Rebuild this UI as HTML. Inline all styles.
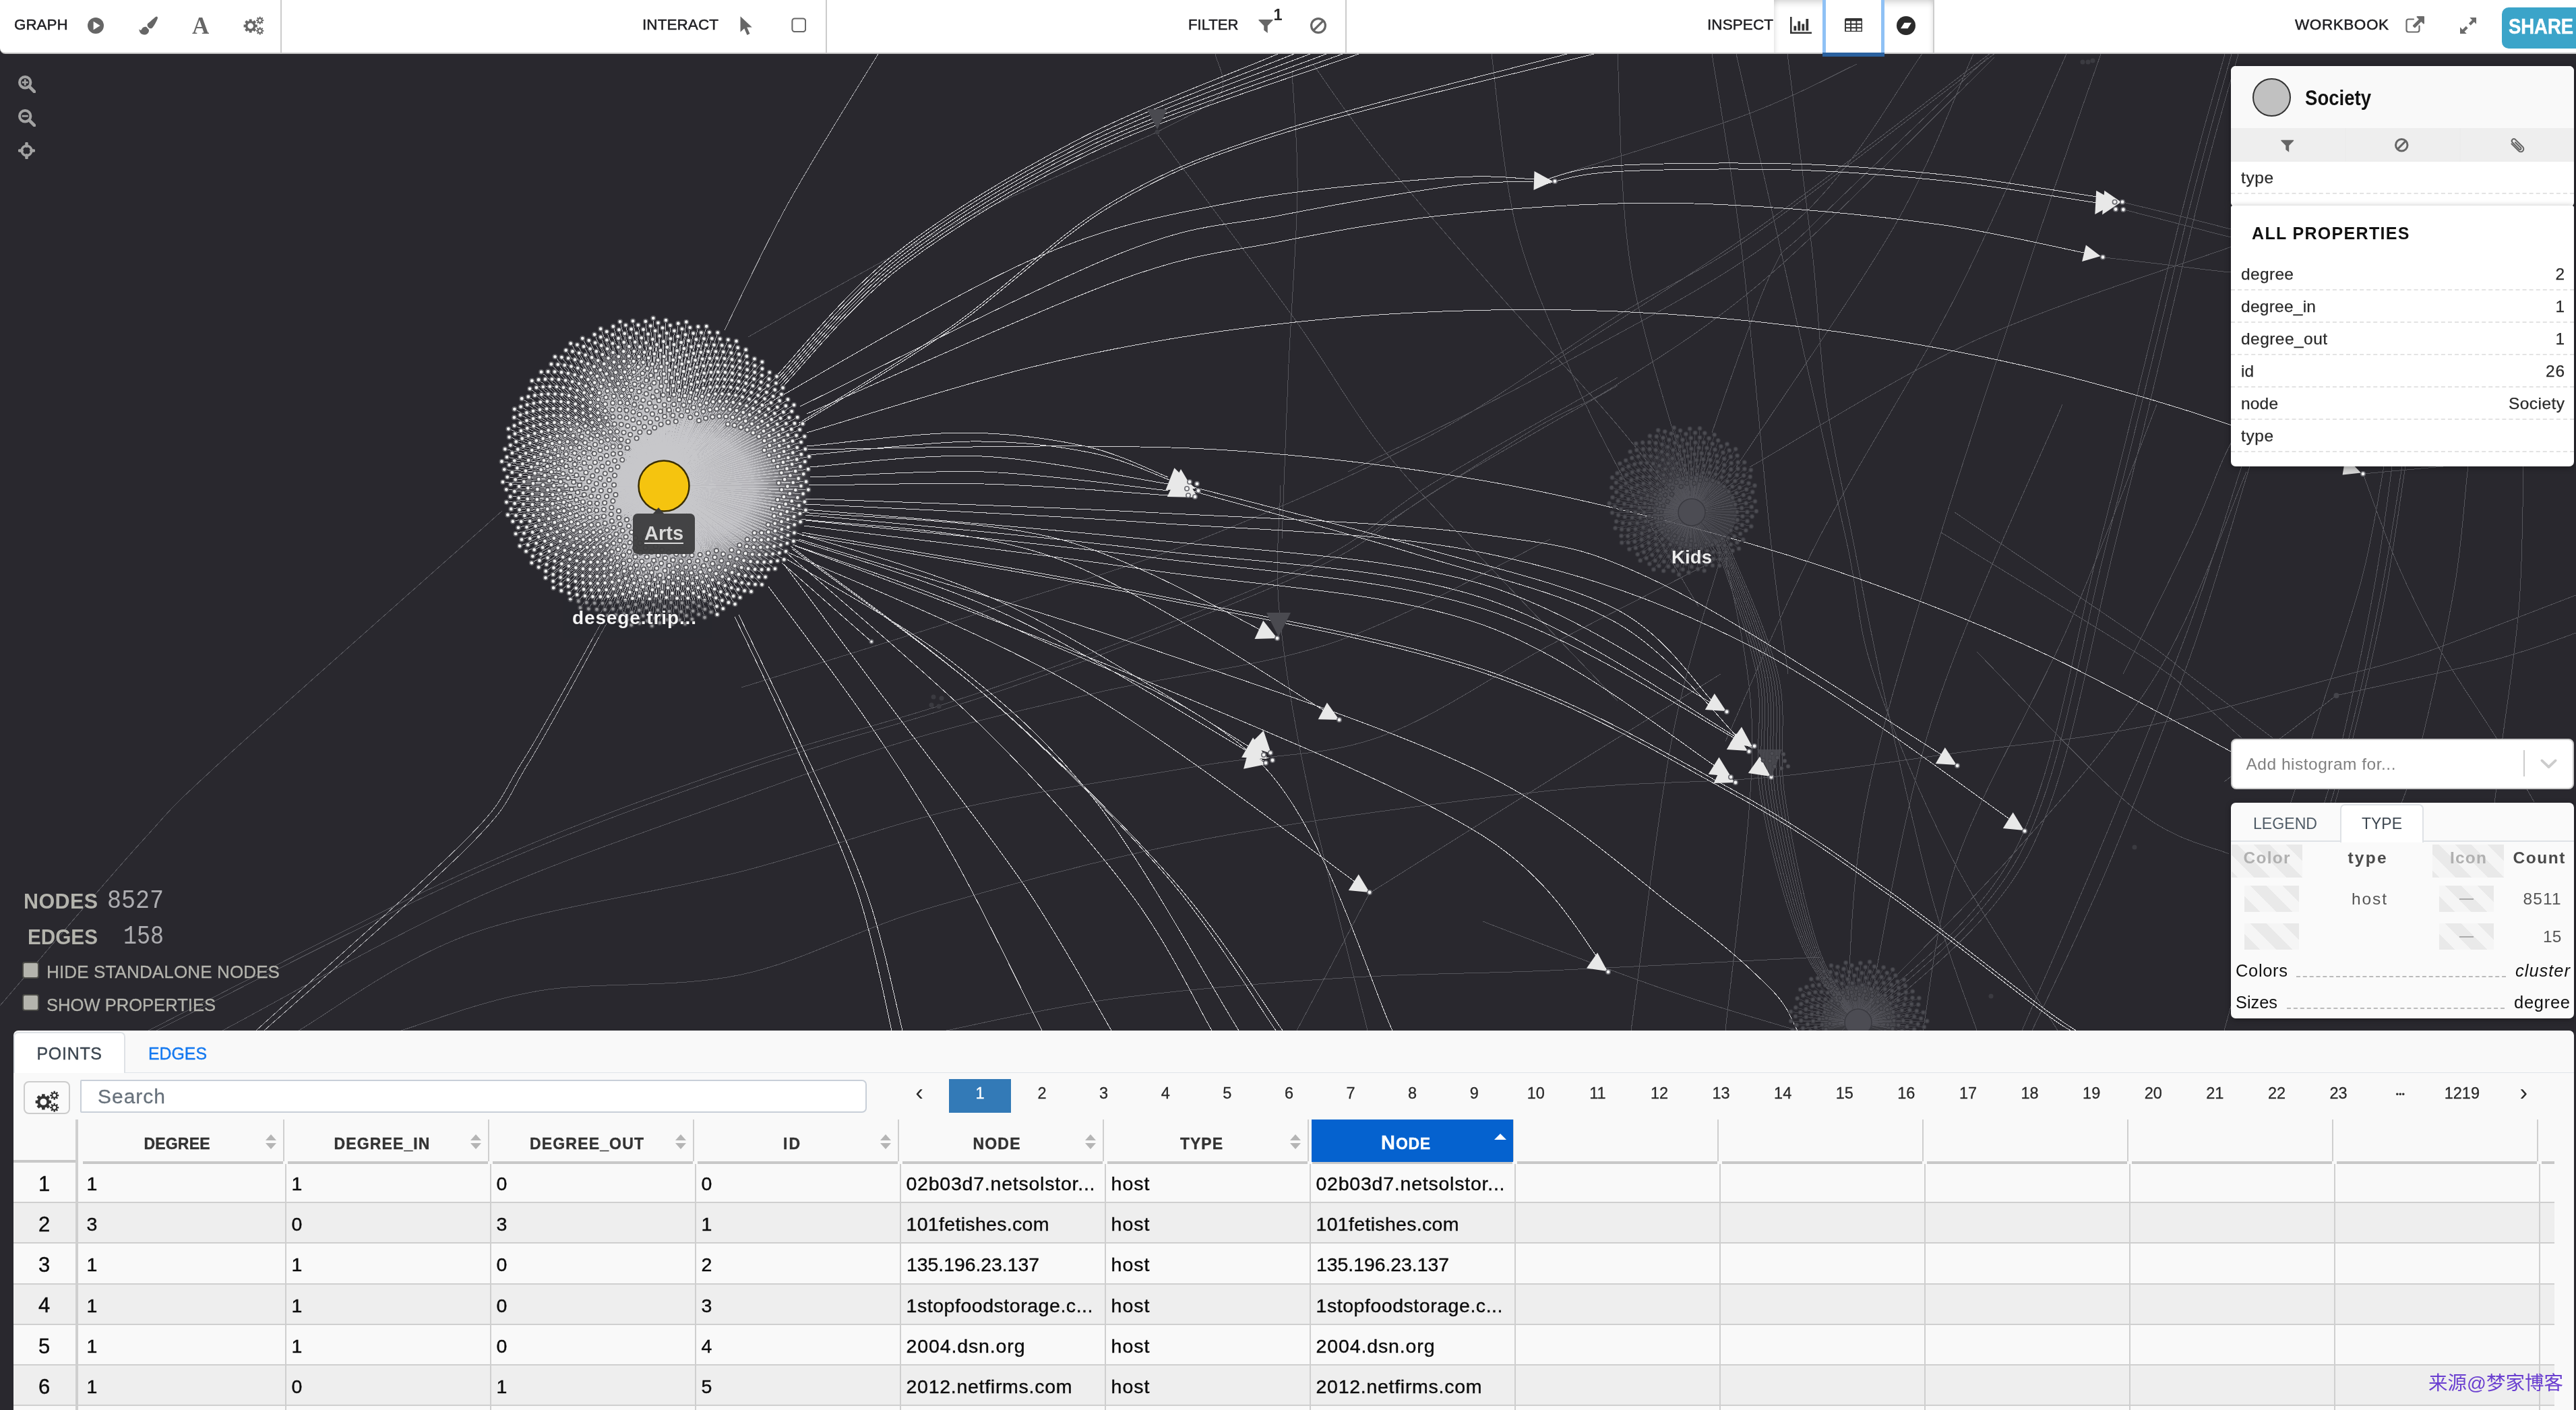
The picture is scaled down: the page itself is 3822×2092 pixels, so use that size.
<!DOCTYPE html><html lang="en"><head><meta charset="utf-8"><title>Graph</title><style>
html,body{margin:0;padding:0}
#w{position:absolute;left:0;top:0;width:3822px;height:2092px;overflow:hidden;will-change:transform}
body{width:3822px;height:2092px;overflow:hidden;background:#29282e;position:relative;font-family:"Liberation Sans",sans-serif}
.b{position:absolute;box-sizing:border-box;display:block}
.t{position:absolute;white-space:nowrap;line-height:1}
.d{fill:none;stroke:#55555b;stroke-width:1;shape-rendering:crispEdges}
.e{fill:none;stroke:#d8d8da;stroke-width:1;shape-rendering:crispEdges}
.m{fill:none;stroke:#a8a8ac;stroke-width:1;shape-rendering:crispEdges}
.dash{position:absolute;height:0;border-top:2px dashed #e3e3e3}
</style></head><body><div id="w">
<svg class="b" style="left:0;top:0" width="3822" height="1540" viewBox="0 0 3822 1540">
<path d="M0 1492C35 1452 154 1310 209 1250C264 1190 239 1212 328 1130C417 1048 676 820 745 758" class="d"/>
<path d="M220 1529C300 1489 553 1356 700 1290C847 1224 984 1176 1100 1136C1216 1096 1298 1078 1394 1047C1490 1016 1582 984 1677 947C1772 910 1892 864 1966 826C2040 788 2049 764 2121 720C2193 676 2354 587 2400 560" class="d"/>
<path d="M232 1529C311 1490 560 1360 705 1296C850 1232 985 1184 1100 1144C1215 1104 1298 1086 1394 1055C1490 1024 1581 992 1677 955C1773 918 1894 872 1970 834C2046 796 2058 772 2130 728C2202 684 2355 598 2400 572" class="d"/>
<path d="M330 1529C392 1497 572 1393 700 1335C828 1277 990 1223 1100 1183C1210 1143 1273 1120 1362 1094C1451 1068 1532 1050 1635 1026C1738 1002 1871 990 1982 952C2093 914 2247 825 2300 800" class="d"/>
<path d="M443 1529C486 1505 590 1424 700 1385C810 1346 979 1324 1100 1293C1221 1262 1311 1225 1425 1199C1539 1173 1679 1154 1782 1136C1885 1118 1959 1124 2045 1094C2131 1064 2215 1002 2300 957C2385 912 2511 849 2553 827" class="d"/>
<path d="M595 1529C629 1519 716 1484 800 1470C884 1456 1003 1467 1100 1446C1197 1425 1269 1379 1383 1346C1497 1313 1629 1275 1782 1246C1935 1217 2159 1188 2300 1173C2441 1158 2522 1163 2627 1153C2732 1143 2854 1123 2933 1113C3012 1103 3047 1100 3100 1092C3153 1084 3189 1077 3250 1063C3311 1048 3405 1022 3463 1006C3522 990 3541 987 3601 967C3660 946 3785 897 3822 883" class="d"/>
<path d="M1404 1529C1445 1521 1553 1495 1651 1482C1749 1469 1884 1458 1992 1451C2100 1444 2182 1445 2300 1440C2418 1435 2633 1423 2700 1420" class="d"/>
<path d="M1100 1020C1161 1001 1353 942 1467 905C1581 868 1673 843 1782 800C1891 757 2018 702 2121 647C2224 592 2319 518 2400 468C2481 418 2513 411 2606 346C2699 281 2900 124 2959 80" class="d"/>
<path d="M1900 720C1900 751 1891 830 1898 905C1905 980 1918 1063 1940 1167C1962 1271 2014 1469 2029 1529" class="d"/>
<path d="M2032 1325L1924 1529" class="d"/>
<path d="M2032 1325C2077 1297 2213 1211 2300 1157C2387 1103 2511 1026 2553 1000" class="d"/>
<path d="M1803 80C1804 90 1824 121 1810 140C1796 159 1732 187 1717 196" class="d"/>
<path d="M1917 105C1918 135 1926 212 1925 284C1924 356 1916 454 1912 540C1908 626 1904 757 1902 800" class="d"/>
<path d="M1718 200C1751 245 1862 392 1917 468C1972 544 2002 602 2045 657C2088 712 2113 736 2172 800C2231 864 2362 1000 2400 1040" class="d"/>
<path d="M1717 196C1664 220 1501 289 1400 340C1299 391 1158 473 1110 500" class="d"/>
<path d="M1948 95C1964 117 1999 171 2045 228C2091 285 2165 370 2224 437C2283 504 2345 566 2400 631C2455 696 2528 794 2553 827" class="d"/>
<path d="M2213 80C2219 122 2230 258 2249 335C2268 412 2301 480 2326 540C2351 600 2368 633 2400 693C2432 753 2500 866 2520 900" class="d"/>
<path d="M2019 800C2062 773 2212 675 2275 637C2338 599 2341 608 2400 570C2459 532 2534 488 2627 407C2720 326 2904 139 2959 85" class="d"/>
<path d="M2300 540C2351 507 2497 417 2606 340C2715 263 2894 123 2952 80" class="d"/>
<path d="M2540 642C2554 603 2602 458 2627 407C2652 356 2634 389 2688 335C2742 281 2906 127 2949 85" class="d"/>
<path d="M2540 80C2548 131 2572 266 2586 386C2600 506 2616 698 2627 800C2638 902 2649 967 2653 1000" class="d"/>
<path d="M2576 80C2590 140 2630 317 2657 437C2684 557 2718 706 2739 800C2760 894 2754 922 2780 1000C2806 1078 2848 1179 2893 1267C2938 1355 3026 1485 3053 1529" class="d"/>
<path d="M2652 80C2658 128 2678 281 2688 366C2698 451 2699 519 2709 591C2719 663 2734 724 2749 800C2764 876 2780 961 2800 1050C2820 1139 2845 1253 2867 1333C2889 1413 2922 1496 2933 1529" class="d"/>
<path d="M2300 264C2348 249 2510 200 2586 172C2662 144 2727 108 2755 95" class="d"/>
<path d="M2852 80C2820 122 2749 257 2657 335C2565 413 2410 489 2300 550C2190 611 2050 675 2000 700" class="d"/>
<path d="M2928 80C2908 122 2870 233 2811 335C2752 437 2615 633 2576 693" class="d"/>
<path d="M3066 80C3039 140 2964 317 2903 437C2842 557 2755 690 2698 800C2641 910 2583 1050 2560 1100" class="d"/>
<path d="M3117 80C3098 134 3045 287 3005 407C2965 527 2917 668 2877 800C2837 932 2790 1078 2767 1200C2744 1322 2744 1474 2740 1529" class="d"/>
<path d="M3301 80C3292 114 3276 164 3245 284C3214 404 3160 636 3117 800C3074 964 3051 1146 2987 1267C2923 1388 2775 1485 2733 1529" class="d"/>
<path d="M3311 80C3302 114 3286 164 3255 284C3224 404 3170 636 3127 800C3084 964 3061 1146 2997 1267C2933 1388 2787 1485 2745 1529" class="d"/>
<path d="M3321 80C3312 114 3295 164 3265 284C3235 404 3182 636 3140 800C3098 964 3073 1146 3010 1267C2947 1388 2802 1485 2760 1529" class="d"/>
<path d="M3311 366C3248 389 3052 450 2933 504C2814 558 2652 662 2596 693" class="d"/>
<path d="M3333 700C3311 750 3258 906 3200 1000C3142 1094 3065 1179 2987 1267C2909 1355 2775 1485 2733 1529" class="d"/>
<path d="M3060 600C3028 678 2916 912 2867 1067C2818 1222 2784 1452 2767 1529" class="d"/>
<path d="M3200 600C3178 656 3116 822 3067 933C3018 1044 2943 1168 2907 1267C2871 1366 2862 1485 2853 1529" class="d"/>
<path d="M2200 1367C2244 1384 2389 1440 2467 1467C2545 1494 2634 1519 2667 1529" class="d"/>
<path d="M2933 967C2972 1006 3105 1150 3167 1200C3229 1250 3284 1256 3307 1267" class="d"/>
<path d="M3320 640C3316 647 3311 654 3299 680C3287 706 3275 743 3250 796C3225 849 3167 966 3150 1000" class="d"/>
<path d="M3345 640C3342 649 3342 645 3326 692C3310 739 3284 831 3250 924C3216 1017 3162 1149 3120 1250C3078 1351 3020 1482 3000 1529" class="d"/>
<path d="M3357 640C3354 649 3356 636 3338 692C3320 748 3285 875 3250 973C3215 1071 3169 1187 3130 1280C3091 1373 3034 1488 3015 1529" class="d"/>
<path d="M3545 640C3544 649 3544 655 3537 692C3530 729 3521 796 3503 863C3485 930 3450 1030 3430 1095C3410 1160 3402 1178 3380 1250C3358 1322 3313 1482 3300 1529" class="d"/>
<path d="M3556 640C3555 649 3554 655 3549 692C3544 729 3536 796 3524 863C3512 930 3491 1030 3476 1095C3460 1160 3438 1224 3430 1250" class="d"/>
<path d="M3572 640C3571 649 3571 650 3564 692C3557 734 3544 826 3530 893C3517 960 3500 1036 3485 1095C3470 1154 3448 1224 3440 1250" class="d"/>
<path d="M3577 640C3576 649 3575 650 3569 692C3562 734 3550 826 3537 893C3524 960 3506 1036 3491 1095C3476 1154 3455 1224 3448 1250" class="d"/>
<path d="M3668 640C3667 649 3666 655 3662 692C3657 729 3654 796 3643 863C3632 930 3608 1039 3594 1095C3581 1151 3566 1182 3560 1200" class="d"/>
<path d="M3746 640C3746 649 3745 650 3744 692C3743 734 3743 826 3738 893C3733 960 3720 1044 3713 1095C3707 1146 3702 1182 3700 1200" class="d"/>
<path d="M3506 703C3514 724 3536 788 3555 832C3574 876 3597 923 3622 967C3647 1010 3681 1058 3704 1095C3727 1132 3751 1174 3760 1190" class="d"/>
<path d="M3466 1032C3506 1023 3642 994 3701 979C3760 963 3802 946 3822 939" class="d"/>
<path d="M3466 1032C3453 1042 3412 1074 3384 1095C3356 1116 3314 1149 3300 1160" class="d"/>
<path d="M2900 760C2947 792 3122 910 3180 950C3238 990 3218 979 3250 1003C3282 1027 3352 1080 3372 1095" class="d"/>
<path d="M2880 790C2930 821 3118 935 3180 975C3242 1015 3226 1008 3250 1028C3274 1048 3313 1084 3326 1095" class="d"/>
<path d="M3506 703L3625 692" class="d"/>
<path d="M3150 300C3165 304 3213 315 3240 322C3267 329 3298 337 3310 340" class="d"/>
<path d="M3151 311C3166 315 3214 327 3240 334C3266 341 3298 349 3310 352" class="d"/>
<path d="M3122 382C3142 384 3209 392 3240 396C3271 400 3298 403 3310 404" class="d"/>
<path d="M2400 80C2403 133 2403 297 2420 400C2437 503 2487 650 2500 700" class="d"/>
<path d="M2553 827C2541 872 2502 983 2480 1100C2458 1217 2430 1458 2420 1529" class="d"/>
<path d="M2560 827C2567 872 2600 983 2600 1100C2600 1217 2567 1458 2560 1529" class="d"/>
<path d="M2543 800C2554 833 2594 937 2606 1000C2618 1063 2601 1113 2612 1180C2623 1247 2649 1344 2672 1400C2695 1456 2735 1494 2748 1513" class="d"/>
<path d="M2545 800C2556 833 2598 937 2610 1000C2622 1063 2606 1113 2616 1180C2627 1247 2653 1344 2675 1400C2697 1456 2737 1494 2749 1513" class="d"/>
<path d="M2547 800C2558 833 2602 937 2614 1000C2626 1063 2610 1113 2621 1180C2632 1247 2656 1344 2678 1400C2700 1456 2738 1494 2750 1513" class="d"/>
<path d="M2550 800C2561 833 2605 937 2618 1000C2631 1063 2615 1113 2626 1180C2636 1247 2660 1344 2681 1400C2702 1456 2739 1494 2751 1513" class="d"/>
<path d="M2552 800C2564 833 2609 937 2622 1000C2635 1063 2620 1113 2630 1180C2640 1247 2664 1344 2684 1400C2704 1456 2741 1494 2752 1513" class="d"/>
<path d="M2554 800C2566 833 2613 937 2626 1000C2639 1063 2624 1113 2634 1180C2645 1247 2667 1344 2687 1400C2707 1456 2742 1494 2753 1513" class="d"/>
<path d="M2556 800C2568 833 2616 937 2630 1000C2644 1063 2629 1113 2639 1180C2649 1247 2671 1344 2690 1400C2709 1456 2743 1494 2754 1513" class="d"/>
<path d="M2558 800C2571 833 2620 937 2634 1000C2648 1063 2634 1113 2644 1180C2653 1247 2674 1344 2693 1400C2712 1456 2745 1494 2755 1513" class="d"/>
<path d="M2561 800C2574 833 2623 937 2638 1000C2653 1063 2638 1113 2648 1180C2658 1247 2678 1344 2696 1400C2714 1456 2746 1494 2756 1513" class="d"/>
<path d="M1075 490C1091 458 1134 365 1172 297C1210 229 1281 116 1303 80" class="m"/>
<path d="M894 921C874 956 810 1075 775 1130C740 1185 753 1184 687 1250C621 1316 431 1482 380 1529" class="m"/>
<path d="M900 925C880 960 817 1079 783 1134C749 1189 762 1188 697 1254C632 1320 443 1483 392 1529" class="m"/>
<path d="M1150 560C1179 530 1252 436 1326 378C1400 320 1499 260 1594 210C1689 160 1846 102 1896 80" class="e"/>
<path d="M1152 563C1182 533 1254 440 1329 381C1404 322 1504 262 1602 212C1700 162 1867 102 1920 80" class="e"/>
<path d="M1154 566C1184 536 1256 443 1332 384C1408 325 1508 265 1610 214C1712 163 1888 102 1944 80" class="e"/>
<path d="M1156 569C1186 539 1258 446 1335 387C1412 328 1512 267 1618 216C1724 165 1910 103 1968 80" class="e"/>
<path d="M1158 572C1188 542 1260 449 1338 390C1416 331 1517 270 1626 218C1735 166 1931 103 1992 80" class="e"/>
<path d="M1160 575C1190 545 1262 452 1341 393C1420 334 1522 272 1634 220C1746 168 1952 103 2016 80" class="e"/>
<path d="M1185 628C1223 604 1337 537 1415 482C1493 427 1571 346 1653 298C1735 250 1794 228 1906 192C2018 156 2255 99 2325 80" class="e"/>
<path d="M1185 631C1223 607 1337 541 1415 486C1493 431 1571 351 1653 303C1735 255 1787 234 1906 197C2025 160 2288 100 2365 80" class="e"/>
<path d="M1100 621C1172 582 1407 440 1529 386C1651 332 1728 320 1830 300C1932 280 2067 270 2142 264C2217 258 2257 266 2280 266" class="e"/>
<path d="M1187 603C1266 565 1544 423 1662 376C1780 329 1816 336 1897 320C1978 304 2084 286 2147 277C2210 268 2254 270 2275 269" class="e"/>
<path d="M1197 614C1274 581 1540 460 1657 417C1774 374 1822 374 1902 358C1982 342 2054 329 2137 320C2220 311 2320 304 2400 302C2480 300 2538 302 2617 307C2696 312 2797 322 2877 333C2957 344 3060 369 3097 376" class="e"/>
<path d="M2289 268C2306 264 2331 250 2392 246C2453 242 2574 241 2657 243C2740 245 2816 252 2892 260C2968 268 3075 287 3112 292" class="e"/>
<path d="M2289 274C2306 271 2331 259 2392 255C2453 251 2574 250 2657 252C2740 254 2816 261 2892 269C2968 277 3075 296 3112 301" class="e"/>
<path d="M1197 642C1252 626 1426 570 1529 545C1632 520 1720 504 1815 491C1910 478 1998 469 2096 464C2194 459 2304 458 2400 462C2496 466 2579 473 2673 485C2767 497 2870 514 2964 534C3058 554 3148 579 3235 606C3322 633 3445 679 3487 694" class="e"/>
<path d="M1197 662C1235 659 1358 642 1427 642C1496 642 1559 651 1610 662C1661 673 1712 700 1733 708" class="e"/>
<path d="M1200 675C1240 672 1370 656 1440 655C1510 654 1571 662 1620 672C1669 682 1716 705 1735 712" class="e"/>
<path d="M1202 693C1244 690 1368 673 1457 677C1546 681 1687 711 1733 718" class="e"/>
<path d="M1202 708C1245 707 1372 697 1460 700C1548 703 1688 723 1733 728" class="e"/>
<path d="M1200 720C1243 720 1371 716 1460 718C1549 720 1688 732 1733 735" class="e"/>
<path d="M1197 667C1266 666 1497 661 1610 662C1723 663 1778 664 1876 672C1974 680 2096 695 2200 713C2304 731 2408 756 2500 780C2592 804 2665 826 2753 857C2841 888 2934 924 3027 967C3120 1010 3263 1090 3310 1115" class="e"/>
<path d="M1195 740C1279 743 1532 751 1700 760C1868 769 2072 775 2200 793C2328 811 2351 811 2467 867C2583 923 2825 1086 2897 1130" class="e"/>
<path d="M1195 748C1279 752 1532 763 1700 775C1868 787 2050 789 2200 820C2350 851 2467 892 2600 960C2733 1028 2933 1183 3000 1228" class="e"/>
<path d="M1195 756C1279 763 1532 782 1700 800C1868 818 2058 825 2200 867C2342 909 2496 1021 2555 1052" class="e"/>
<path d="M1195 764C1279 772 1532 794 1700 815C1868 836 2051 839 2200 887C2349 935 2529 1069 2595 1105" class="e"/>
<path d="M1195 772C1279 781 1532 804 1700 826C1868 848 2050 856 2200 903C2350 950 2533 1076 2600 1110" class="e"/>
<path d="M1193 780C1278 791 1532 820 1700 845C1868 870 2056 876 2200 927C2344 978 2504 1113 2565 1150" class="e"/>
<path d="M1190 790C1275 805 1532 846 1700 880C1868 914 2054 944 2200 993C2346 1042 2473 1118 2573 1173C2673 1228 2726 1268 2800 1320C2874 1372 2973 1452 3020 1487C3067 1522 3070 1522 3080 1529" class="e"/>
<path d="M1190 794C1275 809 1532 850 1700 884C1868 918 2054 949 2200 998C2346 1047 2473 1124 2573 1179C2673 1234 2726 1274 2800 1326C2874 1378 2975 1459 3020 1493C3065 1527 3063 1523 3072 1529" class="e"/>
<path d="M1185 800C1271 827 1531 902 1700 960C1869 1018 2068 1082 2200 1147C2332 1212 2422 1300 2493 1353C2564 1406 2598 1438 2627 1467C2656 1496 2660 1519 2667 1529" class="e"/>
<path d="M1180 810C1267 843 1530 938 1700 1010C1870 1082 2086 1168 2200 1240C2314 1312 2354 1407 2385 1440" class="e"/>
<path d="M1190 760C1254 767 1454 769 1572 800C1690 831 1841 922 1895 947" class="e"/>
<path d="M1188 770C1252 780 1439 780 1572 830C1705 880 1918 1028 1987 1068" class="e"/>
<path d="M1180 790C1233 808 1383 844 1500 900C1617 956 1818 1088 1882 1125" class="e"/>
<path d="M1178 800C1232 819 1383 860 1500 915C1617 970 1817 1096 1880 1132" class="e"/>
<path d="M1176 808C1230 828 1383 875 1500 930C1617 985 1782 1038 1876 1138C1970 1238 2034 1464 2066 1529" class="e"/>
<path d="M1170 820C1242 853 1456 936 1600 1020C1744 1104 1960 1273 2032 1324" class="e"/>
<path d="M1160 835L1293 952" class="e"/>
<path d="M1173 810C1222 848 1374 954 1467 1036C1560 1118 1659 1217 1730 1299C1801 1381 1866 1491 1893 1529" class="e"/>
<path d="M1175 814C1224 852 1378 958 1472 1040C1566 1122 1666 1222 1738 1303C1810 1384 1876 1491 1903 1529" class="e"/>
<path d="M1168 821C1217 865 1377 999 1462 1083C1547 1167 1621 1251 1677 1325C1733 1399 1778 1495 1798 1529" class="e"/>
<path d="M1168 830C1209 856 1339 924 1415 984C1491 1044 1554 1097 1625 1188C1696 1279 1802 1472 1838 1529" class="e"/>
<path d="M1163 837C1194 879 1292 1010 1352 1089C1412 1168 1470 1241 1520 1314C1570 1387 1628 1493 1649 1529" class="e"/>
<path d="M1140 870C1165 904 1243 1006 1289 1073C1335 1140 1372 1196 1415 1272C1458 1348 1524 1486 1546 1529" class="e"/>
<path d="M1090 915C1106 948 1154 1047 1184 1115C1214 1183 1250 1256 1273 1325C1296 1394 1315 1495 1323 1529" class="e"/>
<path d="M1096 912C1112 945 1160 1044 1192 1112C1224 1180 1260 1252 1285 1322C1310 1392 1330 1494 1339 1529" class="e"/>
<path d="M1760 720C1817 735 1993 779 2100 810C2207 841 2326 866 2400 905C2474 944 2520 1021 2544 1044" class="e"/>
<path d="M1760 726C1817 742 1993 789 2100 822C2207 855 2320 879 2400 925C2480 971 2552 1069 2582 1098" class="e"/>
<ellipse cx="2515" cy="760" rx="62" ry="55" fill="#48484e" fill-opacity=".6"/>
<path d="M2510 760L2480.5 733.4M2510 760L2494.3 721.8M2510 760L2474.3 743.9M2510 760L2481.2 724.1M2510 760L2502.8 717.2M2510 760L2470.7 734.6M2510 760L2487.1 715.6M2510 760L2467.8 750.7M2510 760L2513.6 717.2M2510 760L2472.0 723.6M2510 760L2497.2 709.9M2510 760L2463.2 739.9M2510 760L2478.2 713.1M2510 760L2464.8 759.5M2510 760L2509.7 708.7M2510 760L2463.2 727.0M2510 760L2488.9 705.3M2510 760L2457.9 747.9M2510 760L2522.8 712.7M2510 760L2468.6 714.2M2510 760L2465.2 769.3M2510 760L2502.8 701.8M2510 760L2455.7 733.5M2510 760L2479.0 703.5M2510 760L2455.4 757.7M2510 760L2517.9 703.8M2510 760L2459.2 718.4M2510 760L2468.8 779.1M2510 760L2493.4 697.0M2510 760L2450.2 742.5M2510 760L2532.0 711.5M2510 760L2468.3 704.8M2510 760L2455.9 768.6M2510 760L2510.1 696.1M2510 760L2450.9 725.6M2510 760L2475.4 788.0M2510 760L2482.4 694.9M2510 760L2447.3 753.4M2510 760L2526.8 701.5M2510 760L2457.8 709.3M2510 760L2459.6 779.5M2510 760L2499.9 690.5M2510 760L2444.4 735.4M2510 760L2541.2 712.9M2510 760L2484.7 795.3M2510 760L2470.6 695.9M2510 760L2447.2 765.4M2510 760L2518.7 692.6M2510 760L2448.2 716.8M2510 760L2466.3 789.8M2510 760L2488.0 687.5M2510 760L2440.4 747.1M2510 760L2536.1 701.5M2510 760L2496.2 800.3M2510 760L2458.8 700.0M2510 760L2450.4 777.7M2510 760L2508.0 685.7M2510 760L2440.4 726.9M2510 760L2549.8 716.5M2510 760L2475.8 798.5M2510 760L2475.1 687.6M2510 760L2439.4 760.2M2510 760L2528.0 691.2M2510 760L2509.2 802.4M2510 760L2447.7 707.3M2510 760L2456.8 789.3M2510 760L2495.4 681.4M2510 760L2435.0 739.2M2510 760L2545.5 703.8M2510 760L2487.7 804.9M2510 760L2461.9 690.9M2510 760L2441.6 773.7M2510 760L2517.2 682.7M2510 760L2438.3 717.4M2510 760L2557.8 722.1M2510 760L2466.2 799.7M2510 760L2481.4 680.2M2510 760L2432.6 753.1M2510 760L2537.8 691.8M2510 760L2501.5 808.5M2510 760L2449.3 697.5M2510 760L2447.2 786.9M2510 760L2504.1 676.8M2510 760L2431.2 730.0M2510 760L2554.5 708.0M2510 760L2478.2 807.8M2510 760L2467.0 682.3M2510 760L2433.5 767.8M2510 760L2527.2 681.6M2510 760L2516.3 808.9M2510 760L2438.1 707.3M2510 760L2564.7 729.5M2510 760L2456.1 798.9M2510 760L2489.4 673.9M2510 760L2427.1 744.5M2510 760L2547.7 694.5M2510 760L2492.4 813.2M2510 760L2452.8 687.9M2510 760L2437.9 782.4M2510 760L2514.0 673.8M2510 760L2531.3 805.7M2510 760L2429.2 719.9M2510 760L2562.8 714.1M2510 760L2467.9 808.9M2510 760L2473.9 674.5M2510 760L2426.3 760.2M2510 760L2537.6 682.5M2510 760L2508.0 815.3M2510 760L2439.9 697.0M2510 760L2570.4 738.4M2510 760L2445.9 796.1M2510 760L2498.8 669.1M2510 760L2423.1 734.7M2510 760L2557.3 699.1M2510 760L2482.2 816.3M2510 760L2458.3 678.8M2510 760L2429.3 776.1M2510 760L2524.6 672.7M2510 760L2524.2 813.7M2510 760L2429.0 709.1M2510 760L2570.2 722.0M2510 760L2457.1 808.1M2510 760L2482.4 667.8M2510 760L2420.5 751.0M2510 760L2548.2 685.2M2510 760L2498.3 820.4M2510 760L2443.6 686.7M2510 760L2574.6 748.5M2510 760L2436.0 791.5M2510 760L2509.3 665.8M2510 760L2540.2 808.4M2510 760L2420.8 723.9M2510 760L2566.2 705.5M2510 760L2471.2 817.6M2510 760L2465.6 670.4M2510 760L2421.6 768.1M2510 760L2535.8 673.4M2510 760L2515.5 820.7M2510 760L2430.7 698.1M2510 760L2576.4 731.3M2510 760L2446.2 805.4M2510 760L2492.3 662.5M2510 760L2555.0 799.3M2510 760L2416.0 740.6M2510 760L2558.4 689.9M2510 760L2487.5 823.8M2510 760L2449.3 676.8M2510 760L2577.1 759.6M2510 760L2426.6 784.9M2510 760L2520.6 664.3M2510 760L2532.8 817.1M2510 760L2420.4 712.4M2510 760L2574.3 713.7M2510 760L2459.7 817.0M2510 760L2474.5 663.1M2510 760L2567.8 786.8M2510 760L2415.0 758.5M2510 760L2547.1 676.1M2510 760L2505.3 826.4M2510 760L2434.4 687.0M2510 760L2581.1 742.0M2510 760L2435.5 800.7M2510 760L2503.4 658.7M2510 760L2549.3 809.6M2510 760L2413.3 729.2M2510 760L2568.2 696.5M2510 760L2475.9 825.5M2510 760L2456.7 667.7M2510 760L2577.7 771.4M2510 760L2418.1 776.7M2510 760L2532.5 664.7M2510 760L2523.8 824.8M2510 760L2421.8 700.6M2510 760L2581.2 723.4M2510 760L2448.0 814.5M2510 760L2484.8 657.1M2510 760L2564.2 798.2M2510 760L2410.0 747.7M2510 760L2558.2 680.7M2510 760L2494.0 830.4M2510 760L2440.0 676.4M2510 760L2584.2 753.7M2510 760L2425.4 794.1M2510 760L2515.3 656.7M2510 760L2541.9 819.1M2510 760L2412.3 717.1M2510 760L2577.1 704.8M2510 760L2463.7 825.4M2510 760L2465.9 659.6M2510 760L2576.5 783.6M2510 760L2410.8 766.8M2510 760L2544.5 667.1M2510 760L2513.3 831.2M2510 760L2425.3 688.8M2510 760L2586.7 734.5M2510 760L2436.5 810.0M2510 760L2496.4 652.6M2510 760L2558.7 809.3M2510 760L2406.6 735.7M2510 760L2568.7 687.2M2510 760L2481.8 832.8M2510 760L2447.5 666.4M2510 760L2585.4 766.1M2510 760L2416.0 785.8M2510 760L2527.8 656.6M2510 760L2532.7 827.7M2510 760L2413.3 704.6M2510 760L2584.8 714.8M2510 760L2451.2 823.3M2510 760L2476.5 652.7M2510 760L2573.2 795.8M2510 760L2405.0 755.6M2510 760L2556.5 671.4M2510 760L2501.5 836.1M2510 760L2430.7 677.3M2510 760L2590.5 746.6M2510 760L2425.5 803.6M2510 760L2508.8 649.9M2510 760L2551.3 819.8M2510 760L2405.0 723.0M2510 760L2578.5 695.5M2510 760L2468.9 833.2M2510 760L2456.7 657.3M2510 760L2584.7 779.0M2510 760L2407.9 775.8M2510 760L2540.7 658.5M2510 760L2522.0 835.0M2510 760L2416.3 691.9M2510 760L2591.1 726.1M2510 760L2438.9 819.1M2510 760L2488.4 647.4M2510 760L2568.0 807.8M2510 760L2400.7 743.2M2510 760L2567.9 677.7M2510 760L2488.8 839.2M2510 760L2438.0 666.4M2510 760L2592.4 759.7M2510 760L2415.2 795.3M2510 760L2522.0 649.1M2510 760L2542.1 829.3M2510 760L2405.3 709.8M2510 760L2587.2 705.5M2510 760L2455.7 831.7M2510 760L2467.5 649.6M2510 760L2582.0 792.0M2510 760L2401.1 764.3M2510 760L2553.4 662.3M2510 760L2509.9 840.8M2510 760L2421.3 679.5M2510 760L2595.8 738.7M2510 760L2426.9 813.0M2510 760L2501.4 643.9M2510 760L2560.8 819.1M2510 760L2398.3 730.0M2510 760L2578.7 685.9M2510 760L2475.3 840.4M2510 760L2447.1 656.4M2510 760L2592.5 773.2M2510 760L2406.1 785.3M2510 760L2535.6 650.3M2510 760L2531.3 837.6M2510 760L2407.7 696.3M2510 760L2594.5 717.1M2510 760L2442.6 828.1M2510 760L2479.6 643.3M2510 760L2577.3 804.9M2510 760L2395.9 751.6M2510 760L2565.8 668.2M2510 760L2496.7 844.8M2510 760L2428.3 667.7M2510 760L2598.7 752.2M2510 760L2415.7 805.0M2510 760L2515.1 642.2M2510 760L2551.8 829.6M2510 760L2397.9 716.1M2510 760L2588.4 695.8M2510 760L2461.4 839.6M2510 760L2457.9 647.6M2510 760L2590.4 787.0M2510 760L2398.2 773.7M2510 760L2549.2 653.5M2510 760L2519.0 844.3M2510 760L2412.2 683.1M2510 760L2600.2 729.9M2510 760L2429.7 822.5M2510 760L2493.0 638.8M2510 760L2570.5 817.2M2510 760L2392.5 737.9M2510 760L2577.6 676.1M2510 760L2482.7 846.9M2510 760L2437.2 656.6M2510 760L2599.5 766.3M2510 760L2405.5 795.1M2510 760L2529.3 642.6M2510 760L2541.0 839.0M2510 760L2399.6 701.9M2510 760L2596.7 707.4M2510 760L2447.4 836.7M2510 760L2470.2 640.3M2510 760L2586.3 800.7M2510 760L2392.0 760.8M2510 760L2562.5 658.9M2510 760L2505.5 849.4M2510 760L2418.7 670.2M2510 760L2604.0 743.8M2510 760L2417.4 814.8M2510 760L2507.2 636.2M2510 760L2561.7 828.8M2510 760L2391.2 723.5M2510 760L2588.3 685.9M2510 760L2468.2 847.0M2510 760L2447.9 646.8M2510 760L2598.3 780.9M2510 760L2396.6 783.6M2510 760L2543.7 645.1M2510 760L2528.7 846.8M2510 760L2403.4 687.8M2510 760L2603.5 720.4M2510 760L2433.7 831.7M2510 760L2483.8 634.7M2510 760L2580.0 814.0M2510 760L2387.7 746.7M2510 760L2575.2 666.3M2510 760L2491.1 852.5M2510 760L2427.3 658.2M2510 760L2605.9 758.5M2510 760L2406.2 805.2M2510 760L2522.0 635.6M2510 760L2551.2 839.2M2510 760L2392.0 708.6M2510 760L2597.8 697.3M2510 760L2453.5 844.9M2510 760L2460.2 638.3" stroke="#56565c" stroke-opacity="0.8" stroke-width="0.7" fill="none" shape-rendering="crispEdges"/>
<path d="M2477.5 733.4a3.0 3.0 0 1 0 6.0 0a3.0 3.0 0 1 0 -6.0 0M2491.3 721.8a3.0 3.0 0 1 0 6.0 0a3.0 3.0 0 1 0 -6.0 0M2471.3 743.9a3.0 3.0 0 1 0 6.0 0a3.0 3.0 0 1 0 -6.0 0M2478.2 724.1a3.0 3.0 0 1 0 6.0 0a3.0 3.0 0 1 0 -6.0 0M2499.8 717.2a3.0 3.0 0 1 0 6.0 0a3.0 3.0 0 1 0 -6.0 0M2467.7 734.6a3.0 3.0 0 1 0 6.0 0a3.0 3.0 0 1 0 -6.0 0M2484.1 715.6a3.0 3.0 0 1 0 6.0 0a3.0 3.0 0 1 0 -6.0 0M2464.8 750.7a3.0 3.0 0 1 0 6.0 0a3.0 3.0 0 1 0 -6.0 0M2510.6 717.2a3.0 3.0 0 1 0 6.0 0a3.0 3.0 0 1 0 -6.0 0M2469.0 723.6a3.0 3.0 0 1 0 6.0 0a3.0 3.0 0 1 0 -6.0 0M2494.2 709.9a3.0 3.0 0 1 0 6.0 0a3.0 3.0 0 1 0 -6.0 0M2460.2 739.9a3.0 3.0 0 1 0 6.0 0a3.0 3.0 0 1 0 -6.0 0M2475.2 713.1a3.0 3.0 0 1 0 6.0 0a3.0 3.0 0 1 0 -6.0 0M2461.8 759.5a3.0 3.0 0 1 0 6.0 0a3.0 3.0 0 1 0 -6.0 0M2506.7 708.7a3.0 3.0 0 1 0 6.0 0a3.0 3.0 0 1 0 -6.0 0M2460.2 727.0a3.0 3.0 0 1 0 6.0 0a3.0 3.0 0 1 0 -6.0 0M2485.9 705.3a3.0 3.0 0 1 0 6.0 0a3.0 3.0 0 1 0 -6.0 0M2454.9 747.9a3.0 3.0 0 1 0 6.0 0a3.0 3.0 0 1 0 -6.0 0M2519.8 712.7a3.0 3.0 0 1 0 6.0 0a3.0 3.0 0 1 0 -6.0 0M2465.6 714.2a3.0 3.0 0 1 0 6.0 0a3.0 3.0 0 1 0 -6.0 0M2462.2 769.3a3.0 3.0 0 1 0 6.0 0a3.0 3.0 0 1 0 -6.0 0M2499.8 701.8a3.0 3.0 0 1 0 6.0 0a3.0 3.0 0 1 0 -6.0 0M2452.7 733.5a3.0 3.0 0 1 0 6.0 0a3.0 3.0 0 1 0 -6.0 0M2476.0 703.5a3.0 3.0 0 1 0 6.0 0a3.0 3.0 0 1 0 -6.0 0M2452.4 757.7a3.0 3.0 0 1 0 6.0 0a3.0 3.0 0 1 0 -6.0 0M2514.9 703.8a3.0 3.0 0 1 0 6.0 0a3.0 3.0 0 1 0 -6.0 0M2456.2 718.4a3.0 3.0 0 1 0 6.0 0a3.0 3.0 0 1 0 -6.0 0M2465.8 779.1a3.0 3.0 0 1 0 6.0 0a3.0 3.0 0 1 0 -6.0 0M2490.4 697.0a3.0 3.0 0 1 0 6.0 0a3.0 3.0 0 1 0 -6.0 0M2447.2 742.5a3.0 3.0 0 1 0 6.0 0a3.0 3.0 0 1 0 -6.0 0M2529.0 711.5a3.0 3.0 0 1 0 6.0 0a3.0 3.0 0 1 0 -6.0 0M2465.3 704.8a3.0 3.0 0 1 0 6.0 0a3.0 3.0 0 1 0 -6.0 0M2452.9 768.6a3.0 3.0 0 1 0 6.0 0a3.0 3.0 0 1 0 -6.0 0M2507.1 696.1a3.0 3.0 0 1 0 6.0 0a3.0 3.0 0 1 0 -6.0 0M2447.9 725.6a3.0 3.0 0 1 0 6.0 0a3.0 3.0 0 1 0 -6.0 0M2472.4 788.0a3.0 3.0 0 1 0 6.0 0a3.0 3.0 0 1 0 -6.0 0M2479.4 694.9a3.0 3.0 0 1 0 6.0 0a3.0 3.0 0 1 0 -6.0 0M2444.3 753.4a3.0 3.0 0 1 0 6.0 0a3.0 3.0 0 1 0 -6.0 0M2523.8 701.5a3.0 3.0 0 1 0 6.0 0a3.0 3.0 0 1 0 -6.0 0M2454.8 709.3a3.0 3.0 0 1 0 6.0 0a3.0 3.0 0 1 0 -6.0 0M2456.6 779.5a3.0 3.0 0 1 0 6.0 0a3.0 3.0 0 1 0 -6.0 0M2496.9 690.5a3.0 3.0 0 1 0 6.0 0a3.0 3.0 0 1 0 -6.0 0M2441.4 735.4a3.0 3.0 0 1 0 6.0 0a3.0 3.0 0 1 0 -6.0 0M2538.2 712.9a3.0 3.0 0 1 0 6.0 0a3.0 3.0 0 1 0 -6.0 0M2481.7 795.3a3.0 3.0 0 1 0 6.0 0a3.0 3.0 0 1 0 -6.0 0M2467.6 695.9a3.0 3.0 0 1 0 6.0 0a3.0 3.0 0 1 0 -6.0 0M2444.2 765.4a3.0 3.0 0 1 0 6.0 0a3.0 3.0 0 1 0 -6.0 0M2515.7 692.6a3.0 3.0 0 1 0 6.0 0a3.0 3.0 0 1 0 -6.0 0M2445.2 716.8a3.0 3.0 0 1 0 6.0 0a3.0 3.0 0 1 0 -6.0 0M2463.3 789.8a3.0 3.0 0 1 0 6.0 0a3.0 3.0 0 1 0 -6.0 0M2485.0 687.5a3.0 3.0 0 1 0 6.0 0a3.0 3.0 0 1 0 -6.0 0M2437.4 747.1a3.0 3.0 0 1 0 6.0 0a3.0 3.0 0 1 0 -6.0 0M2533.1 701.5a3.0 3.0 0 1 0 6.0 0a3.0 3.0 0 1 0 -6.0 0M2493.2 800.3a3.0 3.0 0 1 0 6.0 0a3.0 3.0 0 1 0 -6.0 0M2455.8 700.0a3.0 3.0 0 1 0 6.0 0a3.0 3.0 0 1 0 -6.0 0M2447.4 777.7a3.0 3.0 0 1 0 6.0 0a3.0 3.0 0 1 0 -6.0 0M2505.0 685.7a3.0 3.0 0 1 0 6.0 0a3.0 3.0 0 1 0 -6.0 0M2437.4 726.9a3.0 3.0 0 1 0 6.0 0a3.0 3.0 0 1 0 -6.0 0M2546.8 716.5a3.0 3.0 0 1 0 6.0 0a3.0 3.0 0 1 0 -6.0 0M2472.8 798.5a3.0 3.0 0 1 0 6.0 0a3.0 3.0 0 1 0 -6.0 0M2472.1 687.6a3.0 3.0 0 1 0 6.0 0a3.0 3.0 0 1 0 -6.0 0M2436.4 760.2a3.0 3.0 0 1 0 6.0 0a3.0 3.0 0 1 0 -6.0 0M2525.0 691.2a3.0 3.0 0 1 0 6.0 0a3.0 3.0 0 1 0 -6.0 0M2506.2 802.4a3.0 3.0 0 1 0 6.0 0a3.0 3.0 0 1 0 -6.0 0M2444.7 707.3a3.0 3.0 0 1 0 6.0 0a3.0 3.0 0 1 0 -6.0 0M2453.8 789.3a3.0 3.0 0 1 0 6.0 0a3.0 3.0 0 1 0 -6.0 0M2492.4 681.4a3.0 3.0 0 1 0 6.0 0a3.0 3.0 0 1 0 -6.0 0M2432.0 739.2a3.0 3.0 0 1 0 6.0 0a3.0 3.0 0 1 0 -6.0 0M2542.5 703.8a3.0 3.0 0 1 0 6.0 0a3.0 3.0 0 1 0 -6.0 0M2484.7 804.9a3.0 3.0 0 1 0 6.0 0a3.0 3.0 0 1 0 -6.0 0M2458.9 690.9a3.0 3.0 0 1 0 6.0 0a3.0 3.0 0 1 0 -6.0 0M2438.6 773.7a3.0 3.0 0 1 0 6.0 0a3.0 3.0 0 1 0 -6.0 0M2514.2 682.7a3.0 3.0 0 1 0 6.0 0a3.0 3.0 0 1 0 -6.0 0M2435.3 717.4a3.0 3.0 0 1 0 6.0 0a3.0 3.0 0 1 0 -6.0 0M2554.8 722.1a3.0 3.0 0 1 0 6.0 0a3.0 3.0 0 1 0 -6.0 0M2463.2 799.7a3.0 3.0 0 1 0 6.0 0a3.0 3.0 0 1 0 -6.0 0M2478.4 680.2a3.0 3.0 0 1 0 6.0 0a3.0 3.0 0 1 0 -6.0 0M2429.6 753.1a3.0 3.0 0 1 0 6.0 0a3.0 3.0 0 1 0 -6.0 0M2534.8 691.8a3.0 3.0 0 1 0 6.0 0a3.0 3.0 0 1 0 -6.0 0M2498.5 808.5a3.0 3.0 0 1 0 6.0 0a3.0 3.0 0 1 0 -6.0 0M2446.3 697.5a3.0 3.0 0 1 0 6.0 0a3.0 3.0 0 1 0 -6.0 0M2444.2 786.9a3.0 3.0 0 1 0 6.0 0a3.0 3.0 0 1 0 -6.0 0M2501.1 676.8a3.0 3.0 0 1 0 6.0 0a3.0 3.0 0 1 0 -6.0 0M2428.2 730.0a3.0 3.0 0 1 0 6.0 0a3.0 3.0 0 1 0 -6.0 0M2551.5 708.0a3.0 3.0 0 1 0 6.0 0a3.0 3.0 0 1 0 -6.0 0M2475.2 807.8a3.0 3.0 0 1 0 6.0 0a3.0 3.0 0 1 0 -6.0 0M2464.0 682.3a3.0 3.0 0 1 0 6.0 0a3.0 3.0 0 1 0 -6.0 0M2430.5 767.8a3.0 3.0 0 1 0 6.0 0a3.0 3.0 0 1 0 -6.0 0M2524.2 681.6a3.0 3.0 0 1 0 6.0 0a3.0 3.0 0 1 0 -6.0 0M2513.3 808.9a3.0 3.0 0 1 0 6.0 0a3.0 3.0 0 1 0 -6.0 0M2435.1 707.3a3.0 3.0 0 1 0 6.0 0a3.0 3.0 0 1 0 -6.0 0M2561.7 729.5a3.0 3.0 0 1 0 6.0 0a3.0 3.0 0 1 0 -6.0 0M2453.1 798.9a3.0 3.0 0 1 0 6.0 0a3.0 3.0 0 1 0 -6.0 0M2486.4 673.9a3.0 3.0 0 1 0 6.0 0a3.0 3.0 0 1 0 -6.0 0M2424.1 744.5a3.0 3.0 0 1 0 6.0 0a3.0 3.0 0 1 0 -6.0 0M2544.7 694.5a3.0 3.0 0 1 0 6.0 0a3.0 3.0 0 1 0 -6.0 0M2489.4 813.2a3.0 3.0 0 1 0 6.0 0a3.0 3.0 0 1 0 -6.0 0M2449.8 687.9a3.0 3.0 0 1 0 6.0 0a3.0 3.0 0 1 0 -6.0 0M2434.9 782.4a3.0 3.0 0 1 0 6.0 0a3.0 3.0 0 1 0 -6.0 0M2511.0 673.8a3.0 3.0 0 1 0 6.0 0a3.0 3.0 0 1 0 -6.0 0M2528.3 805.7a3.0 3.0 0 1 0 6.0 0a3.0 3.0 0 1 0 -6.0 0M2426.2 719.9a3.0 3.0 0 1 0 6.0 0a3.0 3.0 0 1 0 -6.0 0M2559.8 714.1a3.0 3.0 0 1 0 6.0 0a3.0 3.0 0 1 0 -6.0 0M2464.9 808.9a3.0 3.0 0 1 0 6.0 0a3.0 3.0 0 1 0 -6.0 0M2470.9 674.5a3.0 3.0 0 1 0 6.0 0a3.0 3.0 0 1 0 -6.0 0M2423.3 760.2a3.0 3.0 0 1 0 6.0 0a3.0 3.0 0 1 0 -6.0 0M2534.6 682.5a3.0 3.0 0 1 0 6.0 0a3.0 3.0 0 1 0 -6.0 0M2505.0 815.3a3.0 3.0 0 1 0 6.0 0a3.0 3.0 0 1 0 -6.0 0M2436.9 697.0a3.0 3.0 0 1 0 6.0 0a3.0 3.0 0 1 0 -6.0 0M2567.4 738.4a3.0 3.0 0 1 0 6.0 0a3.0 3.0 0 1 0 -6.0 0M2442.9 796.1a3.0 3.0 0 1 0 6.0 0a3.0 3.0 0 1 0 -6.0 0M2495.8 669.1a3.0 3.0 0 1 0 6.0 0a3.0 3.0 0 1 0 -6.0 0M2420.1 734.7a3.0 3.0 0 1 0 6.0 0a3.0 3.0 0 1 0 -6.0 0M2554.3 699.1a3.0 3.0 0 1 0 6.0 0a3.0 3.0 0 1 0 -6.0 0M2479.2 816.3a3.0 3.0 0 1 0 6.0 0a3.0 3.0 0 1 0 -6.0 0M2455.3 678.8a3.0 3.0 0 1 0 6.0 0a3.0 3.0 0 1 0 -6.0 0M2426.3 776.1a3.0 3.0 0 1 0 6.0 0a3.0 3.0 0 1 0 -6.0 0M2521.6 672.7a3.0 3.0 0 1 0 6.0 0a3.0 3.0 0 1 0 -6.0 0M2521.2 813.7a3.0 3.0 0 1 0 6.0 0a3.0 3.0 0 1 0 -6.0 0M2426.0 709.1a3.0 3.0 0 1 0 6.0 0a3.0 3.0 0 1 0 -6.0 0M2567.2 722.0a3.0 3.0 0 1 0 6.0 0a3.0 3.0 0 1 0 -6.0 0M2454.1 808.1a3.0 3.0 0 1 0 6.0 0a3.0 3.0 0 1 0 -6.0 0M2479.4 667.8a3.0 3.0 0 1 0 6.0 0a3.0 3.0 0 1 0 -6.0 0M2417.5 751.0a3.0 3.0 0 1 0 6.0 0a3.0 3.0 0 1 0 -6.0 0M2545.2 685.2a3.0 3.0 0 1 0 6.0 0a3.0 3.0 0 1 0 -6.0 0M2495.3 820.4a3.0 3.0 0 1 0 6.0 0a3.0 3.0 0 1 0 -6.0 0M2440.6 686.7a3.0 3.0 0 1 0 6.0 0a3.0 3.0 0 1 0 -6.0 0M2571.6 748.5a3.0 3.0 0 1 0 6.0 0a3.0 3.0 0 1 0 -6.0 0M2433.0 791.5a3.0 3.0 0 1 0 6.0 0a3.0 3.0 0 1 0 -6.0 0M2506.3 665.8a3.0 3.0 0 1 0 6.0 0a3.0 3.0 0 1 0 -6.0 0M2537.2 808.4a3.0 3.0 0 1 0 6.0 0a3.0 3.0 0 1 0 -6.0 0M2417.8 723.9a3.0 3.0 0 1 0 6.0 0a3.0 3.0 0 1 0 -6.0 0M2563.2 705.5a3.0 3.0 0 1 0 6.0 0a3.0 3.0 0 1 0 -6.0 0M2468.2 817.6a3.0 3.0 0 1 0 6.0 0a3.0 3.0 0 1 0 -6.0 0M2462.6 670.4a3.0 3.0 0 1 0 6.0 0a3.0 3.0 0 1 0 -6.0 0M2418.6 768.1a3.0 3.0 0 1 0 6.0 0a3.0 3.0 0 1 0 -6.0 0M2532.8 673.4a3.0 3.0 0 1 0 6.0 0a3.0 3.0 0 1 0 -6.0 0M2512.5 820.7a3.0 3.0 0 1 0 6.0 0a3.0 3.0 0 1 0 -6.0 0M2427.7 698.1a3.0 3.0 0 1 0 6.0 0a3.0 3.0 0 1 0 -6.0 0M2573.4 731.3a3.0 3.0 0 1 0 6.0 0a3.0 3.0 0 1 0 -6.0 0M2443.2 805.4a3.0 3.0 0 1 0 6.0 0a3.0 3.0 0 1 0 -6.0 0M2489.3 662.5a3.0 3.0 0 1 0 6.0 0a3.0 3.0 0 1 0 -6.0 0M2552.0 799.3a3.0 3.0 0 1 0 6.0 0a3.0 3.0 0 1 0 -6.0 0M2413.0 740.6a3.0 3.0 0 1 0 6.0 0a3.0 3.0 0 1 0 -6.0 0M2555.4 689.9a3.0 3.0 0 1 0 6.0 0a3.0 3.0 0 1 0 -6.0 0M2484.5 823.8a3.0 3.0 0 1 0 6.0 0a3.0 3.0 0 1 0 -6.0 0M2446.3 676.8a3.0 3.0 0 1 0 6.0 0a3.0 3.0 0 1 0 -6.0 0M2574.1 759.6a3.0 3.0 0 1 0 6.0 0a3.0 3.0 0 1 0 -6.0 0M2423.6 784.9a3.0 3.0 0 1 0 6.0 0a3.0 3.0 0 1 0 -6.0 0M2517.6 664.3a3.0 3.0 0 1 0 6.0 0a3.0 3.0 0 1 0 -6.0 0M2529.8 817.1a3.0 3.0 0 1 0 6.0 0a3.0 3.0 0 1 0 -6.0 0M2417.4 712.4a3.0 3.0 0 1 0 6.0 0a3.0 3.0 0 1 0 -6.0 0M2571.3 713.7a3.0 3.0 0 1 0 6.0 0a3.0 3.0 0 1 0 -6.0 0M2456.7 817.0a3.0 3.0 0 1 0 6.0 0a3.0 3.0 0 1 0 -6.0 0M2471.5 663.1a3.0 3.0 0 1 0 6.0 0a3.0 3.0 0 1 0 -6.0 0M2564.8 786.8a3.0 3.0 0 1 0 6.0 0a3.0 3.0 0 1 0 -6.0 0M2412.0 758.5a3.0 3.0 0 1 0 6.0 0a3.0 3.0 0 1 0 -6.0 0M2544.1 676.1a3.0 3.0 0 1 0 6.0 0a3.0 3.0 0 1 0 -6.0 0M2502.3 826.4a3.0 3.0 0 1 0 6.0 0a3.0 3.0 0 1 0 -6.0 0M2431.4 687.0a3.0 3.0 0 1 0 6.0 0a3.0 3.0 0 1 0 -6.0 0M2578.1 742.0a3.0 3.0 0 1 0 6.0 0a3.0 3.0 0 1 0 -6.0 0M2432.5 800.7a3.0 3.0 0 1 0 6.0 0a3.0 3.0 0 1 0 -6.0 0M2500.4 658.7a3.0 3.0 0 1 0 6.0 0a3.0 3.0 0 1 0 -6.0 0M2546.3 809.6a3.0 3.0 0 1 0 6.0 0a3.0 3.0 0 1 0 -6.0 0M2410.3 729.2a3.0 3.0 0 1 0 6.0 0a3.0 3.0 0 1 0 -6.0 0M2565.2 696.5a3.0 3.0 0 1 0 6.0 0a3.0 3.0 0 1 0 -6.0 0M2472.9 825.5a3.0 3.0 0 1 0 6.0 0a3.0 3.0 0 1 0 -6.0 0M2453.7 667.7a3.0 3.0 0 1 0 6.0 0a3.0 3.0 0 1 0 -6.0 0M2574.7 771.4a3.0 3.0 0 1 0 6.0 0a3.0 3.0 0 1 0 -6.0 0M2415.1 776.7a3.0 3.0 0 1 0 6.0 0a3.0 3.0 0 1 0 -6.0 0M2529.5 664.7a3.0 3.0 0 1 0 6.0 0a3.0 3.0 0 1 0 -6.0 0M2520.8 824.8a3.0 3.0 0 1 0 6.0 0a3.0 3.0 0 1 0 -6.0 0M2418.8 700.6a3.0 3.0 0 1 0 6.0 0a3.0 3.0 0 1 0 -6.0 0M2578.2 723.4a3.0 3.0 0 1 0 6.0 0a3.0 3.0 0 1 0 -6.0 0M2445.0 814.5a3.0 3.0 0 1 0 6.0 0a3.0 3.0 0 1 0 -6.0 0M2481.8 657.1a3.0 3.0 0 1 0 6.0 0a3.0 3.0 0 1 0 -6.0 0M2561.2 798.2a3.0 3.0 0 1 0 6.0 0a3.0 3.0 0 1 0 -6.0 0M2407.0 747.7a3.0 3.0 0 1 0 6.0 0a3.0 3.0 0 1 0 -6.0 0M2555.2 680.7a3.0 3.0 0 1 0 6.0 0a3.0 3.0 0 1 0 -6.0 0M2491.0 830.4a3.0 3.0 0 1 0 6.0 0a3.0 3.0 0 1 0 -6.0 0M2437.0 676.4a3.0 3.0 0 1 0 6.0 0a3.0 3.0 0 1 0 -6.0 0M2581.2 753.7a3.0 3.0 0 1 0 6.0 0a3.0 3.0 0 1 0 -6.0 0M2422.4 794.1a3.0 3.0 0 1 0 6.0 0a3.0 3.0 0 1 0 -6.0 0M2512.3 656.7a3.0 3.0 0 1 0 6.0 0a3.0 3.0 0 1 0 -6.0 0M2538.9 819.1a3.0 3.0 0 1 0 6.0 0a3.0 3.0 0 1 0 -6.0 0M2409.3 717.1a3.0 3.0 0 1 0 6.0 0a3.0 3.0 0 1 0 -6.0 0M2574.1 704.8a3.0 3.0 0 1 0 6.0 0a3.0 3.0 0 1 0 -6.0 0M2460.7 825.4a3.0 3.0 0 1 0 6.0 0a3.0 3.0 0 1 0 -6.0 0M2462.9 659.6a3.0 3.0 0 1 0 6.0 0a3.0 3.0 0 1 0 -6.0 0M2573.5 783.6a3.0 3.0 0 1 0 6.0 0a3.0 3.0 0 1 0 -6.0 0M2407.8 766.8a3.0 3.0 0 1 0 6.0 0a3.0 3.0 0 1 0 -6.0 0M2541.5 667.1a3.0 3.0 0 1 0 6.0 0a3.0 3.0 0 1 0 -6.0 0M2510.3 831.2a3.0 3.0 0 1 0 6.0 0a3.0 3.0 0 1 0 -6.0 0M2422.3 688.8a3.0 3.0 0 1 0 6.0 0a3.0 3.0 0 1 0 -6.0 0M2583.7 734.5a3.0 3.0 0 1 0 6.0 0a3.0 3.0 0 1 0 -6.0 0M2433.5 810.0a3.0 3.0 0 1 0 6.0 0a3.0 3.0 0 1 0 -6.0 0M2493.4 652.6a3.0 3.0 0 1 0 6.0 0a3.0 3.0 0 1 0 -6.0 0M2555.7 809.3a3.0 3.0 0 1 0 6.0 0a3.0 3.0 0 1 0 -6.0 0M2403.6 735.7a3.0 3.0 0 1 0 6.0 0a3.0 3.0 0 1 0 -6.0 0M2565.7 687.2a3.0 3.0 0 1 0 6.0 0a3.0 3.0 0 1 0 -6.0 0M2478.8 832.8a3.0 3.0 0 1 0 6.0 0a3.0 3.0 0 1 0 -6.0 0M2444.5 666.4a3.0 3.0 0 1 0 6.0 0a3.0 3.0 0 1 0 -6.0 0M2582.4 766.1a3.0 3.0 0 1 0 6.0 0a3.0 3.0 0 1 0 -6.0 0M2413.0 785.8a3.0 3.0 0 1 0 6.0 0a3.0 3.0 0 1 0 -6.0 0M2524.8 656.6a3.0 3.0 0 1 0 6.0 0a3.0 3.0 0 1 0 -6.0 0M2529.7 827.7a3.0 3.0 0 1 0 6.0 0a3.0 3.0 0 1 0 -6.0 0M2410.3 704.6a3.0 3.0 0 1 0 6.0 0a3.0 3.0 0 1 0 -6.0 0M2581.8 714.8a3.0 3.0 0 1 0 6.0 0a3.0 3.0 0 1 0 -6.0 0M2448.2 823.3a3.0 3.0 0 1 0 6.0 0a3.0 3.0 0 1 0 -6.0 0M2473.5 652.7a3.0 3.0 0 1 0 6.0 0a3.0 3.0 0 1 0 -6.0 0M2570.2 795.8a3.0 3.0 0 1 0 6.0 0a3.0 3.0 0 1 0 -6.0 0M2402.0 755.6a3.0 3.0 0 1 0 6.0 0a3.0 3.0 0 1 0 -6.0 0M2553.5 671.4a3.0 3.0 0 1 0 6.0 0a3.0 3.0 0 1 0 -6.0 0M2498.5 836.1a3.0 3.0 0 1 0 6.0 0a3.0 3.0 0 1 0 -6.0 0M2427.7 677.3a3.0 3.0 0 1 0 6.0 0a3.0 3.0 0 1 0 -6.0 0M2587.5 746.6a3.0 3.0 0 1 0 6.0 0a3.0 3.0 0 1 0 -6.0 0M2422.5 803.6a3.0 3.0 0 1 0 6.0 0a3.0 3.0 0 1 0 -6.0 0M2505.8 649.9a3.0 3.0 0 1 0 6.0 0a3.0 3.0 0 1 0 -6.0 0M2548.3 819.8a3.0 3.0 0 1 0 6.0 0a3.0 3.0 0 1 0 -6.0 0M2402.0 723.0a3.0 3.0 0 1 0 6.0 0a3.0 3.0 0 1 0 -6.0 0M2575.5 695.5a3.0 3.0 0 1 0 6.0 0a3.0 3.0 0 1 0 -6.0 0M2465.9 833.2a3.0 3.0 0 1 0 6.0 0a3.0 3.0 0 1 0 -6.0 0M2453.7 657.3a3.0 3.0 0 1 0 6.0 0a3.0 3.0 0 1 0 -6.0 0M2581.7 779.0a3.0 3.0 0 1 0 6.0 0a3.0 3.0 0 1 0 -6.0 0M2404.9 775.8a3.0 3.0 0 1 0 6.0 0a3.0 3.0 0 1 0 -6.0 0M2537.7 658.5a3.0 3.0 0 1 0 6.0 0a3.0 3.0 0 1 0 -6.0 0M2519.0 835.0a3.0 3.0 0 1 0 6.0 0a3.0 3.0 0 1 0 -6.0 0M2413.3 691.9a3.0 3.0 0 1 0 6.0 0a3.0 3.0 0 1 0 -6.0 0M2588.1 726.1a3.0 3.0 0 1 0 6.0 0a3.0 3.0 0 1 0 -6.0 0M2435.9 819.1a3.0 3.0 0 1 0 6.0 0a3.0 3.0 0 1 0 -6.0 0M2485.4 647.4a3.0 3.0 0 1 0 6.0 0a3.0 3.0 0 1 0 -6.0 0M2565.0 807.8a3.0 3.0 0 1 0 6.0 0a3.0 3.0 0 1 0 -6.0 0M2397.7 743.2a3.0 3.0 0 1 0 6.0 0a3.0 3.0 0 1 0 -6.0 0M2564.9 677.7a3.0 3.0 0 1 0 6.0 0a3.0 3.0 0 1 0 -6.0 0M2485.8 839.2a3.0 3.0 0 1 0 6.0 0a3.0 3.0 0 1 0 -6.0 0M2435.0 666.4a3.0 3.0 0 1 0 6.0 0a3.0 3.0 0 1 0 -6.0 0M2589.4 759.7a3.0 3.0 0 1 0 6.0 0a3.0 3.0 0 1 0 -6.0 0M2412.2 795.3a3.0 3.0 0 1 0 6.0 0a3.0 3.0 0 1 0 -6.0 0M2519.0 649.1a3.0 3.0 0 1 0 6.0 0a3.0 3.0 0 1 0 -6.0 0M2539.1 829.3a3.0 3.0 0 1 0 6.0 0a3.0 3.0 0 1 0 -6.0 0M2402.3 709.8a3.0 3.0 0 1 0 6.0 0a3.0 3.0 0 1 0 -6.0 0M2584.2 705.5a3.0 3.0 0 1 0 6.0 0a3.0 3.0 0 1 0 -6.0 0M2452.7 831.7a3.0 3.0 0 1 0 6.0 0a3.0 3.0 0 1 0 -6.0 0M2464.5 649.6a3.0 3.0 0 1 0 6.0 0a3.0 3.0 0 1 0 -6.0 0M2579.0 792.0a3.0 3.0 0 1 0 6.0 0a3.0 3.0 0 1 0 -6.0 0M2398.1 764.3a3.0 3.0 0 1 0 6.0 0a3.0 3.0 0 1 0 -6.0 0M2550.4 662.3a3.0 3.0 0 1 0 6.0 0a3.0 3.0 0 1 0 -6.0 0M2506.9 840.8a3.0 3.0 0 1 0 6.0 0a3.0 3.0 0 1 0 -6.0 0M2418.3 679.5a3.0 3.0 0 1 0 6.0 0a3.0 3.0 0 1 0 -6.0 0M2592.8 738.7a3.0 3.0 0 1 0 6.0 0a3.0 3.0 0 1 0 -6.0 0M2423.9 813.0a3.0 3.0 0 1 0 6.0 0a3.0 3.0 0 1 0 -6.0 0M2498.4 643.9a3.0 3.0 0 1 0 6.0 0a3.0 3.0 0 1 0 -6.0 0M2557.8 819.1a3.0 3.0 0 1 0 6.0 0a3.0 3.0 0 1 0 -6.0 0M2395.3 730.0a3.0 3.0 0 1 0 6.0 0a3.0 3.0 0 1 0 -6.0 0M2575.7 685.9a3.0 3.0 0 1 0 6.0 0a3.0 3.0 0 1 0 -6.0 0M2472.3 840.4a3.0 3.0 0 1 0 6.0 0a3.0 3.0 0 1 0 -6.0 0M2444.1 656.4a3.0 3.0 0 1 0 6.0 0a3.0 3.0 0 1 0 -6.0 0M2589.5 773.2a3.0 3.0 0 1 0 6.0 0a3.0 3.0 0 1 0 -6.0 0M2403.1 785.3a3.0 3.0 0 1 0 6.0 0a3.0 3.0 0 1 0 -6.0 0M2532.6 650.3a3.0 3.0 0 1 0 6.0 0a3.0 3.0 0 1 0 -6.0 0M2528.3 837.6a3.0 3.0 0 1 0 6.0 0a3.0 3.0 0 1 0 -6.0 0M2404.7 696.3a3.0 3.0 0 1 0 6.0 0a3.0 3.0 0 1 0 -6.0 0M2591.5 717.1a3.0 3.0 0 1 0 6.0 0a3.0 3.0 0 1 0 -6.0 0M2439.6 828.1a3.0 3.0 0 1 0 6.0 0a3.0 3.0 0 1 0 -6.0 0M2476.6 643.3a3.0 3.0 0 1 0 6.0 0a3.0 3.0 0 1 0 -6.0 0M2574.3 804.9a3.0 3.0 0 1 0 6.0 0a3.0 3.0 0 1 0 -6.0 0M2392.9 751.6a3.0 3.0 0 1 0 6.0 0a3.0 3.0 0 1 0 -6.0 0M2562.8 668.2a3.0 3.0 0 1 0 6.0 0a3.0 3.0 0 1 0 -6.0 0M2493.7 844.8a3.0 3.0 0 1 0 6.0 0a3.0 3.0 0 1 0 -6.0 0M2425.3 667.7a3.0 3.0 0 1 0 6.0 0a3.0 3.0 0 1 0 -6.0 0M2595.7 752.2a3.0 3.0 0 1 0 6.0 0a3.0 3.0 0 1 0 -6.0 0M2412.7 805.0a3.0 3.0 0 1 0 6.0 0a3.0 3.0 0 1 0 -6.0 0M2512.1 642.2a3.0 3.0 0 1 0 6.0 0a3.0 3.0 0 1 0 -6.0 0M2548.8 829.6a3.0 3.0 0 1 0 6.0 0a3.0 3.0 0 1 0 -6.0 0M2394.9 716.1a3.0 3.0 0 1 0 6.0 0a3.0 3.0 0 1 0 -6.0 0M2585.4 695.8a3.0 3.0 0 1 0 6.0 0a3.0 3.0 0 1 0 -6.0 0M2458.4 839.6a3.0 3.0 0 1 0 6.0 0a3.0 3.0 0 1 0 -6.0 0M2454.9 647.6a3.0 3.0 0 1 0 6.0 0a3.0 3.0 0 1 0 -6.0 0M2587.4 787.0a3.0 3.0 0 1 0 6.0 0a3.0 3.0 0 1 0 -6.0 0M2395.2 773.7a3.0 3.0 0 1 0 6.0 0a3.0 3.0 0 1 0 -6.0 0M2546.2 653.5a3.0 3.0 0 1 0 6.0 0a3.0 3.0 0 1 0 -6.0 0M2516.0 844.3a3.0 3.0 0 1 0 6.0 0a3.0 3.0 0 1 0 -6.0 0M2409.2 683.1a3.0 3.0 0 1 0 6.0 0a3.0 3.0 0 1 0 -6.0 0M2597.2 729.9a3.0 3.0 0 1 0 6.0 0a3.0 3.0 0 1 0 -6.0 0M2426.7 822.5a3.0 3.0 0 1 0 6.0 0a3.0 3.0 0 1 0 -6.0 0M2490.0 638.8a3.0 3.0 0 1 0 6.0 0a3.0 3.0 0 1 0 -6.0 0M2567.5 817.2a3.0 3.0 0 1 0 6.0 0a3.0 3.0 0 1 0 -6.0 0M2389.5 737.9a3.0 3.0 0 1 0 6.0 0a3.0 3.0 0 1 0 -6.0 0M2574.6 676.1a3.0 3.0 0 1 0 6.0 0a3.0 3.0 0 1 0 -6.0 0M2479.7 846.9a3.0 3.0 0 1 0 6.0 0a3.0 3.0 0 1 0 -6.0 0M2434.2 656.6a3.0 3.0 0 1 0 6.0 0a3.0 3.0 0 1 0 -6.0 0M2596.5 766.3a3.0 3.0 0 1 0 6.0 0a3.0 3.0 0 1 0 -6.0 0M2402.5 795.1a3.0 3.0 0 1 0 6.0 0a3.0 3.0 0 1 0 -6.0 0M2526.3 642.6a3.0 3.0 0 1 0 6.0 0a3.0 3.0 0 1 0 -6.0 0M2538.0 839.0a3.0 3.0 0 1 0 6.0 0a3.0 3.0 0 1 0 -6.0 0M2396.6 701.9a3.0 3.0 0 1 0 6.0 0a3.0 3.0 0 1 0 -6.0 0M2593.7 707.4a3.0 3.0 0 1 0 6.0 0a3.0 3.0 0 1 0 -6.0 0M2444.4 836.7a3.0 3.0 0 1 0 6.0 0a3.0 3.0 0 1 0 -6.0 0M2467.2 640.3a3.0 3.0 0 1 0 6.0 0a3.0 3.0 0 1 0 -6.0 0M2583.3 800.7a3.0 3.0 0 1 0 6.0 0a3.0 3.0 0 1 0 -6.0 0M2389.0 760.8a3.0 3.0 0 1 0 6.0 0a3.0 3.0 0 1 0 -6.0 0M2559.5 658.9a3.0 3.0 0 1 0 6.0 0a3.0 3.0 0 1 0 -6.0 0M2502.5 849.4a3.0 3.0 0 1 0 6.0 0a3.0 3.0 0 1 0 -6.0 0M2415.7 670.2a3.0 3.0 0 1 0 6.0 0a3.0 3.0 0 1 0 -6.0 0M2601.0 743.8a3.0 3.0 0 1 0 6.0 0a3.0 3.0 0 1 0 -6.0 0M2414.4 814.8a3.0 3.0 0 1 0 6.0 0a3.0 3.0 0 1 0 -6.0 0M2504.2 636.2a3.0 3.0 0 1 0 6.0 0a3.0 3.0 0 1 0 -6.0 0M2558.7 828.8a3.0 3.0 0 1 0 6.0 0a3.0 3.0 0 1 0 -6.0 0M2388.2 723.5a3.0 3.0 0 1 0 6.0 0a3.0 3.0 0 1 0 -6.0 0M2585.3 685.9a3.0 3.0 0 1 0 6.0 0a3.0 3.0 0 1 0 -6.0 0M2465.2 847.0a3.0 3.0 0 1 0 6.0 0a3.0 3.0 0 1 0 -6.0 0M2444.9 646.8a3.0 3.0 0 1 0 6.0 0a3.0 3.0 0 1 0 -6.0 0M2595.3 780.9a3.0 3.0 0 1 0 6.0 0a3.0 3.0 0 1 0 -6.0 0M2393.6 783.6a3.0 3.0 0 1 0 6.0 0a3.0 3.0 0 1 0 -6.0 0M2540.7 645.1a3.0 3.0 0 1 0 6.0 0a3.0 3.0 0 1 0 -6.0 0M2525.7 846.8a3.0 3.0 0 1 0 6.0 0a3.0 3.0 0 1 0 -6.0 0M2400.4 687.8a3.0 3.0 0 1 0 6.0 0a3.0 3.0 0 1 0 -6.0 0M2600.5 720.4a3.0 3.0 0 1 0 6.0 0a3.0 3.0 0 1 0 -6.0 0M2430.7 831.7a3.0 3.0 0 1 0 6.0 0a3.0 3.0 0 1 0 -6.0 0M2480.8 634.7a3.0 3.0 0 1 0 6.0 0a3.0 3.0 0 1 0 -6.0 0M2577.0 814.0a3.0 3.0 0 1 0 6.0 0a3.0 3.0 0 1 0 -6.0 0M2384.7 746.7a3.0 3.0 0 1 0 6.0 0a3.0 3.0 0 1 0 -6.0 0M2572.2 666.3a3.0 3.0 0 1 0 6.0 0a3.0 3.0 0 1 0 -6.0 0M2488.1 852.5a3.0 3.0 0 1 0 6.0 0a3.0 3.0 0 1 0 -6.0 0M2424.3 658.2a3.0 3.0 0 1 0 6.0 0a3.0 3.0 0 1 0 -6.0 0M2602.9 758.5a3.0 3.0 0 1 0 6.0 0a3.0 3.0 0 1 0 -6.0 0M2403.2 805.2a3.0 3.0 0 1 0 6.0 0a3.0 3.0 0 1 0 -6.0 0M2519.0 635.6a3.0 3.0 0 1 0 6.0 0a3.0 3.0 0 1 0 -6.0 0M2548.2 839.2a3.0 3.0 0 1 0 6.0 0a3.0 3.0 0 1 0 -6.0 0M2389.0 708.6a3.0 3.0 0 1 0 6.0 0a3.0 3.0 0 1 0 -6.0 0M2594.8 697.3a3.0 3.0 0 1 0 6.0 0a3.0 3.0 0 1 0 -6.0 0M2450.5 844.9a3.0 3.0 0 1 0 6.0 0a3.0 3.0 0 1 0 -6.0 0M2457.2 638.3a3.0 3.0 0 1 0 6.0 0a3.0 3.0 0 1 0 -6.0 0" fill="#4c4c52" stroke="#3a3a40" stroke-width="1.2"/>
<circle cx="2510" cy="760" r="20" fill="#4c4c53" stroke="#3a3a40" stroke-width="1.5"/>
<circle cx="2757" cy="1517" r="55" fill="#48484e" fill-opacity=".55"/>
<path d="M2757 1517L2796.8 1530.1M2757 1517L2714.7 1518.5M2757 1517L2718.2 1503.4M2757 1517L2800.8 1520.5M2757 1517L2752.4 1482.0M2757 1517L2709.2 1527.5M2757 1517L2791.0 1496.5M2757 1517L2727.3 1489.8M2757 1517L2769.1 1481.1M2757 1517L2709.9 1510.6M2757 1517L2802.0 1509.5M2757 1517L2741.4 1479.9M2757 1517L2785.8 1486.5M2757 1517L2716.8 1494.3M2757 1517L2808.0 1526.4M2757 1517L2758.9 1475.5M2757 1517L2703.4 1520.4M2757 1517L2800.2 1497.9M2757 1517L2729.6 1480.9M2757 1517L2777.7 1477.6M2757 1517L2707.2 1501.8M2757 1517L2810.0 1514.3M2757 1517L2747.0 1472.5M2757 1517L2795.1 1486.5M2757 1517L2717.8 1485.0M2757 1517L2767.0 1470.7M2757 1517L2699.4 1511.9M2757 1517L2808.8 1501.5M2757 1517L2734.1 1472.6M2757 1517L2787.0 1476.2M2757 1517L2706.7 1492.3M2757 1517L2816.7 1521.0M2757 1517L2754.4 1466.4M2757 1517L2694.0 1524.2M2757 1517L2804.5 1488.8M2757 1517L2720.9 1475.9M2757 1517L2776.2 1467.7M2757 1517L2697.3 1502.4M2757 1517L2816.8 1507.1M2757 1517L2740.4 1465.2M2757 1517L2796.8 1476.8M2757 1517L2708.3 1482.5M2757 1517L2822.1 1529.3M2757 1517L2763.1 1461.8M2757 1517L2690.2 1515.0M2757 1517L2813.5 1493.0M2757 1517L2726.0 1467.3M2757 1517L2786.2 1466.6M2757 1517L2697.1 1492.3M2757 1517L2823.7 1514.5M2757 1517L2748.4 1458.9M2757 1517L2686.1 1529.5M2757 1517L2806.7 1479.5M2757 1517L2711.8 1472.9M2757 1517L2773.0 1458.8M2757 1517L2688.2 1504.9M2757 1517L2821.8 1499.1M2757 1517L2732.9 1459.5M2757 1517L2796.6 1467.5M2757 1517L2698.9 1482.0M2757 1517L2829.4 1523.4M2757 1517L2757.8 1454.1M2757 1517L2682.1 1519.7M2757 1517L2816.3 1484.1M2757 1517L2717.3 1463.8M2757 1517L2783.6 1457.7M2757 1517L2688.0 1494.1M2757 1517L2829.2 1507.0M2757 1517L2741.4 1452.8M2757 1517L2807.2 1470.2M2757 1517L2702.6 1471.7M2757 1517L2768.3 1450.8M2757 1517L2679.8 1508.9M2757 1517L2825.2 1490.5M2757 1517L2724.6 1455.4M2757 1517L2794.8 1458.4M2757 1517L2689.7 1483.1M2757 1517L2835.4 1516.3M2757 1517L2751.3 1447.5M2757 1517L2675.0 1525.6M2757 1517L2817.4 1474.9M2757 1517L2708.3 1461.8M2757 1517L2779.6 1449.3M2757 1517L2679.4 1497.4M2757 1517L2833.3 1498.7M2757 1517L2733.5 1448.1M2757 1517L2806.1 1461.1M2757 1517L2693.4 1472.0M2757 1517L2840.1 1527.0M2757 1517L2762.4 1443.7M2757 1517L2672.3 1514.2M2757 1517L2827.2 1481.5M2757 1517L2715.7 1452.7M2757 1517L2791.5 1449.7M2757 1517L2680.8 1485.6M2757 1517L2840.2 1508.4M2757 1517L2743.8 1442.1M2757 1517L2817.2 1465.7M2757 1517L2699.0 1461.4M2757 1517L2774.3 1441.7M2757 1517L2671.3 1502.1M2757 1517L2836.1 1489.8M2757 1517L2724.9 1444.6M2757 1517L2803.5 1452.1M2757 1517L2684.3 1473.8M2757 1517L2845.7 1519.5M2757 1517L2755.4 1437.6M2757 1517L2665.6 1520.7M2757 1517L2827.7 1472.2M2757 1517L2706.5 1451.4M2757 1517L2786.8 1441.6M2757 1517L2672.3 1489.6M2757 1517L2843.8 1499.8M2757 1517L2735.5 1437.7M2757 1517L2815.5 1456.4M2757 1517L2689.7 1462.3M2757 1517L2849.5 1531.6M2757 1517L2767.8 1434.9M2757 1517L2664.0 1508.0M2757 1517L2837.5 1480.5M2757 1517L2715.7 1442.3M2757 1517L2799.7 1443.5M2757 1517L2675.3 1476.9M2757 1517L2850.1 1511.1M2757 1517L2747.4 1432.4M2757 1517L2659.7 1528.2M2757 1517L2826.9 1462.7M2757 1517L2697.0 1451.4M2757 1517L2781.0 1434.1M2757 1517L2664.3 1494.8M2757 1517L2846.2 1490.5M2757 1517L2726.5 1434.6M2757 1517L2812.4 1447.3M2757 1517L2680.3 1464.5M2757 1517L2854.8 1523.7M2757 1517L2760.4 1428.9M2757 1517L2657.3 1515.0M2757 1517L2837.7 1470.9M2757 1517L2706.1 1441.4M2757 1517L2794.6 1435.3M2757 1517L2666.7 1481.3M2757 1517L2853.5 1502.1M2757 1517L2738.6 1428.3M2757 1517L2824.8 1453.2M2757 1517L2687.3 1452.7M2757 1517L2774.1 1427.2M2757 1517L2656.9 1501.1M2757 1517L2847.4 1480.8M2757 1517L2716.9 1432.6M2757 1517L2808.2 1438.5M2757 1517L2671.2 1468.1M2757 1517L2859.2 1514.9" stroke="#56565c" stroke-opacity="0.8" stroke-width="0.7" fill="none" shape-rendering="crispEdges"/>
<path d="M2793.8 1530.1a3.0 3.0 0 1 0 6.0 0a3.0 3.0 0 1 0 -6.0 0M2711.7 1518.5a3.0 3.0 0 1 0 6.0 0a3.0 3.0 0 1 0 -6.0 0M2715.2 1503.4a3.0 3.0 0 1 0 6.0 0a3.0 3.0 0 1 0 -6.0 0M2797.8 1520.5a3.0 3.0 0 1 0 6.0 0a3.0 3.0 0 1 0 -6.0 0M2749.4 1482.0a3.0 3.0 0 1 0 6.0 0a3.0 3.0 0 1 0 -6.0 0M2706.2 1527.5a3.0 3.0 0 1 0 6.0 0a3.0 3.0 0 1 0 -6.0 0M2788.0 1496.5a3.0 3.0 0 1 0 6.0 0a3.0 3.0 0 1 0 -6.0 0M2724.3 1489.8a3.0 3.0 0 1 0 6.0 0a3.0 3.0 0 1 0 -6.0 0M2766.1 1481.1a3.0 3.0 0 1 0 6.0 0a3.0 3.0 0 1 0 -6.0 0M2706.9 1510.6a3.0 3.0 0 1 0 6.0 0a3.0 3.0 0 1 0 -6.0 0M2799.0 1509.5a3.0 3.0 0 1 0 6.0 0a3.0 3.0 0 1 0 -6.0 0M2738.4 1479.9a3.0 3.0 0 1 0 6.0 0a3.0 3.0 0 1 0 -6.0 0M2782.8 1486.5a3.0 3.0 0 1 0 6.0 0a3.0 3.0 0 1 0 -6.0 0M2713.8 1494.3a3.0 3.0 0 1 0 6.0 0a3.0 3.0 0 1 0 -6.0 0M2805.0 1526.4a3.0 3.0 0 1 0 6.0 0a3.0 3.0 0 1 0 -6.0 0M2755.9 1475.5a3.0 3.0 0 1 0 6.0 0a3.0 3.0 0 1 0 -6.0 0M2700.4 1520.4a3.0 3.0 0 1 0 6.0 0a3.0 3.0 0 1 0 -6.0 0M2797.2 1497.9a3.0 3.0 0 1 0 6.0 0a3.0 3.0 0 1 0 -6.0 0M2726.6 1480.9a3.0 3.0 0 1 0 6.0 0a3.0 3.0 0 1 0 -6.0 0M2774.7 1477.6a3.0 3.0 0 1 0 6.0 0a3.0 3.0 0 1 0 -6.0 0M2704.2 1501.8a3.0 3.0 0 1 0 6.0 0a3.0 3.0 0 1 0 -6.0 0M2807.0 1514.3a3.0 3.0 0 1 0 6.0 0a3.0 3.0 0 1 0 -6.0 0M2744.0 1472.5a3.0 3.0 0 1 0 6.0 0a3.0 3.0 0 1 0 -6.0 0M2792.1 1486.5a3.0 3.0 0 1 0 6.0 0a3.0 3.0 0 1 0 -6.0 0M2714.8 1485.0a3.0 3.0 0 1 0 6.0 0a3.0 3.0 0 1 0 -6.0 0M2764.0 1470.7a3.0 3.0 0 1 0 6.0 0a3.0 3.0 0 1 0 -6.0 0M2696.4 1511.9a3.0 3.0 0 1 0 6.0 0a3.0 3.0 0 1 0 -6.0 0M2805.8 1501.5a3.0 3.0 0 1 0 6.0 0a3.0 3.0 0 1 0 -6.0 0M2731.1 1472.6a3.0 3.0 0 1 0 6.0 0a3.0 3.0 0 1 0 -6.0 0M2784.0 1476.2a3.0 3.0 0 1 0 6.0 0a3.0 3.0 0 1 0 -6.0 0M2703.7 1492.3a3.0 3.0 0 1 0 6.0 0a3.0 3.0 0 1 0 -6.0 0M2813.7 1521.0a3.0 3.0 0 1 0 6.0 0a3.0 3.0 0 1 0 -6.0 0M2751.4 1466.4a3.0 3.0 0 1 0 6.0 0a3.0 3.0 0 1 0 -6.0 0M2691.0 1524.2a3.0 3.0 0 1 0 6.0 0a3.0 3.0 0 1 0 -6.0 0M2801.5 1488.8a3.0 3.0 0 1 0 6.0 0a3.0 3.0 0 1 0 -6.0 0M2717.9 1475.9a3.0 3.0 0 1 0 6.0 0a3.0 3.0 0 1 0 -6.0 0M2773.2 1467.7a3.0 3.0 0 1 0 6.0 0a3.0 3.0 0 1 0 -6.0 0M2694.3 1502.4a3.0 3.0 0 1 0 6.0 0a3.0 3.0 0 1 0 -6.0 0M2813.8 1507.1a3.0 3.0 0 1 0 6.0 0a3.0 3.0 0 1 0 -6.0 0M2737.4 1465.2a3.0 3.0 0 1 0 6.0 0a3.0 3.0 0 1 0 -6.0 0M2793.8 1476.8a3.0 3.0 0 1 0 6.0 0a3.0 3.0 0 1 0 -6.0 0M2705.3 1482.5a3.0 3.0 0 1 0 6.0 0a3.0 3.0 0 1 0 -6.0 0M2819.1 1529.3a3.0 3.0 0 1 0 6.0 0a3.0 3.0 0 1 0 -6.0 0M2760.1 1461.8a3.0 3.0 0 1 0 6.0 0a3.0 3.0 0 1 0 -6.0 0M2687.2 1515.0a3.0 3.0 0 1 0 6.0 0a3.0 3.0 0 1 0 -6.0 0M2810.5 1493.0a3.0 3.0 0 1 0 6.0 0a3.0 3.0 0 1 0 -6.0 0M2723.0 1467.3a3.0 3.0 0 1 0 6.0 0a3.0 3.0 0 1 0 -6.0 0M2783.2 1466.6a3.0 3.0 0 1 0 6.0 0a3.0 3.0 0 1 0 -6.0 0M2694.1 1492.3a3.0 3.0 0 1 0 6.0 0a3.0 3.0 0 1 0 -6.0 0M2820.7 1514.5a3.0 3.0 0 1 0 6.0 0a3.0 3.0 0 1 0 -6.0 0M2745.4 1458.9a3.0 3.0 0 1 0 6.0 0a3.0 3.0 0 1 0 -6.0 0M2683.1 1529.5a3.0 3.0 0 1 0 6.0 0a3.0 3.0 0 1 0 -6.0 0M2803.7 1479.5a3.0 3.0 0 1 0 6.0 0a3.0 3.0 0 1 0 -6.0 0M2708.8 1472.9a3.0 3.0 0 1 0 6.0 0a3.0 3.0 0 1 0 -6.0 0M2770.0 1458.8a3.0 3.0 0 1 0 6.0 0a3.0 3.0 0 1 0 -6.0 0M2685.2 1504.9a3.0 3.0 0 1 0 6.0 0a3.0 3.0 0 1 0 -6.0 0M2818.8 1499.1a3.0 3.0 0 1 0 6.0 0a3.0 3.0 0 1 0 -6.0 0M2729.9 1459.5a3.0 3.0 0 1 0 6.0 0a3.0 3.0 0 1 0 -6.0 0M2793.6 1467.5a3.0 3.0 0 1 0 6.0 0a3.0 3.0 0 1 0 -6.0 0M2695.9 1482.0a3.0 3.0 0 1 0 6.0 0a3.0 3.0 0 1 0 -6.0 0M2826.4 1523.4a3.0 3.0 0 1 0 6.0 0a3.0 3.0 0 1 0 -6.0 0M2754.8 1454.1a3.0 3.0 0 1 0 6.0 0a3.0 3.0 0 1 0 -6.0 0M2679.1 1519.7a3.0 3.0 0 1 0 6.0 0a3.0 3.0 0 1 0 -6.0 0M2813.3 1484.1a3.0 3.0 0 1 0 6.0 0a3.0 3.0 0 1 0 -6.0 0M2714.3 1463.8a3.0 3.0 0 1 0 6.0 0a3.0 3.0 0 1 0 -6.0 0M2780.6 1457.7a3.0 3.0 0 1 0 6.0 0a3.0 3.0 0 1 0 -6.0 0M2685.0 1494.1a3.0 3.0 0 1 0 6.0 0a3.0 3.0 0 1 0 -6.0 0M2826.2 1507.0a3.0 3.0 0 1 0 6.0 0a3.0 3.0 0 1 0 -6.0 0M2738.4 1452.8a3.0 3.0 0 1 0 6.0 0a3.0 3.0 0 1 0 -6.0 0M2804.2 1470.2a3.0 3.0 0 1 0 6.0 0a3.0 3.0 0 1 0 -6.0 0M2699.6 1471.7a3.0 3.0 0 1 0 6.0 0a3.0 3.0 0 1 0 -6.0 0M2765.3 1450.8a3.0 3.0 0 1 0 6.0 0a3.0 3.0 0 1 0 -6.0 0M2676.8 1508.9a3.0 3.0 0 1 0 6.0 0a3.0 3.0 0 1 0 -6.0 0M2822.2 1490.5a3.0 3.0 0 1 0 6.0 0a3.0 3.0 0 1 0 -6.0 0M2721.6 1455.4a3.0 3.0 0 1 0 6.0 0a3.0 3.0 0 1 0 -6.0 0M2791.8 1458.4a3.0 3.0 0 1 0 6.0 0a3.0 3.0 0 1 0 -6.0 0M2686.7 1483.1a3.0 3.0 0 1 0 6.0 0a3.0 3.0 0 1 0 -6.0 0M2832.4 1516.3a3.0 3.0 0 1 0 6.0 0a3.0 3.0 0 1 0 -6.0 0M2748.3 1447.5a3.0 3.0 0 1 0 6.0 0a3.0 3.0 0 1 0 -6.0 0M2672.0 1525.6a3.0 3.0 0 1 0 6.0 0a3.0 3.0 0 1 0 -6.0 0M2814.4 1474.9a3.0 3.0 0 1 0 6.0 0a3.0 3.0 0 1 0 -6.0 0M2705.3 1461.8a3.0 3.0 0 1 0 6.0 0a3.0 3.0 0 1 0 -6.0 0M2776.6 1449.3a3.0 3.0 0 1 0 6.0 0a3.0 3.0 0 1 0 -6.0 0M2676.4 1497.4a3.0 3.0 0 1 0 6.0 0a3.0 3.0 0 1 0 -6.0 0M2830.3 1498.7a3.0 3.0 0 1 0 6.0 0a3.0 3.0 0 1 0 -6.0 0M2730.5 1448.1a3.0 3.0 0 1 0 6.0 0a3.0 3.0 0 1 0 -6.0 0M2803.1 1461.1a3.0 3.0 0 1 0 6.0 0a3.0 3.0 0 1 0 -6.0 0M2690.4 1472.0a3.0 3.0 0 1 0 6.0 0a3.0 3.0 0 1 0 -6.0 0M2837.1 1527.0a3.0 3.0 0 1 0 6.0 0a3.0 3.0 0 1 0 -6.0 0M2759.4 1443.7a3.0 3.0 0 1 0 6.0 0a3.0 3.0 0 1 0 -6.0 0M2669.3 1514.2a3.0 3.0 0 1 0 6.0 0a3.0 3.0 0 1 0 -6.0 0M2824.2 1481.5a3.0 3.0 0 1 0 6.0 0a3.0 3.0 0 1 0 -6.0 0M2712.7 1452.7a3.0 3.0 0 1 0 6.0 0a3.0 3.0 0 1 0 -6.0 0M2788.5 1449.7a3.0 3.0 0 1 0 6.0 0a3.0 3.0 0 1 0 -6.0 0M2677.8 1485.6a3.0 3.0 0 1 0 6.0 0a3.0 3.0 0 1 0 -6.0 0M2837.2 1508.4a3.0 3.0 0 1 0 6.0 0a3.0 3.0 0 1 0 -6.0 0M2740.8 1442.1a3.0 3.0 0 1 0 6.0 0a3.0 3.0 0 1 0 -6.0 0M2814.2 1465.7a3.0 3.0 0 1 0 6.0 0a3.0 3.0 0 1 0 -6.0 0M2696.0 1461.4a3.0 3.0 0 1 0 6.0 0a3.0 3.0 0 1 0 -6.0 0M2771.3 1441.7a3.0 3.0 0 1 0 6.0 0a3.0 3.0 0 1 0 -6.0 0M2668.3 1502.1a3.0 3.0 0 1 0 6.0 0a3.0 3.0 0 1 0 -6.0 0M2833.1 1489.8a3.0 3.0 0 1 0 6.0 0a3.0 3.0 0 1 0 -6.0 0M2721.9 1444.6a3.0 3.0 0 1 0 6.0 0a3.0 3.0 0 1 0 -6.0 0M2800.5 1452.1a3.0 3.0 0 1 0 6.0 0a3.0 3.0 0 1 0 -6.0 0M2681.3 1473.8a3.0 3.0 0 1 0 6.0 0a3.0 3.0 0 1 0 -6.0 0M2842.7 1519.5a3.0 3.0 0 1 0 6.0 0a3.0 3.0 0 1 0 -6.0 0M2752.4 1437.6a3.0 3.0 0 1 0 6.0 0a3.0 3.0 0 1 0 -6.0 0M2662.6 1520.7a3.0 3.0 0 1 0 6.0 0a3.0 3.0 0 1 0 -6.0 0M2824.7 1472.2a3.0 3.0 0 1 0 6.0 0a3.0 3.0 0 1 0 -6.0 0M2703.5 1451.4a3.0 3.0 0 1 0 6.0 0a3.0 3.0 0 1 0 -6.0 0M2783.8 1441.6a3.0 3.0 0 1 0 6.0 0a3.0 3.0 0 1 0 -6.0 0M2669.3 1489.6a3.0 3.0 0 1 0 6.0 0a3.0 3.0 0 1 0 -6.0 0M2840.8 1499.8a3.0 3.0 0 1 0 6.0 0a3.0 3.0 0 1 0 -6.0 0M2732.5 1437.7a3.0 3.0 0 1 0 6.0 0a3.0 3.0 0 1 0 -6.0 0M2812.5 1456.4a3.0 3.0 0 1 0 6.0 0a3.0 3.0 0 1 0 -6.0 0M2686.7 1462.3a3.0 3.0 0 1 0 6.0 0a3.0 3.0 0 1 0 -6.0 0M2846.5 1531.6a3.0 3.0 0 1 0 6.0 0a3.0 3.0 0 1 0 -6.0 0M2764.8 1434.9a3.0 3.0 0 1 0 6.0 0a3.0 3.0 0 1 0 -6.0 0M2661.0 1508.0a3.0 3.0 0 1 0 6.0 0a3.0 3.0 0 1 0 -6.0 0M2834.5 1480.5a3.0 3.0 0 1 0 6.0 0a3.0 3.0 0 1 0 -6.0 0M2712.7 1442.3a3.0 3.0 0 1 0 6.0 0a3.0 3.0 0 1 0 -6.0 0M2796.7 1443.5a3.0 3.0 0 1 0 6.0 0a3.0 3.0 0 1 0 -6.0 0M2672.3 1476.9a3.0 3.0 0 1 0 6.0 0a3.0 3.0 0 1 0 -6.0 0M2847.1 1511.1a3.0 3.0 0 1 0 6.0 0a3.0 3.0 0 1 0 -6.0 0M2744.4 1432.4a3.0 3.0 0 1 0 6.0 0a3.0 3.0 0 1 0 -6.0 0M2656.7 1528.2a3.0 3.0 0 1 0 6.0 0a3.0 3.0 0 1 0 -6.0 0M2823.9 1462.7a3.0 3.0 0 1 0 6.0 0a3.0 3.0 0 1 0 -6.0 0M2694.0 1451.4a3.0 3.0 0 1 0 6.0 0a3.0 3.0 0 1 0 -6.0 0M2778.0 1434.1a3.0 3.0 0 1 0 6.0 0a3.0 3.0 0 1 0 -6.0 0M2661.3 1494.8a3.0 3.0 0 1 0 6.0 0a3.0 3.0 0 1 0 -6.0 0M2843.2 1490.5a3.0 3.0 0 1 0 6.0 0a3.0 3.0 0 1 0 -6.0 0M2723.5 1434.6a3.0 3.0 0 1 0 6.0 0a3.0 3.0 0 1 0 -6.0 0M2809.4 1447.3a3.0 3.0 0 1 0 6.0 0a3.0 3.0 0 1 0 -6.0 0M2677.3 1464.5a3.0 3.0 0 1 0 6.0 0a3.0 3.0 0 1 0 -6.0 0M2851.8 1523.7a3.0 3.0 0 1 0 6.0 0a3.0 3.0 0 1 0 -6.0 0M2757.4 1428.9a3.0 3.0 0 1 0 6.0 0a3.0 3.0 0 1 0 -6.0 0M2654.3 1515.0a3.0 3.0 0 1 0 6.0 0a3.0 3.0 0 1 0 -6.0 0M2834.7 1470.9a3.0 3.0 0 1 0 6.0 0a3.0 3.0 0 1 0 -6.0 0M2703.1 1441.4a3.0 3.0 0 1 0 6.0 0a3.0 3.0 0 1 0 -6.0 0M2791.6 1435.3a3.0 3.0 0 1 0 6.0 0a3.0 3.0 0 1 0 -6.0 0M2663.7 1481.3a3.0 3.0 0 1 0 6.0 0a3.0 3.0 0 1 0 -6.0 0M2850.5 1502.1a3.0 3.0 0 1 0 6.0 0a3.0 3.0 0 1 0 -6.0 0M2735.6 1428.3a3.0 3.0 0 1 0 6.0 0a3.0 3.0 0 1 0 -6.0 0M2821.8 1453.2a3.0 3.0 0 1 0 6.0 0a3.0 3.0 0 1 0 -6.0 0M2684.3 1452.7a3.0 3.0 0 1 0 6.0 0a3.0 3.0 0 1 0 -6.0 0M2771.1 1427.2a3.0 3.0 0 1 0 6.0 0a3.0 3.0 0 1 0 -6.0 0M2653.9 1501.1a3.0 3.0 0 1 0 6.0 0a3.0 3.0 0 1 0 -6.0 0M2844.4 1480.8a3.0 3.0 0 1 0 6.0 0a3.0 3.0 0 1 0 -6.0 0M2713.9 1432.6a3.0 3.0 0 1 0 6.0 0a3.0 3.0 0 1 0 -6.0 0M2805.2 1438.5a3.0 3.0 0 1 0 6.0 0a3.0 3.0 0 1 0 -6.0 0M2668.2 1468.1a3.0 3.0 0 1 0 6.0 0a3.0 3.0 0 1 0 -6.0 0M2856.2 1514.9a3.0 3.0 0 1 0 6.0 0a3.0 3.0 0 1 0 -6.0 0" fill="#4c4c52" stroke="#3a3a40" stroke-width="1.2"/>
<circle cx="2757" cy="1517" r="20" fill="#4c4c53" stroke="#3a3a40" stroke-width="1.5"/>
<defs><radialGradient id="rg" cx="50%" cy="50%" r="50%"><stop offset="0" stop-color="#c4c4c8" stop-opacity=".95"/><stop offset="0.5" stop-color="#c4c4c8" stop-opacity=".9"/><stop offset="0.75" stop-color="#c0c0c4" stop-opacity=".5"/><stop offset="1" stop-color="#b8b8bc" stop-opacity="0"/></radialGradient></defs>
<ellipse cx="1030" cy="722" rx="175" ry="150" fill="url(#rg)"/>
<path d="M985 721L923.3 682.3M985 721L930.8 664.7M985 721L916.4 692.8M985 721L944.6 650.3M985 721L920.5 672.8M985 721L963.3 641.3M985 721L912.1 705.4M985 721L931.8 654.7M985 721L912.1 683.7M985 721L949.4 641.3M985 721L911.0 719.5M985 721L920.0 662.5M985 721L971.2 634.7M985 721L906.3 696.9M985 721L935.2 644.9M985 721L913.4 734.0M985 721L909.8 673.5M985 721L956.2 633.4M985 721L903.7 711.9M985 721L921.6 652.1M985 721L980.7 629.7M985 721L902.2 687.0M985 721L940.7 635.7M985 721L904.6 727.7M985 721L909.6 662.6M985 721L964.8 626.7M985 721L897.8 702.6M985 721L925.5 641.7M985 721L909.4 743.4M985 721L991.3 626.6M985 721L900.0 676.1M985 721L948.1 627.3M985 721L897.0 719.5M985 721L911.6 651.5M985 721L918.0 758.2M985 721L974.9 621.4M985 721L893.5 692.1M985 721L931.4 631.9M985 721L900.1 736.6M985 721L1002.8 625.3M985 721L899.8 664.5M985 721L930.1 771.1M985 721L957.3 620.1M985 721L890.6 709.6M985 721L915.6 640.4M985 721L907.3 753.2M985 721L986.2 618.0M985 721L891.0 680.4M985 721L939.2 622.9M985 721L891.8 728.0M985 721L901.7 652.6M985 721L918.3 768.1M985 721L967.9 614.4M985 721L885.9 698.4M985 721L921.7 629.8M985 721L897.2 746.1M985 721L998.4 616.4M985 721L890.5 668.1M985 721L932.9 780.6M985 721L948.8 615.0M985 721L884.8 717.7M985 721L905.6 640.8M985 721L906.8 763.1M985 721L979.9 610.3M985 721L882.9 686.2M985 721L929.7 620.0M985 721L888.1 737.2M985 721L1011.2 616.8M985 721L892.1 655.4M985 721L920.3 777.9M985 721L959.9 608.5M985 721L879.3 706.0M985 721L911.7 629.3M985 721L895.9 756.0M985 721L992.7 608.2M985 721L881.9 673.1M985 721L937.1 789.7M985 721L939.5 611.2M985 721L880.3 726.6M985 721L1024.1 619.3M985 721L895.8 642.7M985 721L907.9 773.1M985 721L972.3 603.7M985 721L875.7 693.2M985 721L956.6 797.6M985 721L919.7 618.5M985 721L885.9 747.0M985 721L1006.2 608.0M985 721L883.0 659.7M985 721L923.8 787.4M985 721L950.9 603.9M985 721L874.0 714.6M985 721L1037.0 624.0M985 721L901.6 630.3M985 721L896.0 766.2M985 721L985.8 600.8M985 721L874.0 679.5M985 721L942.8 798.1M985 721L929.6 608.8M985 721L877.1 736.3M985 721L1020.0 610.0M985 721L886.2 646.1M985 721L910.5 783.0M985 721L963.7 598.2M985 721L869.4 701.2M985 721L964.2 804.6M985 721L909.5 618.5M985 721L885.0 757.3M985 721L999.9 599.9M985 721L874.3 665.2M985 721L928.6 796.5M985 721L941.2 600.5M985 721L869.7 724.0M985 721L1033.7 614.2M985 721L891.6 632.7M985 721L897.6 776.4M985 721L977.7 594.3M985 721L866.8 687.0M985 721L949.7 805.9M985 721L919.3 607.8M985 721L875.1 746.5M985 721L1014.5 601.2M985 721L876.9 650.8M985 721L914.4 792.6M985 721L954.3 593.7M985 721L864.2 710.3M985 721L1047.1 620.5M985 721L972.7 810.5M985 721L899.1 619.9M985 721L885.5 767.7M985 721L992.5 592.6M985 721L866.4 672.0M985 721L934.7 805.0M985 721L930.9 598.3M985 721L866.7 734.0M985 721L1029.1 604.7M985 721L881.7 636.5M985 721L900.6 786.5M985 721L968.7 588.9M985 721L860.6 695.5M985 721L957.7 812.8M985 721L908.7 608.1M985 721L874.5 757.1M985 721L1007.8 593.0M985 721L868.1 656.8M985 721L919.7 801.9M985 721L944.2 590.4M985 721L860.0 720.1M985 721L1043.5 610.5M985 721L982.2 815.5M985 721L888.8 622.7M985 721L887.4 778.3M985 721L984.0 586.0M985 721L859.1 680.0M985 721L942.0 812.9M985 721L920.2 597.4M985 721L864.9 744.7M985 721L1023.2 595.7M985 721L872.2 641.6M985 721L904.8 796.4M985 721L958.8 584.4M985 721L855.3 705.0M985 721L1057.2 618.5M985 721L966.7 818.9M985 721L898.0 609.7M985 721L875.2 767.9M985 721L999.9 585.5M985 721L860.0 664.0M985 721L926.2 810.6M985 721L933.4 588.4M985 721L857.1 730.6M985 721L1038.6 600.7M985 721L992.4 819.4M985 721L878.6 626.8M985 721L890.6 788.8M985 721L974.5 580.5M985 721L852.8 689.0M985 721L950.4 820.0M985 721L909.2 597.9M985 721L864.4 755.7M985 721L1016.2 587.2M985 721L863.1 647.9M985 721L910.4 806.0M985 721L948.2 581.1M985 721L851.1 715.3M985 721L1053.3 608.0M985 721L976.6 824.0M985 721L887.2 612.6M985 721L877.3 778.9M985 721L991.0 578.7M985 721L852.5 672.3M985 721L933.8 818.8M985 721L922.3 587.5M985 721L855.3 741.7M985 721L1032.4 591.3M985 721L1003.3 822.1M985 721L868.7 632.1M985 721L895.1 799.1M985 721L964.2 575.9M985 721L847.3 698.8M985 721L1067.2 617.6M985 721L959.8 826.3M985 721L898.0 599.6M985 721L865.2 767.0M985 721L1007.9 579.4M985 721L854.7 655.5M985 721L917.2 815.2M985 721L937.0 579.0M985 721L848.0 726.2M985 721L1048.2 597.9M985 721L987.2 828.0M985 721L876.6 616.9M985 721L880.6 789.8M985 721L981.1 572.9M985 721L845.9 681.7M985 721L1079.9 629.3M985 721L942.6 826.2M985 721L910.8 588.0M985 721L854.7 753.2M985 721L1025.0 582.5M985 721L1014.7 823.6M985 721L859.3 638.7M985 721L900.8 809.1M985 721L953.2 572.4M985 721L842.9 709.5M985 721L1063.3 606.7M985 721L970.1 831.6M985 721L886.8 602.6M985 721L867.3 778.4M985 721L998.7 572.4M985 721L846.9 664.1M985 721L925.1 823.7M985 721L925.4 578.1M985 721L846.1 737.7M985 721L1041.8 588.1M985 721L998.6 830.9M985 721L866.3 622.4M985 721L885.2 800.6M985 721L970.4 568.1M985 721L840.1 691.9M985 721L1077.2 617.9M985 721L952.3 832.8M985 721L899.2 589.7M985 721L855.4 765.0M985 721L1016.5 574.3M985 721L1026.5 823.9M985 721L850.4 646.5M985 721L907.8 818.6M985 721L941.6 570.1M985 721L839.6 720.9M985 721L1058.0 596.1M985 721L981.2 835.9M985 721L875.8 607.0M985 721L870.6 789.8M985 721L988.5 566.2M985 721L839.9 673.7M985 721L1089.7 631.1M985 721L934.1 831.5M985 721L913.5 578.4M985 721L845.4 749.7M985 721L1034.3 578.8M985 721L1010.4 832.6M985 721L856.4 629.2M985 721L891.1 811.1M985 721L959.0 564.4M985 721L835.4 703.0M985 721L1073.2 606.5M985 721L962.9 838.5M985 721L887.5 592.7M985 721L857.5 776.9M985 721L1007.0 566.9M985 721L1038.6 823.0M985 721L842.1 655.3M985 721L916.0 827.6M985 721L929.5 569.0M985 721L837.5 732.8M985 721L1051.5 585.9M985 721L992.9 839.1M985 721L865.0 612.6M985 721L875.3 801.1M985 721L977.5 561.1M985 721L833.8 684.3M985 721L1087.1 619.2M985 721L944.1 838.5M985 721L901.3 580.0M985 721L846.0 761.9M985 721L1025.6 570.2M985 721L1022.7 833.1M985 721L847.0 637.1M985 721L898.2 821.1M985 721L947.0 561.8M985 721L831.8 714.7M985 721L1067.9 595.4M985 721L974.3 843.1M985 721L875.9 597.0M985 721L860.8 788.8M985 721L996.5 560.3M985 721L1050.7 820.7M985 721L834.7 665.2M985 721L1099.3 633.9M985 721L925.2 835.9M985 721L917.1 569.1M985 721L836.5 745.2M985 721L1043.8 576.1M985 721L1005.2 841.1M985 721L854.6 619.4M985 721L881.2 812.0M985 721L965.7 557.0M985 721L828.6 695.7M985 721L1083.1 607.3M985 721L955.1 844.6M985 721L889.2 582.9M985 721L847.8 774.3M985 721L1015.8 562.3M985 721L1035.2 832.3M985 721L838.3 646.1M985 721L906.5 830.6M985 721L934.5 560.4M985 721L829.3 727.1M985 721L1061.4 584.6M985 721L986.5 846.6M985 721L864.6 602.6M985 721L865.3 800.5M985 721L985.2 554.8M985 721L1062.9 817.1M985 721L828.1 676.1M985 721L1096.8 621.5M985 721L935.4 843.3M985 721L904.5 570.6M985 721L836.8 757.9M985 721L1035.0 566.9M985 721L1017.9 841.8M985 721L844.7 627.4M985 721L888.3 822.6M985 721L953.3 554.0M985 721L824.6 707.8M985 721L1077.9 595.7M985 721L966.8 849.6M985 721L877.1 587.1M985 721L851.0 786.7M985 721L1005.1 555.2M985 721L1047.9 830.2M985 721L830.4 656.2M985 721L1108.5 637.6M985 721L915.8 839.4M985 721L921.6 560.2M985 721L828.1 739.9M985 721L1053.6 574.3M985 721L999.1 849.0M985 721L853.7 609.4M985 721L871.2 812.1M985 721L973.0 550.2M985 721L822.6 687.8M985 721L1092.9 609.1M985 721L946.6 849.9M985 721L891.8 573.3M985 721L838.5 770.8M985 721L1025.1 558.5M985 721L1030.9 841.3M985 721L835.4 636.6M985 721L896.7 832.6M985 721L940.3 552.3M985 721L821.8 720.6M985 721L1071.4 584.3M985 721L979.3 853.6M985 721L865.2 592.6M985 721L855.4 799.0M985 721L993.5 549.2M985 721L1060.5 826.9M985 721L823.3 667.3M985 721L1106.2 624.7M985 721L926.3 847.4M985 721L908.5 561.4M985 721L828.1 753.1M985 721L1044.7 564.6M985 721L1012.3 850.1M985 721L843.2 617.5M985 721L878.3 823.2M985 721L960.3 546.8M985 721L818.1 700.2M985 721L1087.8 596.9M985 721L958.6 855.5M985 721L879.2 577.3M985 721L841.4 783.8M985 721L1014.2 551.0M985 721L1044.1 839.5M985 721L826.9 646.8M985 721L1117.4 642.2M985 721L906.1 842.0M985 721L927.0 551.8M985 721L820.1 733.8M985 721L1063.7 573.4M985 721L992.3 856.4M985 721L853.7 599.4M985 721L861.2 811.1M985 721L981.1 544.2M985 721L1073.1 822.2M985 721L817.2 679.2M985 721L1102.7 611.8M985 721L937.6 854.5M985 721L895.3 563.8M985 721L829.4 766.5M985 721L1034.7 555.6M985 721L1025.7 850.0M985 721L833.4 626.7M985 721L886.7 833.8M985 721L947.0 544.7M985 721L814.8 713.3M985 721L1081.5 585.0M985 721L971.4 859.9M985 721L866.7 582.6M985 721L845.6 796.6M985 721L1002.3 544.3M985 721L1057.3 836.4M985 721L819.3 658.0M985 721L1115.5 628.8M985 721L916.7 850.6M985 721L913.5 552.6M985 721L819.7 747.4M985 721L1054.7 563.1M985 721L1005.9 858.0M985 721L842.6 607.4M985 721L868.2 822.8M985 721L968.0 540.3M985 721L1085.4 816.2M985 721L812.2 691.9M985 721L1097.8 599.0M985 721L949.9 860.6M985 721L882.2 567.6M985 721L832.0 779.9M985 721L1023.7 547.5M985 721L1039.4 848.6M985 721L824.3 637.0M985 721L1126.0 647.7M985 721L896.1 843.7M985 721L933.2 543.7M985 721L812.6 726.9M985 721L1073.8 573.5M985 721L984.8 863.2M985 721L854.6 589.3M985 721L851.2 809.3M985 721L989.7 538.8M985 721L1070.4 832.0M985 721L812.6 670.2M985 721L1112.2 615.4M985 721L928.2 858.3M985 721L899.8 554.7M985 721L820.6 761.3M985 721L1044.7 553.6M985 721L1019.8 858.3M985 721L832.2 616.6M985 721L1134.0 668.1M985 721L876.5 834.1M985 721L954.3 537.6M985 721L1097.3 808.9M985 721L808.4 705.4M985 721L1091.5 586.5M985 721L962.9 865.6M985 721L869.2 572.7M985 721L836.0 793.3M985 721L1011.7 540.2M985 721L1053.1 845.8M985 721L816.0 648.3M985 721L1124.4 633.8M985 721L906.7 852.9M985 721L919.2 544.1M985 721L811.8 740.9M985 721L1065.0 562.6M985 721L998.7 865.3M985 721L843.0 597.2M985 721L858.0 821.6M985 721L976.3 534.3M985 721L1083.2 826.2M985 721L807.0 683.1M985 721L1107.5 602.0M985 721L940.6 865.0M985 721L886.0 558.1M985 721L822.9 775.2M985 721L1033.6 544.8M985 721L1033.9 857.2M985 721L822.5 626.9M985 721L1134.1 653.9M985 721L885.9 844.6M985 721L940.2 536.1M985 721L1108.7 800.4M985 721L805.7 719.3M985 721L1084.1 574.4M985 721L976.6 869.5M985 721L856.5 579.2M985 721L841.3 806.6M985 721L998.8 534.1M985 721L1066.8 841.6M985 721L808.8 660.6M985 721L1121.5 619.8M985 721L918.3 861.3M985 721L905.0 545.8M985 721L812.3 755.2M985 721L1054.9 552.3M985 721L1013.0 866.1M985 721L831.9 606.3M985 721L1141.1 675.5M985 721L866.2 833.5M985 721L962.3 531.1M985 721L1095.8 819.2M985 721L802.6 696.8M985 721L1101.6 588.9M985 721L953.9 870.6M985 721L872.5 562.9M985 721L826.5 789.2M985 721L1021.5 536.9M985 721L1048.1 854.8M985 721L813.6 638.3M985 721L1133.0 639.5M985 721L896.5 854.5M985 721L925.7 536.0M985 721L1119.4 790.7M985 721L804.3 733.7M985 721L1075.3 562.8M985 721L990.9 872.1M985 721L844.2 586.9M985 721L847.9 819.5M985 721L985.2 529.0M985 721L1080.2 836.2M985 721L802.5 673.8M985 721L1117.2 605.9M985 721L930.9 868.6M985 721L890.7 548.9M985 721L814.1 769.7M985 721L1043.8 542.9M985 721L1027.6 865.5M985 721L821.5 616.5M985 721L1141.9 660.9M985 721L875.5 844.7M985 721L947.8 529.1M985 721L1107.8 810.8M985 721L799.3 711.1M985 721L1094.3 576.2M985 721L967.9 875.1M985 721L859.1 569.1M985 721L831.5 803.0M985 721L1008.5 530.1M985 721L1062.4 851.1M985 721L805.6 650.7M985 721L1130.5 625.0M985 721L908.2 863.5M985 721L911.0 537.3M985 721L804.3 748.5M985 721L1065.4 551.9M985 721L1005.6 873.4M985 721L832.4 595.8M985 721L1147.8 683.6M985 721L855.8 832.0M985 721L970.9 525.1M985 721L1093.4 829.3M985 721L797.4 687.7M985 721L1111.5 592.2M985 721L944.3 874.9M985 721L876.6 553.3M985 721L817.3 784.2M985 721L1031.6 534.4M985 721L1042.4 863.6M985 721L811.9 627.9M985 721L1141.2 646.1M985 721L886.0 855.2M985 721L932.9 528.4M985 721L1119.2 801.2M985 721L797.4 725.9M985 721L1085.8 564.0M985 721L982.4 878.3M985 721L846.2 576.6M985 721L837.8 816.6M985 721L994.6 524.4M985 721L1076.4 845.9M985 721L798.7 664.0M985 721L1126.6 610.6M985 721L920.8 871.5M985 721L896.3 539.9M985 721L805.6 763.4M985 721L1054.3 541.8M985 721L1020.6 873.4M985 721L821.4 606.0M985 721L1149.1 668.6M985 721L865.0 843.9M985 721L956.1 522.6M985 721L1106.1 821.2M985 721L793.6 702.2M985 721L1104.5 578.8M985 721L958.5 880.0M985 721L862.7 559.1M985 721L821.9 798.6M985 721L1018.5 526.8M985 721L1057.1 860.3M985 721L803.3 640.4M985 721L1139.2 631.1M985 721L897.7 864.9M985 721L917.8 529.1M985 721L1129.9 790.5M985 721L796.8 741.0M985 721L1076.0 552.4M985 721L997.5 880.2M985 721L833.8 585.3M985 721L1153.9 692.3M985 721L845.5 829.7M985 721L980.1 519.9M985 721L1090.2 839.5M985 721L793.0 678.0M985 721L1121.3 596.3M985 721L934.4 878.5M985 721L881.5 543.9M985 721L1146.6 755.1M985 721L808.3 778.5M985 721L1042.1 532.6M985 721L1035.8 872.0M985 721L811.1 617.3M985 721L1149.0 653.3M985 721L875.4 855.1M985 721L940.8 521.3M985 721L1118.2 811.8M985 721L791.0 717.3M985 721L1096.2 565.9M985 721L973.4 883.9M985 721L849.1 566.3M985 721L1155.4 716.6M985 721L827.8 812.8M985 721L1004.6 520.4M985 721L1071.8 855.5M985 721L795.7 653.7M985 721L1135.8 616.0M985 721L910.3 873.7M985 721L902.5 531.3M985 721L1139.7 778.6M985 721L797.6 756.4M985 721L1065.0 541.5M985 721L1012.9 880.8M985 721L822.0 595.3M985 721L1155.8 676.9M985 721L854.4 842.3M985 721L965.0 516.6M985 721L1103.5 831.6M985 721L788.4 692.8M985 721L1114.7 582.3M985 721L948.7 884.3M985 721L867.0 549.3M985 721L1153.7 741.3M985 721L812.5 793.4M985 721L1029.0 524.3M985 721L1051.1 869.2M985 721L801.7 629.7M985 721L1147.5 637.8M985 721L886.9 865.5M985 721L925.3 521.4M985 721L1129.6 801.2M985 721L789.8 732.9M985 721L1086.6 553.7M985 721L988.7 886.5M985 721L836.0 574.8M985 721L1159.4 701.5M985 721L835.2 826.6M985 721L989.8 515.2M985 721L1086.1 849.4M985 721L789.2 668.0M985 721L1130.9 601.2M985 721L924.0 881.4M985 721L887.3 534.8M985 721L1148.6 765.7M985 721L799.8 771.9M985 721L1052.9 531.6M985 721L1028.6 880.0M985 721L811.1 606.5M985 721L1156.3 661.2M985 721L864.6 854.2M985 721L949.4 514.7M985 721L1116.3 822.5M985 721L785.2 708.2M985 721L1106.7 568.7M985 721L963.8 888.9M985 721L852.8 556.1M985 721L1159.6 726.6M985 721L818.0 808.2M985 721L1014.9 517.2M985 721L1066.3 864.9M985 721L793.4 643.1M985 721L1144.6 622.3M985 721L899.6 875.0M985 721L909.5 523.0M985 721L1140.1 789.4M985 721L789.9 748.7M985 721L1075.8 542.1M985 721L1004.5 887.7M985 721L823.6 584.6M985 721L1161.9 685.9M985 721L843.8 839.8M985 721L974.5 511.3M985 721L1100.1 842.0M985 721L784.0 682.9M985 721L1124.7 586.6M985 721L938.4 887.9M985 721L872.2 539.7M985 721L1156.4 751.8M985 721L803.4 787.4M985 721L1039.7 522.6M985 721L1044.3 877.7M985 721L801.0 618.9M985 721L1155.4 645.3M985 721L876.0 865.4M985 721L933.4 514.2M985 721L1128.4 812.1M985 721L783.3 724.1M985 721L1097.3 555.8M985 721L979.4 892.2M985 721L839.1 564.3M985 721L1164.2 711.3M985 721L825.0 822.6M985 721L1000.0 511.3M985 721L1081.3 859.2M985 721L786.2 657.4M985 721L1140.3 606.9M985 721L913.2 883.5M985 721L893.8 526.0M985 721L1149.7 776.6M985 721L791.5 764.7M985 721L1063.8 531.4M985 721L1020.6 887.5M985 721L811.8 595.6M985 721L1163.1 669.8M985 721L853.8 852.5M985 721L958.6 508.7M985 721L1113.6 833.1M985 721L780.0 698.6M985 721L1117.0 572.4M985 721L953.7 893.2M985 721L857.3 546.1M985 721L1163.0 737.1M985 721L808.4 802.8M985 721L1025.6 514.7M985 721L1060.1 874.0M985 721L791.8 632.2M985 721L1153.1 629.3M985 721L888.6 875.6M985 721L917.3 515.1M985 721L1139.7 800.4M985 721L782.8 740.3M985 721L1086.7 543.5M985 721L995.6 894.1M985 721L825.9 573.8M985 721L1167.5 695.4M985 721L833.3 836.6M985 721L984.4 506.6M985 721L1095.9 852.2M985 721L780.1 672.6M985 721L1134.5 591.6M985 721L927.8 890.8M985 721L878.1 530.4M985 721L1158.3 762.7M985 721L794.6 780.7M985 721L1050.7 521.6M985 721L1036.9 885.8M985 721L801.0 607.8M985 721L1162.9 653.5M985 721L865.0 864.4M985 721L942.3 507.5M985 721L1126.5 823.0M985 721L777.4 714.7M985 721L1108.0 558.7M985 721L969.6 897.3M985 721L842.9 553.9M985 721L1168.4 721.6M985 721L814.9 817.8M985 721L1010.6 508.0M985 721L1075.7 868.8M985 721L783.8 646.6M985 721L1149.3 613.3M985 721L902.2 884.8M985 721L901.0 517.5M985 721L1150.1 787.7M985 721L783.8 756.7M985 721L1074.9 532.0M985 721L1012.0 894.6M985 721L813.4 584.6M985 721L1169.4 679.0M985 721L843.0 849.9M985 721L968.3 503.3M985 721L1110.1 843.7M985 721L775.4 688.4M985 721L1127.3 576.8M985 721L943.1 896.9M985 721L862.6 536.3M985 721L1165.7 747.9M985 721L799.1 796.6M985 721L1036.6 513.0M985 721L1053.1 882.7M985 721L791.1 621.1M985 721L1161.2 637.0M985 721L877.4 875.4M985 721L925.7 507.8M985 721L1138.5 811.6M985 721L776.2 731.3M985 721L1097.7 545.6M985 721L986.0 899.9M985 721L829.0 563.1M985 721L1172.4 705.5M985 721L822.9 832.5M985 721L994.9 502.5M985 721L1091.0 862.2M985 721L777.0 661.8M985 721L1144.0 597.5M985 721L916.8 892.9M985 721L884.8 521.4M985 721L1159.5 773.9M985 721L786.2 773.3M985 721L1062.0 521.5M985 721L1028.7 893.6M985 721L801.8 596.6M985 721L1169.9 662.3M985 721L853.9 862.6M985 721L951.7 501.3M985 721L1123.7 833.9M985 721L772.1 704.8M985 721L1118.7 562.4M985 721L959.2 901.7M985 721L847.5 543.6M985 721L1171.9 732.3M985 721L805.1 812.3M985 721L1021.6 505.4M985 721L1069.3 878.1M985 721L782.3 635.4M985 721L1158.0 620.5M985 721L890.9 885.4M985 721L908.9 509.5M985 721L1149.7 799.0M985 721L776.5 748.1M985 721L1086.1 533.4M985 721L1002.8 901.1M985 721L815.8 573.5M985 721L1175.1 688.8M985 721L832.2 846.6M985 721L978.5 498.4M985 721L1105.8 854.2M985 721L771.5 677.8M985 721L1137.3 582.0M985 721L932.2 899.8M985 721L868.7 526.8M985 721L1167.7 759.1M985 721L790.1 789.7M985 721L1047.9 512.0M985 721L1045.5 891.1M985 721L791.1 609.8M985 721L1168.8 645.4M985 721L866.1 874.4M985 721L934.7 500.9M985 721L1136.5 822.7M985 721L770.1 721.7M985 721L1108.7 548.6M985 721L975.9 905.1M985 721L833.0 552.4M985 721L1176.7 716.0M985 721L812.6 827.6M985 721L1005.8 499.2M985 721L1085.2 872.0M985 721L774.7 650.7M985 721L1153.3 604.1M985 721L905.5 894.3M985 721L892.2 512.7M985 721L1159.9 785.3M985 721L778.2 765.1M985 721L1073.3 522.1M985 721L1019.9 900.8M985 721L803.4 585.3M985 721L1176.3 671.7M985 721L842.8 860.0M985 721L961.6 495.7M985 721L1120.1 844.7M985 721L767.4 694.4M985 721L1129.2 566.9M985 721L948.4 905.4M985 721L853.0 533.6M985 721L1174.7 743.4M985 721L795.6 806.0M985 721L1032.9 503.6M985 721L1062.2 887.1M985 721L781.5 624.0M985 721L1166.3 628.4M985 721L879.5 885.2M985 721L917.5 501.9M985 721L1148.5 810.4M985 721L769.7 738.9M985 721L1097.4 535.6M985 721L993.0 907.0M985 721L819.0 562.5M985 721L1180.2 699.1M985 721L821.5 842.4M985 721L989.2 494.3M985 721L1100.7 864.5M985 721L768.3 666.7M985 721L1147.1 588.0M985 721L920.9 902.1M985 721L875.5 517.5M985 721L1168.9 770.5M985 721L781.5 782.1M985 721L1059.4 511.8M985 721L1037.1 899.0M985 721L791.9 598.3M985 721L1176.0 654.4M985 721L854.7 872.6M985 721L944.3 494.5M985 721L1133.7 833.9M985 721L764.6 711.5M985 721L1119.6 552.4M985 721L965.3 909.7M985 721L837.7 541.9M985 721L1180.3 727.0M985 721L802.5 822.0M985 721L1017.0 496.6M985 721L1078.7 881.6M985 721L773.0 639.2M985 721L1162.3 611.4M985 721L893.9 895.0M985 721L900.3 504.5M985 721L1159.5 796.8M985 721L770.7 756.3M985 721L1084.8 523.5M985 721L1010.5 907.5M985 721L805.8 574.0M985 721L1182.2 681.7M985 721L831.7 856.6M985 721L972.1 490.8M985 721L1115.7 855.5M985 721L763.3 683.5M985 721L1139.5 572.2M985 721L937.2 908.5M985 721L859.2 523.8M985 721L1176.7 754.8M985 721L786.3 799.0M985 721L1044.5 502.6M985 721L1054.3 895.7M985 721L781.5 612.4M985 721L1174.2 636.9M985 721L867.9 884.2M985 721L926.7 494.8M985 721L1146.5 821.8M985 721L763.4 729.1M985 721L1108.6 538.6M985 721L982.7 912.4M985 721L823.0 551.6M985 721L1184.6 709.9M985 721L810.9 837.5M985 721L1000.4 490.8M985 721L1094.9 874.5M985 721L765.8 655.3M985 721L1156.7 594.7M985 721L909.4 903.5M985 721L883.1 508.6M985 721L1169.4 782.2M985 721L773.3 773.8M985 721L1071.1 512.4M985 721L1028.1 906.5M985 721L793.5 586.7M985 721L1182.6 664.0M985 721L843.3 869.9M985 721L954.5 488.8M985 721L1130.1 845.1M985 721L759.8 700.9M985 721L1130.4 557.0M985 721L954.2 913.6M985 721L843.2 531.5M985 721L1183.3 738.3M985 721L792.7 815.6M985 721L1028.6 494.6M985 721L1071.4 890.8M985 721L772.1 627.5M985 721L1170.8 619.5M985 721L882.2 894.8M985 721L909.0 496.7M985 721L1158.3 808.5M985 721L763.7 746.9M985 721L1096.4 525.7M985 721L1000.4 913.7M985 721L809.0 562.7M985 721L1187.4 692.2M985 721L820.7 852.4M985 721L983.0 486.5M985 721L1110.6 866.0M985 721L760.0 672.2M985 721L1149.6 578.3M985 721L925.7 910.8M985 721L866.1 514.2M985 721L1178.0 766.5M985 721L777.5 791.2M985 721L1056.3 502.3M985 721L1045.8 903.8M985 721L782.2 600.6M985 721L1181.6 646.1M985 721L856.2 882.4M985 721L936.6 488.3M985 721L1143.6 833.3M985 721L757.7 718.7M985 721L1119.8 542.5M985 721L971.8 917.2M985 721L827.8 540.8M985 721L1188.4 721.1M985 721L800.5 831.7M985 721L1011.9 488.0M985 721L1088.2 884.4M985 721L764.1 643.6M985 721L1165.9 602.2M985 721L897.5 904.3M985 721L891.3 500.1M985 721L1169.0 794.0M985 721L765.5 764.8M985 721L1082.9 513.7M985 721L1018.5 913.4M985 721L795.9 575.1M985 721L1188.7 674.2M985 721L832.0 866.5M985 721L965.2 483.6M985 721L1125.7 856.1M985 721L755.6 689.8M985 721L1141.0 562.4M985 721L942.8 916.8M985 721L849.5 521.4M985 721L1185.4 750.0M985 721L783.2 808.4M985 721L1040.4 493.5M985 721L1063.5 899.6M985 721L772.0 615.6M985 721L1178.9 628.2M985 721L870.3 893.9M985 721L918.4 489.3M985 721L1156.3 820.3M985 721L757.2 736.9M985 721L1107.9 528.7M985 721L989.9 919.3M985 721L813.1 551.4M985 721L1192.1 703.3M985 721L809.9 847.4M985 721L994.4 482.8M985 721L1104.6 876.4M985 721L757.4 660.6M985 721L1159.4 585.1M985 721L913.8 912.4M985 721L873.8 505.1M985 721L1178.6 778.5M985 721L769.0 782.8M985 721L1068.2 502.8M985 721L1036.7 911.5M985 721L783.8 588.7M985 721L1188.5 656.0M985 721L844.5 879.8M985 721L946.9 482.3M985 721L1140.0 844.7M985 721L752.7 707.8M985 721L1130.9 547.1M985 721L960.5 921.2M985 721L833.4 530.1M985 721L1191.5 732.7M985 721L790.4 825.3M985 721L1023.7 486.0M985 721L1080.9 893.9M985 721L763.1 631.6M985 721L1174.7 610.3M985 721L885.5 904.2M985 721L900.2 492.0M985 721L1167.9 806.0M985 721L758.3 755.2M985 721L1094.7 515.9M985 721L1008.3 919.8M985 721L799.1 563.4M985 721L1194.2 685.0M985 721L820.7 862.3M985 721L976.4 479.1M985 721L1120.5 867.0M985 721L752.1 678.2M985 721L1151.4 568.5M985 721L931.0 919.3M985 721L856.5 511.6M985 721L1186.9 762.0M985 721L774.0 800.5M985 721L1052.5 493.1M985 721L1054.8 908.1M985 721L772.7 603.5M985 721L1186.6 637.5M985 721L858.3 892.1M985 721L928.4 482.5M985 721L1153.5 832.0M985 721L751.3 726.3M985 721L1119.4 532.5M985 721L978.8 924.2M985 721L817.9 540.3M985 721L1196.0 714.7M985 721L799.2 841.6M985 721L1006.2 479.9M985 721L1098.0 886.5M985 721L755.5 648.6M985 721L1168.9 592.7M985 721L901.7 913.3M985 721L882.1 496.3M985 721L1178.4 790.6M985 721L760.9 773.7M985 721L1080.3 504.1M985 721L1026.9 918.7M985 721L786.1 576.8M985 721L1194.8 666.3M985 721L832.8 876.4M985 721L957.9 476.9M985 721L1135.6 856.1M985 721L748.3 696.5M985 721L1141.8 552.5M985 721L948.8 924.6M985 721L839.7 519.7M985 721L1193.8 744.6M985 721L780.6 818.0M985 721L1035.8 484.7M985 721L1072.8 903.0M985 721L762.9 619.4M985 721L1183.1 619.2M985 721L873.3 903.3M985 721L909.8 484.4M985 721L1166.0 818.1M985 721L751.5 745.1M985 721L1106.6 518.9M985 721L997.5 925.6M985 721L803.1 551.9M985 721L1199.1 696.2M985 721L809.5 857.3M985 721L988.0 475.2M985 721L1114.5 877.7M985 721L749.3 666.3M985 721L1161.5 575.4M985 721L918.8 921.0M985 721L864.3 502.1M985 721L1187.6 774.2M985 721L765.2 792.0M985 721L1064.8 493.5M985 721L1045.5 916.1M985 721L774.2 591.4M985 721L1193.7 647.5M985 721L846.3 889.6M985 721L939.0 476.3M985 721L1149.9 843.8M985 721L746.0 715.2M985 721L1130.8 537.1M985 721L967.3 928.5M985 721L823.5 529.3M985 721L1199.3 726.6M985 721L788.8 835.1M985 721L1018.3 477.7M985 721L1090.5 896.3M985 721L754.3 636.3M985 721L1178.0 600.9M985 721L889.4 913.3M985 721L891.2 487.9M985 721L1177.4 802.9M985 721L753.4 763.9M985 721L1092.5 506.2M985 721L1016.5 925.4M985 721L789.3 564.9M985 721L1200.5 677.3M985 721L821.2 872.2M985 721L969.2 472.1M985 721L1130.4 867.3M985 721L744.5 684.7M985 721L1152.5 558.6M985 721L936.8 927.3M985 721L846.8 509.6M985 721L1195.4 756.9M985 721L771.2 810.1M985 721L1048.2 484.2M985 721L1064.1 911.7M985 721L763.4 607.1M985 721L1191.0 628.7M985 721L861.0 901.7M985 721L920.0 477.3M985 721L1163.3 830.2" stroke="#c6c6ca" stroke-opacity="1" stroke-width="0.9" fill="none" shape-rendering="crispEdges"/>
<path d="M920.1 682.3a3.2 3.2 0 1 0 6.4 0a3.2 3.2 0 1 0 -6.4 0M927.6 664.7a3.2 3.2 0 1 0 6.4 0a3.2 3.2 0 1 0 -6.4 0M913.2 692.8a3.2 3.2 0 1 0 6.4 0a3.2 3.2 0 1 0 -6.4 0M941.4 650.3a3.2 3.2 0 1 0 6.4 0a3.2 3.2 0 1 0 -6.4 0M917.3 672.8a3.2 3.2 0 1 0 6.4 0a3.2 3.2 0 1 0 -6.4 0M960.1 641.3a3.2 3.2 0 1 0 6.4 0a3.2 3.2 0 1 0 -6.4 0M908.9 705.4a3.2 3.2 0 1 0 6.4 0a3.2 3.2 0 1 0 -6.4 0M928.6 654.7a3.2 3.2 0 1 0 6.4 0a3.2 3.2 0 1 0 -6.4 0M908.9 683.7a3.2 3.2 0 1 0 6.4 0a3.2 3.2 0 1 0 -6.4 0M946.2 641.3a3.2 3.2 0 1 0 6.4 0a3.2 3.2 0 1 0 -6.4 0M907.8 719.5a3.2 3.2 0 1 0 6.4 0a3.2 3.2 0 1 0 -6.4 0M916.8 662.5a3.2 3.2 0 1 0 6.4 0a3.2 3.2 0 1 0 -6.4 0M968.0 634.7a3.2 3.2 0 1 0 6.4 0a3.2 3.2 0 1 0 -6.4 0M903.1 696.9a3.2 3.2 0 1 0 6.4 0a3.2 3.2 0 1 0 -6.4 0M932.0 644.9a3.2 3.2 0 1 0 6.4 0a3.2 3.2 0 1 0 -6.4 0M910.2 734.0a3.2 3.2 0 1 0 6.4 0a3.2 3.2 0 1 0 -6.4 0M906.6 673.5a3.2 3.2 0 1 0 6.4 0a3.2 3.2 0 1 0 -6.4 0M953.0 633.4a3.2 3.2 0 1 0 6.4 0a3.2 3.2 0 1 0 -6.4 0M900.5 711.9a3.2 3.2 0 1 0 6.4 0a3.2 3.2 0 1 0 -6.4 0M918.4 652.1a3.2 3.2 0 1 0 6.4 0a3.2 3.2 0 1 0 -6.4 0M977.5 629.7a3.2 3.2 0 1 0 6.4 0a3.2 3.2 0 1 0 -6.4 0M899.0 687.0a3.2 3.2 0 1 0 6.4 0a3.2 3.2 0 1 0 -6.4 0M937.5 635.7a3.2 3.2 0 1 0 6.4 0a3.2 3.2 0 1 0 -6.4 0M901.4 727.7a3.2 3.2 0 1 0 6.4 0a3.2 3.2 0 1 0 -6.4 0M906.4 662.6a3.2 3.2 0 1 0 6.4 0a3.2 3.2 0 1 0 -6.4 0M961.6 626.7a3.2 3.2 0 1 0 6.4 0a3.2 3.2 0 1 0 -6.4 0M894.6 702.6a3.2 3.2 0 1 0 6.4 0a3.2 3.2 0 1 0 -6.4 0M922.3 641.7a3.2 3.2 0 1 0 6.4 0a3.2 3.2 0 1 0 -6.4 0M906.2 743.4a3.2 3.2 0 1 0 6.4 0a3.2 3.2 0 1 0 -6.4 0M988.1 626.6a3.2 3.2 0 1 0 6.4 0a3.2 3.2 0 1 0 -6.4 0M896.8 676.1a3.2 3.2 0 1 0 6.4 0a3.2 3.2 0 1 0 -6.4 0M944.9 627.3a3.2 3.2 0 1 0 6.4 0a3.2 3.2 0 1 0 -6.4 0M893.8 719.5a3.2 3.2 0 1 0 6.4 0a3.2 3.2 0 1 0 -6.4 0M908.4 651.5a3.2 3.2 0 1 0 6.4 0a3.2 3.2 0 1 0 -6.4 0M914.8 758.2a3.2 3.2 0 1 0 6.4 0a3.2 3.2 0 1 0 -6.4 0M971.7 621.4a3.2 3.2 0 1 0 6.4 0a3.2 3.2 0 1 0 -6.4 0M890.3 692.1a3.2 3.2 0 1 0 6.4 0a3.2 3.2 0 1 0 -6.4 0M928.2 631.9a3.2 3.2 0 1 0 6.4 0a3.2 3.2 0 1 0 -6.4 0M896.9 736.6a3.2 3.2 0 1 0 6.4 0a3.2 3.2 0 1 0 -6.4 0M999.6 625.3a3.2 3.2 0 1 0 6.4 0a3.2 3.2 0 1 0 -6.4 0M896.6 664.5a3.2 3.2 0 1 0 6.4 0a3.2 3.2 0 1 0 -6.4 0M926.9 771.1a3.2 3.2 0 1 0 6.4 0a3.2 3.2 0 1 0 -6.4 0M954.1 620.1a3.2 3.2 0 1 0 6.4 0a3.2 3.2 0 1 0 -6.4 0M887.4 709.6a3.2 3.2 0 1 0 6.4 0a3.2 3.2 0 1 0 -6.4 0M912.4 640.4a3.2 3.2 0 1 0 6.4 0a3.2 3.2 0 1 0 -6.4 0M904.1 753.2a3.2 3.2 0 1 0 6.4 0a3.2 3.2 0 1 0 -6.4 0M983.0 618.0a3.2 3.2 0 1 0 6.4 0a3.2 3.2 0 1 0 -6.4 0M887.8 680.4a3.2 3.2 0 1 0 6.4 0a3.2 3.2 0 1 0 -6.4 0M936.0 622.9a3.2 3.2 0 1 0 6.4 0a3.2 3.2 0 1 0 -6.4 0M888.6 728.0a3.2 3.2 0 1 0 6.4 0a3.2 3.2 0 1 0 -6.4 0M898.5 652.6a3.2 3.2 0 1 0 6.4 0a3.2 3.2 0 1 0 -6.4 0M915.1 768.1a3.2 3.2 0 1 0 6.4 0a3.2 3.2 0 1 0 -6.4 0M964.7 614.4a3.2 3.2 0 1 0 6.4 0a3.2 3.2 0 1 0 -6.4 0M882.7 698.4a3.2 3.2 0 1 0 6.4 0a3.2 3.2 0 1 0 -6.4 0M918.5 629.8a3.2 3.2 0 1 0 6.4 0a3.2 3.2 0 1 0 -6.4 0M894.0 746.1a3.2 3.2 0 1 0 6.4 0a3.2 3.2 0 1 0 -6.4 0M995.2 616.4a3.2 3.2 0 1 0 6.4 0a3.2 3.2 0 1 0 -6.4 0M887.3 668.1a3.2 3.2 0 1 0 6.4 0a3.2 3.2 0 1 0 -6.4 0M929.7 780.6a3.2 3.2 0 1 0 6.4 0a3.2 3.2 0 1 0 -6.4 0M945.6 615.0a3.2 3.2 0 1 0 6.4 0a3.2 3.2 0 1 0 -6.4 0M881.6 717.7a3.2 3.2 0 1 0 6.4 0a3.2 3.2 0 1 0 -6.4 0M902.4 640.8a3.2 3.2 0 1 0 6.4 0a3.2 3.2 0 1 0 -6.4 0M903.6 763.1a3.2 3.2 0 1 0 6.4 0a3.2 3.2 0 1 0 -6.4 0M976.7 610.3a3.2 3.2 0 1 0 6.4 0a3.2 3.2 0 1 0 -6.4 0M879.7 686.2a3.2 3.2 0 1 0 6.4 0a3.2 3.2 0 1 0 -6.4 0M926.5 620.0a3.2 3.2 0 1 0 6.4 0a3.2 3.2 0 1 0 -6.4 0M884.9 737.2a3.2 3.2 0 1 0 6.4 0a3.2 3.2 0 1 0 -6.4 0M1008.0 616.8a3.2 3.2 0 1 0 6.4 0a3.2 3.2 0 1 0 -6.4 0M888.9 655.4a3.2 3.2 0 1 0 6.4 0a3.2 3.2 0 1 0 -6.4 0M917.1 777.9a3.2 3.2 0 1 0 6.4 0a3.2 3.2 0 1 0 -6.4 0M956.7 608.5a3.2 3.2 0 1 0 6.4 0a3.2 3.2 0 1 0 -6.4 0M876.1 706.0a3.2 3.2 0 1 0 6.4 0a3.2 3.2 0 1 0 -6.4 0M908.5 629.3a3.2 3.2 0 1 0 6.4 0a3.2 3.2 0 1 0 -6.4 0M892.7 756.0a3.2 3.2 0 1 0 6.4 0a3.2 3.2 0 1 0 -6.4 0M989.5 608.2a3.2 3.2 0 1 0 6.4 0a3.2 3.2 0 1 0 -6.4 0M878.7 673.1a3.2 3.2 0 1 0 6.4 0a3.2 3.2 0 1 0 -6.4 0M933.9 789.7a3.2 3.2 0 1 0 6.4 0a3.2 3.2 0 1 0 -6.4 0M936.3 611.2a3.2 3.2 0 1 0 6.4 0a3.2 3.2 0 1 0 -6.4 0M877.1 726.6a3.2 3.2 0 1 0 6.4 0a3.2 3.2 0 1 0 -6.4 0M1020.9 619.3a3.2 3.2 0 1 0 6.4 0a3.2 3.2 0 1 0 -6.4 0M892.6 642.7a3.2 3.2 0 1 0 6.4 0a3.2 3.2 0 1 0 -6.4 0M904.7 773.1a3.2 3.2 0 1 0 6.4 0a3.2 3.2 0 1 0 -6.4 0M969.1 603.7a3.2 3.2 0 1 0 6.4 0a3.2 3.2 0 1 0 -6.4 0M872.5 693.2a3.2 3.2 0 1 0 6.4 0a3.2 3.2 0 1 0 -6.4 0M953.4 797.6a3.2 3.2 0 1 0 6.4 0a3.2 3.2 0 1 0 -6.4 0M916.5 618.5a3.2 3.2 0 1 0 6.4 0a3.2 3.2 0 1 0 -6.4 0M882.7 747.0a3.2 3.2 0 1 0 6.4 0a3.2 3.2 0 1 0 -6.4 0M1003.0 608.0a3.2 3.2 0 1 0 6.4 0a3.2 3.2 0 1 0 -6.4 0M879.8 659.7a3.2 3.2 0 1 0 6.4 0a3.2 3.2 0 1 0 -6.4 0M920.6 787.4a3.2 3.2 0 1 0 6.4 0a3.2 3.2 0 1 0 -6.4 0M947.7 603.9a3.2 3.2 0 1 0 6.4 0a3.2 3.2 0 1 0 -6.4 0M870.8 714.6a3.2 3.2 0 1 0 6.4 0a3.2 3.2 0 1 0 -6.4 0M1033.8 624.0a3.2 3.2 0 1 0 6.4 0a3.2 3.2 0 1 0 -6.4 0M898.4 630.3a3.2 3.2 0 1 0 6.4 0a3.2 3.2 0 1 0 -6.4 0M892.8 766.2a3.2 3.2 0 1 0 6.4 0a3.2 3.2 0 1 0 -6.4 0M982.6 600.8a3.2 3.2 0 1 0 6.4 0a3.2 3.2 0 1 0 -6.4 0M870.8 679.5a3.2 3.2 0 1 0 6.4 0a3.2 3.2 0 1 0 -6.4 0M939.6 798.1a3.2 3.2 0 1 0 6.4 0a3.2 3.2 0 1 0 -6.4 0M926.4 608.8a3.2 3.2 0 1 0 6.4 0a3.2 3.2 0 1 0 -6.4 0M873.9 736.3a3.2 3.2 0 1 0 6.4 0a3.2 3.2 0 1 0 -6.4 0M1016.8 610.0a3.2 3.2 0 1 0 6.4 0a3.2 3.2 0 1 0 -6.4 0M883.0 646.1a3.2 3.2 0 1 0 6.4 0a3.2 3.2 0 1 0 -6.4 0M907.3 783.0a3.2 3.2 0 1 0 6.4 0a3.2 3.2 0 1 0 -6.4 0M960.5 598.2a3.2 3.2 0 1 0 6.4 0a3.2 3.2 0 1 0 -6.4 0M866.2 701.2a3.2 3.2 0 1 0 6.4 0a3.2 3.2 0 1 0 -6.4 0M961.0 804.6a3.2 3.2 0 1 0 6.4 0a3.2 3.2 0 1 0 -6.4 0M906.3 618.5a3.2 3.2 0 1 0 6.4 0a3.2 3.2 0 1 0 -6.4 0M881.8 757.3a3.2 3.2 0 1 0 6.4 0a3.2 3.2 0 1 0 -6.4 0M996.7 599.9a3.2 3.2 0 1 0 6.4 0a3.2 3.2 0 1 0 -6.4 0M871.1 665.2a3.2 3.2 0 1 0 6.4 0a3.2 3.2 0 1 0 -6.4 0M925.4 796.5a3.2 3.2 0 1 0 6.4 0a3.2 3.2 0 1 0 -6.4 0M938.0 600.5a3.2 3.2 0 1 0 6.4 0a3.2 3.2 0 1 0 -6.4 0M866.5 724.0a3.2 3.2 0 1 0 6.4 0a3.2 3.2 0 1 0 -6.4 0M1030.5 614.2a3.2 3.2 0 1 0 6.4 0a3.2 3.2 0 1 0 -6.4 0M888.4 632.7a3.2 3.2 0 1 0 6.4 0a3.2 3.2 0 1 0 -6.4 0M894.4 776.4a3.2 3.2 0 1 0 6.4 0a3.2 3.2 0 1 0 -6.4 0M974.5 594.3a3.2 3.2 0 1 0 6.4 0a3.2 3.2 0 1 0 -6.4 0M863.6 687.0a3.2 3.2 0 1 0 6.4 0a3.2 3.2 0 1 0 -6.4 0M946.5 805.9a3.2 3.2 0 1 0 6.4 0a3.2 3.2 0 1 0 -6.4 0M916.1 607.8a3.2 3.2 0 1 0 6.4 0a3.2 3.2 0 1 0 -6.4 0M871.9 746.5a3.2 3.2 0 1 0 6.4 0a3.2 3.2 0 1 0 -6.4 0M1011.3 601.2a3.2 3.2 0 1 0 6.4 0a3.2 3.2 0 1 0 -6.4 0M873.7 650.8a3.2 3.2 0 1 0 6.4 0a3.2 3.2 0 1 0 -6.4 0M911.2 792.6a3.2 3.2 0 1 0 6.4 0a3.2 3.2 0 1 0 -6.4 0M951.1 593.7a3.2 3.2 0 1 0 6.4 0a3.2 3.2 0 1 0 -6.4 0M861.0 710.3a3.2 3.2 0 1 0 6.4 0a3.2 3.2 0 1 0 -6.4 0M1043.9 620.5a3.2 3.2 0 1 0 6.4 0a3.2 3.2 0 1 0 -6.4 0M969.5 810.5a3.2 3.2 0 1 0 6.4 0a3.2 3.2 0 1 0 -6.4 0M895.9 619.9a3.2 3.2 0 1 0 6.4 0a3.2 3.2 0 1 0 -6.4 0M882.3 767.7a3.2 3.2 0 1 0 6.4 0a3.2 3.2 0 1 0 -6.4 0M989.3 592.6a3.2 3.2 0 1 0 6.4 0a3.2 3.2 0 1 0 -6.4 0M863.2 672.0a3.2 3.2 0 1 0 6.4 0a3.2 3.2 0 1 0 -6.4 0M931.5 805.0a3.2 3.2 0 1 0 6.4 0a3.2 3.2 0 1 0 -6.4 0M927.7 598.3a3.2 3.2 0 1 0 6.4 0a3.2 3.2 0 1 0 -6.4 0M863.5 734.0a3.2 3.2 0 1 0 6.4 0a3.2 3.2 0 1 0 -6.4 0M1025.9 604.7a3.2 3.2 0 1 0 6.4 0a3.2 3.2 0 1 0 -6.4 0M878.5 636.5a3.2 3.2 0 1 0 6.4 0a3.2 3.2 0 1 0 -6.4 0M897.4 786.5a3.2 3.2 0 1 0 6.4 0a3.2 3.2 0 1 0 -6.4 0M965.5 588.9a3.2 3.2 0 1 0 6.4 0a3.2 3.2 0 1 0 -6.4 0M857.4 695.5a3.2 3.2 0 1 0 6.4 0a3.2 3.2 0 1 0 -6.4 0M954.5 812.8a3.2 3.2 0 1 0 6.4 0a3.2 3.2 0 1 0 -6.4 0M905.5 608.1a3.2 3.2 0 1 0 6.4 0a3.2 3.2 0 1 0 -6.4 0M871.3 757.1a3.2 3.2 0 1 0 6.4 0a3.2 3.2 0 1 0 -6.4 0M1004.6 593.0a3.2 3.2 0 1 0 6.4 0a3.2 3.2 0 1 0 -6.4 0M864.9 656.8a3.2 3.2 0 1 0 6.4 0a3.2 3.2 0 1 0 -6.4 0M916.5 801.9a3.2 3.2 0 1 0 6.4 0a3.2 3.2 0 1 0 -6.4 0M941.0 590.4a3.2 3.2 0 1 0 6.4 0a3.2 3.2 0 1 0 -6.4 0M856.8 720.1a3.2 3.2 0 1 0 6.4 0a3.2 3.2 0 1 0 -6.4 0M1040.3 610.5a3.2 3.2 0 1 0 6.4 0a3.2 3.2 0 1 0 -6.4 0M979.0 815.5a3.2 3.2 0 1 0 6.4 0a3.2 3.2 0 1 0 -6.4 0M885.6 622.7a3.2 3.2 0 1 0 6.4 0a3.2 3.2 0 1 0 -6.4 0M884.2 778.3a3.2 3.2 0 1 0 6.4 0a3.2 3.2 0 1 0 -6.4 0M980.8 586.0a3.2 3.2 0 1 0 6.4 0a3.2 3.2 0 1 0 -6.4 0M855.9 680.0a3.2 3.2 0 1 0 6.4 0a3.2 3.2 0 1 0 -6.4 0M938.8 812.9a3.2 3.2 0 1 0 6.4 0a3.2 3.2 0 1 0 -6.4 0M917.0 597.4a3.2 3.2 0 1 0 6.4 0a3.2 3.2 0 1 0 -6.4 0M861.7 744.7a3.2 3.2 0 1 0 6.4 0a3.2 3.2 0 1 0 -6.4 0M1020.0 595.7a3.2 3.2 0 1 0 6.4 0a3.2 3.2 0 1 0 -6.4 0M869.0 641.6a3.2 3.2 0 1 0 6.4 0a3.2 3.2 0 1 0 -6.4 0M901.6 796.4a3.2 3.2 0 1 0 6.4 0a3.2 3.2 0 1 0 -6.4 0M955.6 584.4a3.2 3.2 0 1 0 6.4 0a3.2 3.2 0 1 0 -6.4 0M852.1 705.0a3.2 3.2 0 1 0 6.4 0a3.2 3.2 0 1 0 -6.4 0M1054.0 618.5a3.2 3.2 0 1 0 6.4 0a3.2 3.2 0 1 0 -6.4 0M963.5 818.9a3.2 3.2 0 1 0 6.4 0a3.2 3.2 0 1 0 -6.4 0M894.8 609.7a3.2 3.2 0 1 0 6.4 0a3.2 3.2 0 1 0 -6.4 0M872.0 767.9a3.2 3.2 0 1 0 6.4 0a3.2 3.2 0 1 0 -6.4 0M996.7 585.5a3.2 3.2 0 1 0 6.4 0a3.2 3.2 0 1 0 -6.4 0M856.8 664.0a3.2 3.2 0 1 0 6.4 0a3.2 3.2 0 1 0 -6.4 0M923.0 810.6a3.2 3.2 0 1 0 6.4 0a3.2 3.2 0 1 0 -6.4 0M930.2 588.4a3.2 3.2 0 1 0 6.4 0a3.2 3.2 0 1 0 -6.4 0M853.9 730.6a3.2 3.2 0 1 0 6.4 0a3.2 3.2 0 1 0 -6.4 0M1035.4 600.7a3.2 3.2 0 1 0 6.4 0a3.2 3.2 0 1 0 -6.4 0M989.2 819.4a3.2 3.2 0 1 0 6.4 0a3.2 3.2 0 1 0 -6.4 0M875.4 626.8a3.2 3.2 0 1 0 6.4 0a3.2 3.2 0 1 0 -6.4 0M887.4 788.8a3.2 3.2 0 1 0 6.4 0a3.2 3.2 0 1 0 -6.4 0M971.3 580.5a3.2 3.2 0 1 0 6.4 0a3.2 3.2 0 1 0 -6.4 0M849.6 689.0a3.2 3.2 0 1 0 6.4 0a3.2 3.2 0 1 0 -6.4 0M947.2 820.0a3.2 3.2 0 1 0 6.4 0a3.2 3.2 0 1 0 -6.4 0M906.0 597.9a3.2 3.2 0 1 0 6.4 0a3.2 3.2 0 1 0 -6.4 0M861.2 755.7a3.2 3.2 0 1 0 6.4 0a3.2 3.2 0 1 0 -6.4 0M1013.0 587.2a3.2 3.2 0 1 0 6.4 0a3.2 3.2 0 1 0 -6.4 0M859.9 647.9a3.2 3.2 0 1 0 6.4 0a3.2 3.2 0 1 0 -6.4 0M907.2 806.0a3.2 3.2 0 1 0 6.4 0a3.2 3.2 0 1 0 -6.4 0M945.0 581.1a3.2 3.2 0 1 0 6.4 0a3.2 3.2 0 1 0 -6.4 0M847.9 715.3a3.2 3.2 0 1 0 6.4 0a3.2 3.2 0 1 0 -6.4 0M1050.1 608.0a3.2 3.2 0 1 0 6.4 0a3.2 3.2 0 1 0 -6.4 0M973.4 824.0a3.2 3.2 0 1 0 6.4 0a3.2 3.2 0 1 0 -6.4 0M884.0 612.6a3.2 3.2 0 1 0 6.4 0a3.2 3.2 0 1 0 -6.4 0M874.1 778.9a3.2 3.2 0 1 0 6.4 0a3.2 3.2 0 1 0 -6.4 0M987.8 578.7a3.2 3.2 0 1 0 6.4 0a3.2 3.2 0 1 0 -6.4 0M849.3 672.3a3.2 3.2 0 1 0 6.4 0a3.2 3.2 0 1 0 -6.4 0M930.6 818.8a3.2 3.2 0 1 0 6.4 0a3.2 3.2 0 1 0 -6.4 0M919.1 587.5a3.2 3.2 0 1 0 6.4 0a3.2 3.2 0 1 0 -6.4 0M852.1 741.7a3.2 3.2 0 1 0 6.4 0a3.2 3.2 0 1 0 -6.4 0M1029.2 591.3a3.2 3.2 0 1 0 6.4 0a3.2 3.2 0 1 0 -6.4 0M1000.1 822.1a3.2 3.2 0 1 0 6.4 0a3.2 3.2 0 1 0 -6.4 0M865.5 632.1a3.2 3.2 0 1 0 6.4 0a3.2 3.2 0 1 0 -6.4 0M891.9 799.1a3.2 3.2 0 1 0 6.4 0a3.2 3.2 0 1 0 -6.4 0M961.0 575.9a3.2 3.2 0 1 0 6.4 0a3.2 3.2 0 1 0 -6.4 0M844.1 698.8a3.2 3.2 0 1 0 6.4 0a3.2 3.2 0 1 0 -6.4 0M1064.0 617.6a3.2 3.2 0 1 0 6.4 0a3.2 3.2 0 1 0 -6.4 0M956.6 826.3a3.2 3.2 0 1 0 6.4 0a3.2 3.2 0 1 0 -6.4 0M894.8 599.6a3.2 3.2 0 1 0 6.4 0a3.2 3.2 0 1 0 -6.4 0M862.0 767.0a3.2 3.2 0 1 0 6.4 0a3.2 3.2 0 1 0 -6.4 0M1004.7 579.4a3.2 3.2 0 1 0 6.4 0a3.2 3.2 0 1 0 -6.4 0M851.5 655.5a3.2 3.2 0 1 0 6.4 0a3.2 3.2 0 1 0 -6.4 0M914.0 815.2a3.2 3.2 0 1 0 6.4 0a3.2 3.2 0 1 0 -6.4 0M933.8 579.0a3.2 3.2 0 1 0 6.4 0a3.2 3.2 0 1 0 -6.4 0M844.8 726.2a3.2 3.2 0 1 0 6.4 0a3.2 3.2 0 1 0 -6.4 0M1045.0 597.9a3.2 3.2 0 1 0 6.4 0a3.2 3.2 0 1 0 -6.4 0M984.0 828.0a3.2 3.2 0 1 0 6.4 0a3.2 3.2 0 1 0 -6.4 0M873.4 616.9a3.2 3.2 0 1 0 6.4 0a3.2 3.2 0 1 0 -6.4 0M877.4 789.8a3.2 3.2 0 1 0 6.4 0a3.2 3.2 0 1 0 -6.4 0M977.9 572.9a3.2 3.2 0 1 0 6.4 0a3.2 3.2 0 1 0 -6.4 0M842.7 681.7a3.2 3.2 0 1 0 6.4 0a3.2 3.2 0 1 0 -6.4 0M1076.7 629.3a3.2 3.2 0 1 0 6.4 0a3.2 3.2 0 1 0 -6.4 0M939.4 826.2a3.2 3.2 0 1 0 6.4 0a3.2 3.2 0 1 0 -6.4 0M907.6 588.0a3.2 3.2 0 1 0 6.4 0a3.2 3.2 0 1 0 -6.4 0M851.5 753.2a3.2 3.2 0 1 0 6.4 0a3.2 3.2 0 1 0 -6.4 0M1021.8 582.5a3.2 3.2 0 1 0 6.4 0a3.2 3.2 0 1 0 -6.4 0M1011.5 823.6a3.2 3.2 0 1 0 6.4 0a3.2 3.2 0 1 0 -6.4 0M856.1 638.7a3.2 3.2 0 1 0 6.4 0a3.2 3.2 0 1 0 -6.4 0M897.6 809.1a3.2 3.2 0 1 0 6.4 0a3.2 3.2 0 1 0 -6.4 0M950.0 572.4a3.2 3.2 0 1 0 6.4 0a3.2 3.2 0 1 0 -6.4 0M839.7 709.5a3.2 3.2 0 1 0 6.4 0a3.2 3.2 0 1 0 -6.4 0M1060.1 606.7a3.2 3.2 0 1 0 6.4 0a3.2 3.2 0 1 0 -6.4 0M966.9 831.6a3.2 3.2 0 1 0 6.4 0a3.2 3.2 0 1 0 -6.4 0M883.6 602.6a3.2 3.2 0 1 0 6.4 0a3.2 3.2 0 1 0 -6.4 0M864.1 778.4a3.2 3.2 0 1 0 6.4 0a3.2 3.2 0 1 0 -6.4 0M995.5 572.4a3.2 3.2 0 1 0 6.4 0a3.2 3.2 0 1 0 -6.4 0M843.7 664.1a3.2 3.2 0 1 0 6.4 0a3.2 3.2 0 1 0 -6.4 0M921.9 823.7a3.2 3.2 0 1 0 6.4 0a3.2 3.2 0 1 0 -6.4 0M922.2 578.1a3.2 3.2 0 1 0 6.4 0a3.2 3.2 0 1 0 -6.4 0M842.9 737.7a3.2 3.2 0 1 0 6.4 0a3.2 3.2 0 1 0 -6.4 0M1038.6 588.1a3.2 3.2 0 1 0 6.4 0a3.2 3.2 0 1 0 -6.4 0M995.4 830.9a3.2 3.2 0 1 0 6.4 0a3.2 3.2 0 1 0 -6.4 0M863.1 622.4a3.2 3.2 0 1 0 6.4 0a3.2 3.2 0 1 0 -6.4 0M882.0 800.6a3.2 3.2 0 1 0 6.4 0a3.2 3.2 0 1 0 -6.4 0M967.2 568.1a3.2 3.2 0 1 0 6.4 0a3.2 3.2 0 1 0 -6.4 0M836.9 691.9a3.2 3.2 0 1 0 6.4 0a3.2 3.2 0 1 0 -6.4 0M1074.0 617.9a3.2 3.2 0 1 0 6.4 0a3.2 3.2 0 1 0 -6.4 0M949.1 832.8a3.2 3.2 0 1 0 6.4 0a3.2 3.2 0 1 0 -6.4 0M896.0 589.7a3.2 3.2 0 1 0 6.4 0a3.2 3.2 0 1 0 -6.4 0M852.2 765.0a3.2 3.2 0 1 0 6.4 0a3.2 3.2 0 1 0 -6.4 0M1013.3 574.3a3.2 3.2 0 1 0 6.4 0a3.2 3.2 0 1 0 -6.4 0M1023.3 823.9a3.2 3.2 0 1 0 6.4 0a3.2 3.2 0 1 0 -6.4 0M847.2 646.5a3.2 3.2 0 1 0 6.4 0a3.2 3.2 0 1 0 -6.4 0M904.6 818.6a3.2 3.2 0 1 0 6.4 0a3.2 3.2 0 1 0 -6.4 0M938.4 570.1a3.2 3.2 0 1 0 6.4 0a3.2 3.2 0 1 0 -6.4 0M836.4 720.9a3.2 3.2 0 1 0 6.4 0a3.2 3.2 0 1 0 -6.4 0M1054.8 596.1a3.2 3.2 0 1 0 6.4 0a3.2 3.2 0 1 0 -6.4 0M978.0 835.9a3.2 3.2 0 1 0 6.4 0a3.2 3.2 0 1 0 -6.4 0M872.6 607.0a3.2 3.2 0 1 0 6.4 0a3.2 3.2 0 1 0 -6.4 0M867.4 789.8a3.2 3.2 0 1 0 6.4 0a3.2 3.2 0 1 0 -6.4 0M985.3 566.2a3.2 3.2 0 1 0 6.4 0a3.2 3.2 0 1 0 -6.4 0M836.7 673.7a3.2 3.2 0 1 0 6.4 0a3.2 3.2 0 1 0 -6.4 0M1086.5 631.1a3.2 3.2 0 1 0 6.4 0a3.2 3.2 0 1 0 -6.4 0M930.9 831.5a3.2 3.2 0 1 0 6.4 0a3.2 3.2 0 1 0 -6.4 0M910.3 578.4a3.2 3.2 0 1 0 6.4 0a3.2 3.2 0 1 0 -6.4 0M842.2 749.7a3.2 3.2 0 1 0 6.4 0a3.2 3.2 0 1 0 -6.4 0M1031.1 578.8a3.2 3.2 0 1 0 6.4 0a3.2 3.2 0 1 0 -6.4 0M1007.2 832.6a3.2 3.2 0 1 0 6.4 0a3.2 3.2 0 1 0 -6.4 0M853.2 629.2a3.2 3.2 0 1 0 6.4 0a3.2 3.2 0 1 0 -6.4 0M887.9 811.1a3.2 3.2 0 1 0 6.4 0a3.2 3.2 0 1 0 -6.4 0M955.8 564.4a3.2 3.2 0 1 0 6.4 0a3.2 3.2 0 1 0 -6.4 0M832.2 703.0a3.2 3.2 0 1 0 6.4 0a3.2 3.2 0 1 0 -6.4 0M1070.0 606.5a3.2 3.2 0 1 0 6.4 0a3.2 3.2 0 1 0 -6.4 0M959.7 838.5a3.2 3.2 0 1 0 6.4 0a3.2 3.2 0 1 0 -6.4 0M884.3 592.7a3.2 3.2 0 1 0 6.4 0a3.2 3.2 0 1 0 -6.4 0M854.3 776.9a3.2 3.2 0 1 0 6.4 0a3.2 3.2 0 1 0 -6.4 0M1003.8 566.9a3.2 3.2 0 1 0 6.4 0a3.2 3.2 0 1 0 -6.4 0M1035.4 823.0a3.2 3.2 0 1 0 6.4 0a3.2 3.2 0 1 0 -6.4 0M838.9 655.3a3.2 3.2 0 1 0 6.4 0a3.2 3.2 0 1 0 -6.4 0M912.8 827.6a3.2 3.2 0 1 0 6.4 0a3.2 3.2 0 1 0 -6.4 0M926.3 569.0a3.2 3.2 0 1 0 6.4 0a3.2 3.2 0 1 0 -6.4 0M834.3 732.8a3.2 3.2 0 1 0 6.4 0a3.2 3.2 0 1 0 -6.4 0M1048.3 585.9a3.2 3.2 0 1 0 6.4 0a3.2 3.2 0 1 0 -6.4 0M989.7 839.1a3.2 3.2 0 1 0 6.4 0a3.2 3.2 0 1 0 -6.4 0M861.8 612.6a3.2 3.2 0 1 0 6.4 0a3.2 3.2 0 1 0 -6.4 0M872.1 801.1a3.2 3.2 0 1 0 6.4 0a3.2 3.2 0 1 0 -6.4 0M974.3 561.1a3.2 3.2 0 1 0 6.4 0a3.2 3.2 0 1 0 -6.4 0M830.6 684.3a3.2 3.2 0 1 0 6.4 0a3.2 3.2 0 1 0 -6.4 0M1083.9 619.2a3.2 3.2 0 1 0 6.4 0a3.2 3.2 0 1 0 -6.4 0M940.9 838.5a3.2 3.2 0 1 0 6.4 0a3.2 3.2 0 1 0 -6.4 0M898.1 580.0a3.2 3.2 0 1 0 6.4 0a3.2 3.2 0 1 0 -6.4 0M842.8 761.9a3.2 3.2 0 1 0 6.4 0a3.2 3.2 0 1 0 -6.4 0M1022.4 570.2a3.2 3.2 0 1 0 6.4 0a3.2 3.2 0 1 0 -6.4 0M1019.5 833.1a3.2 3.2 0 1 0 6.4 0a3.2 3.2 0 1 0 -6.4 0M843.8 637.1a3.2 3.2 0 1 0 6.4 0a3.2 3.2 0 1 0 -6.4 0M895.0 821.1a3.2 3.2 0 1 0 6.4 0a3.2 3.2 0 1 0 -6.4 0M943.8 561.8a3.2 3.2 0 1 0 6.4 0a3.2 3.2 0 1 0 -6.4 0M828.6 714.7a3.2 3.2 0 1 0 6.4 0a3.2 3.2 0 1 0 -6.4 0M1064.7 595.4a3.2 3.2 0 1 0 6.4 0a3.2 3.2 0 1 0 -6.4 0M971.1 843.1a3.2 3.2 0 1 0 6.4 0a3.2 3.2 0 1 0 -6.4 0M872.7 597.0a3.2 3.2 0 1 0 6.4 0a3.2 3.2 0 1 0 -6.4 0M857.6 788.8a3.2 3.2 0 1 0 6.4 0a3.2 3.2 0 1 0 -6.4 0M993.3 560.3a3.2 3.2 0 1 0 6.4 0a3.2 3.2 0 1 0 -6.4 0M1047.5 820.7a3.2 3.2 0 1 0 6.4 0a3.2 3.2 0 1 0 -6.4 0M831.5 665.2a3.2 3.2 0 1 0 6.4 0a3.2 3.2 0 1 0 -6.4 0M1096.1 633.9a3.2 3.2 0 1 0 6.4 0a3.2 3.2 0 1 0 -6.4 0M922.0 835.9a3.2 3.2 0 1 0 6.4 0a3.2 3.2 0 1 0 -6.4 0M913.9 569.1a3.2 3.2 0 1 0 6.4 0a3.2 3.2 0 1 0 -6.4 0M833.3 745.2a3.2 3.2 0 1 0 6.4 0a3.2 3.2 0 1 0 -6.4 0M1040.6 576.1a3.2 3.2 0 1 0 6.4 0a3.2 3.2 0 1 0 -6.4 0M1002.0 841.1a3.2 3.2 0 1 0 6.4 0a3.2 3.2 0 1 0 -6.4 0M851.4 619.4a3.2 3.2 0 1 0 6.4 0a3.2 3.2 0 1 0 -6.4 0M878.0 812.0a3.2 3.2 0 1 0 6.4 0a3.2 3.2 0 1 0 -6.4 0M962.5 557.0a3.2 3.2 0 1 0 6.4 0a3.2 3.2 0 1 0 -6.4 0M825.4 695.7a3.2 3.2 0 1 0 6.4 0a3.2 3.2 0 1 0 -6.4 0M1079.9 607.3a3.2 3.2 0 1 0 6.4 0a3.2 3.2 0 1 0 -6.4 0M951.9 844.6a3.2 3.2 0 1 0 6.4 0a3.2 3.2 0 1 0 -6.4 0M886.0 582.9a3.2 3.2 0 1 0 6.4 0a3.2 3.2 0 1 0 -6.4 0M844.6 774.3a3.2 3.2 0 1 0 6.4 0a3.2 3.2 0 1 0 -6.4 0M1012.6 562.3a3.2 3.2 0 1 0 6.4 0a3.2 3.2 0 1 0 -6.4 0M1032.0 832.3a3.2 3.2 0 1 0 6.4 0a3.2 3.2 0 1 0 -6.4 0M835.1 646.1a3.2 3.2 0 1 0 6.4 0a3.2 3.2 0 1 0 -6.4 0M903.3 830.6a3.2 3.2 0 1 0 6.4 0a3.2 3.2 0 1 0 -6.4 0M931.3 560.4a3.2 3.2 0 1 0 6.4 0a3.2 3.2 0 1 0 -6.4 0M826.1 727.1a3.2 3.2 0 1 0 6.4 0a3.2 3.2 0 1 0 -6.4 0M1058.2 584.6a3.2 3.2 0 1 0 6.4 0a3.2 3.2 0 1 0 -6.4 0M983.3 846.6a3.2 3.2 0 1 0 6.4 0a3.2 3.2 0 1 0 -6.4 0M861.4 602.6a3.2 3.2 0 1 0 6.4 0a3.2 3.2 0 1 0 -6.4 0M862.1 800.5a3.2 3.2 0 1 0 6.4 0a3.2 3.2 0 1 0 -6.4 0M982.0 554.8a3.2 3.2 0 1 0 6.4 0a3.2 3.2 0 1 0 -6.4 0M1059.7 817.1a3.2 3.2 0 1 0 6.4 0a3.2 3.2 0 1 0 -6.4 0M824.9 676.1a3.2 3.2 0 1 0 6.4 0a3.2 3.2 0 1 0 -6.4 0M1093.6 621.5a3.2 3.2 0 1 0 6.4 0a3.2 3.2 0 1 0 -6.4 0M932.2 843.3a3.2 3.2 0 1 0 6.4 0a3.2 3.2 0 1 0 -6.4 0M901.3 570.6a3.2 3.2 0 1 0 6.4 0a3.2 3.2 0 1 0 -6.4 0M833.6 757.9a3.2 3.2 0 1 0 6.4 0a3.2 3.2 0 1 0 -6.4 0M1031.8 566.9a3.2 3.2 0 1 0 6.4 0a3.2 3.2 0 1 0 -6.4 0M1014.7 841.8a3.2 3.2 0 1 0 6.4 0a3.2 3.2 0 1 0 -6.4 0M841.5 627.4a3.2 3.2 0 1 0 6.4 0a3.2 3.2 0 1 0 -6.4 0M885.1 822.6a3.2 3.2 0 1 0 6.4 0a3.2 3.2 0 1 0 -6.4 0M950.1 554.0a3.2 3.2 0 1 0 6.4 0a3.2 3.2 0 1 0 -6.4 0M821.4 707.8a3.2 3.2 0 1 0 6.4 0a3.2 3.2 0 1 0 -6.4 0M1074.7 595.7a3.2 3.2 0 1 0 6.4 0a3.2 3.2 0 1 0 -6.4 0M963.6 849.6a3.2 3.2 0 1 0 6.4 0a3.2 3.2 0 1 0 -6.4 0M873.9 587.1a3.2 3.2 0 1 0 6.4 0a3.2 3.2 0 1 0 -6.4 0M847.8 786.7a3.2 3.2 0 1 0 6.4 0a3.2 3.2 0 1 0 -6.4 0M1001.9 555.2a3.2 3.2 0 1 0 6.4 0a3.2 3.2 0 1 0 -6.4 0M1044.7 830.2a3.2 3.2 0 1 0 6.4 0a3.2 3.2 0 1 0 -6.4 0M827.2 656.2a3.2 3.2 0 1 0 6.4 0a3.2 3.2 0 1 0 -6.4 0M1105.3 637.6a3.2 3.2 0 1 0 6.4 0a3.2 3.2 0 1 0 -6.4 0M912.6 839.4a3.2 3.2 0 1 0 6.4 0a3.2 3.2 0 1 0 -6.4 0M918.4 560.2a3.2 3.2 0 1 0 6.4 0a3.2 3.2 0 1 0 -6.4 0M824.9 739.9a3.2 3.2 0 1 0 6.4 0a3.2 3.2 0 1 0 -6.4 0M1050.4 574.3a3.2 3.2 0 1 0 6.4 0a3.2 3.2 0 1 0 -6.4 0M995.9 849.0a3.2 3.2 0 1 0 6.4 0a3.2 3.2 0 1 0 -6.4 0M850.5 609.4a3.2 3.2 0 1 0 6.4 0a3.2 3.2 0 1 0 -6.4 0M868.0 812.1a3.2 3.2 0 1 0 6.4 0a3.2 3.2 0 1 0 -6.4 0M969.8 550.2a3.2 3.2 0 1 0 6.4 0a3.2 3.2 0 1 0 -6.4 0M819.4 687.8a3.2 3.2 0 1 0 6.4 0a3.2 3.2 0 1 0 -6.4 0M1089.7 609.1a3.2 3.2 0 1 0 6.4 0a3.2 3.2 0 1 0 -6.4 0M943.4 849.9a3.2 3.2 0 1 0 6.4 0a3.2 3.2 0 1 0 -6.4 0M888.6 573.3a3.2 3.2 0 1 0 6.4 0a3.2 3.2 0 1 0 -6.4 0M835.3 770.8a3.2 3.2 0 1 0 6.4 0a3.2 3.2 0 1 0 -6.4 0M1021.9 558.5a3.2 3.2 0 1 0 6.4 0a3.2 3.2 0 1 0 -6.4 0M1027.7 841.3a3.2 3.2 0 1 0 6.4 0a3.2 3.2 0 1 0 -6.4 0M832.2 636.6a3.2 3.2 0 1 0 6.4 0a3.2 3.2 0 1 0 -6.4 0M893.5 832.6a3.2 3.2 0 1 0 6.4 0a3.2 3.2 0 1 0 -6.4 0M937.1 552.3a3.2 3.2 0 1 0 6.4 0a3.2 3.2 0 1 0 -6.4 0M818.6 720.6a3.2 3.2 0 1 0 6.4 0a3.2 3.2 0 1 0 -6.4 0M1068.2 584.3a3.2 3.2 0 1 0 6.4 0a3.2 3.2 0 1 0 -6.4 0M976.1 853.6a3.2 3.2 0 1 0 6.4 0a3.2 3.2 0 1 0 -6.4 0M862.0 592.6a3.2 3.2 0 1 0 6.4 0a3.2 3.2 0 1 0 -6.4 0M852.2 799.0a3.2 3.2 0 1 0 6.4 0a3.2 3.2 0 1 0 -6.4 0M990.3 549.2a3.2 3.2 0 1 0 6.4 0a3.2 3.2 0 1 0 -6.4 0M1057.3 826.9a3.2 3.2 0 1 0 6.4 0a3.2 3.2 0 1 0 -6.4 0M820.1 667.3a3.2 3.2 0 1 0 6.4 0a3.2 3.2 0 1 0 -6.4 0M1103.0 624.7a3.2 3.2 0 1 0 6.4 0a3.2 3.2 0 1 0 -6.4 0M923.1 847.4a3.2 3.2 0 1 0 6.4 0a3.2 3.2 0 1 0 -6.4 0M905.3 561.4a3.2 3.2 0 1 0 6.4 0a3.2 3.2 0 1 0 -6.4 0M824.9 753.1a3.2 3.2 0 1 0 6.4 0a3.2 3.2 0 1 0 -6.4 0M1041.5 564.6a3.2 3.2 0 1 0 6.4 0a3.2 3.2 0 1 0 -6.4 0M1009.1 850.1a3.2 3.2 0 1 0 6.4 0a3.2 3.2 0 1 0 -6.4 0M840.0 617.5a3.2 3.2 0 1 0 6.4 0a3.2 3.2 0 1 0 -6.4 0M875.1 823.2a3.2 3.2 0 1 0 6.4 0a3.2 3.2 0 1 0 -6.4 0M957.1 546.8a3.2 3.2 0 1 0 6.4 0a3.2 3.2 0 1 0 -6.4 0M814.9 700.2a3.2 3.2 0 1 0 6.4 0a3.2 3.2 0 1 0 -6.4 0M1084.6 596.9a3.2 3.2 0 1 0 6.4 0a3.2 3.2 0 1 0 -6.4 0M955.4 855.5a3.2 3.2 0 1 0 6.4 0a3.2 3.2 0 1 0 -6.4 0M876.0 577.3a3.2 3.2 0 1 0 6.4 0a3.2 3.2 0 1 0 -6.4 0M838.2 783.8a3.2 3.2 0 1 0 6.4 0a3.2 3.2 0 1 0 -6.4 0M1011.0 551.0a3.2 3.2 0 1 0 6.4 0a3.2 3.2 0 1 0 -6.4 0M1040.9 839.5a3.2 3.2 0 1 0 6.4 0a3.2 3.2 0 1 0 -6.4 0M823.7 646.8a3.2 3.2 0 1 0 6.4 0a3.2 3.2 0 1 0 -6.4 0M1114.2 642.2a3.2 3.2 0 1 0 6.4 0a3.2 3.2 0 1 0 -6.4 0M902.9 842.0a3.2 3.2 0 1 0 6.4 0a3.2 3.2 0 1 0 -6.4 0M923.8 551.8a3.2 3.2 0 1 0 6.4 0a3.2 3.2 0 1 0 -6.4 0M816.9 733.8a3.2 3.2 0 1 0 6.4 0a3.2 3.2 0 1 0 -6.4 0M1060.5 573.4a3.2 3.2 0 1 0 6.4 0a3.2 3.2 0 1 0 -6.4 0M989.1 856.4a3.2 3.2 0 1 0 6.4 0a3.2 3.2 0 1 0 -6.4 0M850.5 599.4a3.2 3.2 0 1 0 6.4 0a3.2 3.2 0 1 0 -6.4 0M858.0 811.1a3.2 3.2 0 1 0 6.4 0a3.2 3.2 0 1 0 -6.4 0M977.9 544.2a3.2 3.2 0 1 0 6.4 0a3.2 3.2 0 1 0 -6.4 0M1069.9 822.2a3.2 3.2 0 1 0 6.4 0a3.2 3.2 0 1 0 -6.4 0M814.0 679.2a3.2 3.2 0 1 0 6.4 0a3.2 3.2 0 1 0 -6.4 0M1099.5 611.8a3.2 3.2 0 1 0 6.4 0a3.2 3.2 0 1 0 -6.4 0M934.4 854.5a3.2 3.2 0 1 0 6.4 0a3.2 3.2 0 1 0 -6.4 0M892.1 563.8a3.2 3.2 0 1 0 6.4 0a3.2 3.2 0 1 0 -6.4 0M826.2 766.5a3.2 3.2 0 1 0 6.4 0a3.2 3.2 0 1 0 -6.4 0M1031.5 555.6a3.2 3.2 0 1 0 6.4 0a3.2 3.2 0 1 0 -6.4 0M1022.5 850.0a3.2 3.2 0 1 0 6.4 0a3.2 3.2 0 1 0 -6.4 0M830.2 626.7a3.2 3.2 0 1 0 6.4 0a3.2 3.2 0 1 0 -6.4 0M883.5 833.8a3.2 3.2 0 1 0 6.4 0a3.2 3.2 0 1 0 -6.4 0M943.8 544.7a3.2 3.2 0 1 0 6.4 0a3.2 3.2 0 1 0 -6.4 0M811.6 713.3a3.2 3.2 0 1 0 6.4 0a3.2 3.2 0 1 0 -6.4 0M1078.3 585.0a3.2 3.2 0 1 0 6.4 0a3.2 3.2 0 1 0 -6.4 0M968.2 859.9a3.2 3.2 0 1 0 6.4 0a3.2 3.2 0 1 0 -6.4 0M863.5 582.6a3.2 3.2 0 1 0 6.4 0a3.2 3.2 0 1 0 -6.4 0M842.4 796.6a3.2 3.2 0 1 0 6.4 0a3.2 3.2 0 1 0 -6.4 0M999.1 544.3a3.2 3.2 0 1 0 6.4 0a3.2 3.2 0 1 0 -6.4 0M1054.1 836.4a3.2 3.2 0 1 0 6.4 0a3.2 3.2 0 1 0 -6.4 0M816.1 658.0a3.2 3.2 0 1 0 6.4 0a3.2 3.2 0 1 0 -6.4 0M1112.3 628.8a3.2 3.2 0 1 0 6.4 0a3.2 3.2 0 1 0 -6.4 0M913.5 850.6a3.2 3.2 0 1 0 6.4 0a3.2 3.2 0 1 0 -6.4 0M910.3 552.6a3.2 3.2 0 1 0 6.4 0a3.2 3.2 0 1 0 -6.4 0M816.5 747.4a3.2 3.2 0 1 0 6.4 0a3.2 3.2 0 1 0 -6.4 0M1051.5 563.1a3.2 3.2 0 1 0 6.4 0a3.2 3.2 0 1 0 -6.4 0M1002.7 858.0a3.2 3.2 0 1 0 6.4 0a3.2 3.2 0 1 0 -6.4 0M839.4 607.4a3.2 3.2 0 1 0 6.4 0a3.2 3.2 0 1 0 -6.4 0M865.0 822.8a3.2 3.2 0 1 0 6.4 0a3.2 3.2 0 1 0 -6.4 0M964.8 540.3a3.2 3.2 0 1 0 6.4 0a3.2 3.2 0 1 0 -6.4 0M1082.2 816.2a3.2 3.2 0 1 0 6.4 0a3.2 3.2 0 1 0 -6.4 0M809.0 691.9a3.2 3.2 0 1 0 6.4 0a3.2 3.2 0 1 0 -6.4 0M1094.6 599.0a3.2 3.2 0 1 0 6.4 0a3.2 3.2 0 1 0 -6.4 0M946.7 860.6a3.2 3.2 0 1 0 6.4 0a3.2 3.2 0 1 0 -6.4 0M879.0 567.6a3.2 3.2 0 1 0 6.4 0a3.2 3.2 0 1 0 -6.4 0M828.8 779.9a3.2 3.2 0 1 0 6.4 0a3.2 3.2 0 1 0 -6.4 0M1020.5 547.5a3.2 3.2 0 1 0 6.4 0a3.2 3.2 0 1 0 -6.4 0M1036.2 848.6a3.2 3.2 0 1 0 6.4 0a3.2 3.2 0 1 0 -6.4 0M821.1 637.0a3.2 3.2 0 1 0 6.4 0a3.2 3.2 0 1 0 -6.4 0M1122.8 647.7a3.2 3.2 0 1 0 6.4 0a3.2 3.2 0 1 0 -6.4 0M892.9 843.7a3.2 3.2 0 1 0 6.4 0a3.2 3.2 0 1 0 -6.4 0M930.0 543.7a3.2 3.2 0 1 0 6.4 0a3.2 3.2 0 1 0 -6.4 0M809.4 726.9a3.2 3.2 0 1 0 6.4 0a3.2 3.2 0 1 0 -6.4 0M1070.6 573.5a3.2 3.2 0 1 0 6.4 0a3.2 3.2 0 1 0 -6.4 0M981.6 863.2a3.2 3.2 0 1 0 6.4 0a3.2 3.2 0 1 0 -6.4 0M851.4 589.3a3.2 3.2 0 1 0 6.4 0a3.2 3.2 0 1 0 -6.4 0M848.0 809.3a3.2 3.2 0 1 0 6.4 0a3.2 3.2 0 1 0 -6.4 0M986.5 538.8a3.2 3.2 0 1 0 6.4 0a3.2 3.2 0 1 0 -6.4 0M1067.2 832.0a3.2 3.2 0 1 0 6.4 0a3.2 3.2 0 1 0 -6.4 0M809.4 670.2a3.2 3.2 0 1 0 6.4 0a3.2 3.2 0 1 0 -6.4 0M1109.0 615.4a3.2 3.2 0 1 0 6.4 0a3.2 3.2 0 1 0 -6.4 0M925.0 858.3a3.2 3.2 0 1 0 6.4 0a3.2 3.2 0 1 0 -6.4 0M896.6 554.7a3.2 3.2 0 1 0 6.4 0a3.2 3.2 0 1 0 -6.4 0M817.4 761.3a3.2 3.2 0 1 0 6.4 0a3.2 3.2 0 1 0 -6.4 0M1041.5 553.6a3.2 3.2 0 1 0 6.4 0a3.2 3.2 0 1 0 -6.4 0M1016.6 858.3a3.2 3.2 0 1 0 6.4 0a3.2 3.2 0 1 0 -6.4 0M829.0 616.6a3.2 3.2 0 1 0 6.4 0a3.2 3.2 0 1 0 -6.4 0M1130.8 668.1a3.2 3.2 0 1 0 6.4 0a3.2 3.2 0 1 0 -6.4 0M873.3 834.1a3.2 3.2 0 1 0 6.4 0a3.2 3.2 0 1 0 -6.4 0M951.1 537.6a3.2 3.2 0 1 0 6.4 0a3.2 3.2 0 1 0 -6.4 0M1094.1 808.9a3.2 3.2 0 1 0 6.4 0a3.2 3.2 0 1 0 -6.4 0M805.2 705.4a3.2 3.2 0 1 0 6.4 0a3.2 3.2 0 1 0 -6.4 0M1088.3 586.5a3.2 3.2 0 1 0 6.4 0a3.2 3.2 0 1 0 -6.4 0M959.7 865.6a3.2 3.2 0 1 0 6.4 0a3.2 3.2 0 1 0 -6.4 0M866.0 572.7a3.2 3.2 0 1 0 6.4 0a3.2 3.2 0 1 0 -6.4 0M832.8 793.3a3.2 3.2 0 1 0 6.4 0a3.2 3.2 0 1 0 -6.4 0M1008.5 540.2a3.2 3.2 0 1 0 6.4 0a3.2 3.2 0 1 0 -6.4 0M1049.9 845.8a3.2 3.2 0 1 0 6.4 0a3.2 3.2 0 1 0 -6.4 0M812.8 648.3a3.2 3.2 0 1 0 6.4 0a3.2 3.2 0 1 0 -6.4 0M1121.2 633.8a3.2 3.2 0 1 0 6.4 0a3.2 3.2 0 1 0 -6.4 0M903.5 852.9a3.2 3.2 0 1 0 6.4 0a3.2 3.2 0 1 0 -6.4 0M916.0 544.1a3.2 3.2 0 1 0 6.4 0a3.2 3.2 0 1 0 -6.4 0M808.6 740.9a3.2 3.2 0 1 0 6.4 0a3.2 3.2 0 1 0 -6.4 0M1061.8 562.6a3.2 3.2 0 1 0 6.4 0a3.2 3.2 0 1 0 -6.4 0M995.5 865.3a3.2 3.2 0 1 0 6.4 0a3.2 3.2 0 1 0 -6.4 0M839.8 597.2a3.2 3.2 0 1 0 6.4 0a3.2 3.2 0 1 0 -6.4 0M854.8 821.6a3.2 3.2 0 1 0 6.4 0a3.2 3.2 0 1 0 -6.4 0M973.1 534.3a3.2 3.2 0 1 0 6.4 0a3.2 3.2 0 1 0 -6.4 0M1080.0 826.2a3.2 3.2 0 1 0 6.4 0a3.2 3.2 0 1 0 -6.4 0M803.8 683.1a3.2 3.2 0 1 0 6.4 0a3.2 3.2 0 1 0 -6.4 0M1104.3 602.0a3.2 3.2 0 1 0 6.4 0a3.2 3.2 0 1 0 -6.4 0M937.4 865.0a3.2 3.2 0 1 0 6.4 0a3.2 3.2 0 1 0 -6.4 0M882.8 558.1a3.2 3.2 0 1 0 6.4 0a3.2 3.2 0 1 0 -6.4 0M819.7 775.2a3.2 3.2 0 1 0 6.4 0a3.2 3.2 0 1 0 -6.4 0M1030.4 544.8a3.2 3.2 0 1 0 6.4 0a3.2 3.2 0 1 0 -6.4 0M1030.7 857.2a3.2 3.2 0 1 0 6.4 0a3.2 3.2 0 1 0 -6.4 0M819.3 626.9a3.2 3.2 0 1 0 6.4 0a3.2 3.2 0 1 0 -6.4 0M1130.9 653.9a3.2 3.2 0 1 0 6.4 0a3.2 3.2 0 1 0 -6.4 0M882.7 844.6a3.2 3.2 0 1 0 6.4 0a3.2 3.2 0 1 0 -6.4 0M937.0 536.1a3.2 3.2 0 1 0 6.4 0a3.2 3.2 0 1 0 -6.4 0M1105.5 800.4a3.2 3.2 0 1 0 6.4 0a3.2 3.2 0 1 0 -6.4 0M802.5 719.3a3.2 3.2 0 1 0 6.4 0a3.2 3.2 0 1 0 -6.4 0M1080.9 574.4a3.2 3.2 0 1 0 6.4 0a3.2 3.2 0 1 0 -6.4 0M973.4 869.5a3.2 3.2 0 1 0 6.4 0a3.2 3.2 0 1 0 -6.4 0M853.3 579.2a3.2 3.2 0 1 0 6.4 0a3.2 3.2 0 1 0 -6.4 0M838.1 806.6a3.2 3.2 0 1 0 6.4 0a3.2 3.2 0 1 0 -6.4 0M995.6 534.1a3.2 3.2 0 1 0 6.4 0a3.2 3.2 0 1 0 -6.4 0M1063.6 841.6a3.2 3.2 0 1 0 6.4 0a3.2 3.2 0 1 0 -6.4 0M805.6 660.6a3.2 3.2 0 1 0 6.4 0a3.2 3.2 0 1 0 -6.4 0M1118.3 619.8a3.2 3.2 0 1 0 6.4 0a3.2 3.2 0 1 0 -6.4 0M915.1 861.3a3.2 3.2 0 1 0 6.4 0a3.2 3.2 0 1 0 -6.4 0M901.8 545.8a3.2 3.2 0 1 0 6.4 0a3.2 3.2 0 1 0 -6.4 0M809.1 755.2a3.2 3.2 0 1 0 6.4 0a3.2 3.2 0 1 0 -6.4 0M1051.7 552.3a3.2 3.2 0 1 0 6.4 0a3.2 3.2 0 1 0 -6.4 0M1009.8 866.1a3.2 3.2 0 1 0 6.4 0a3.2 3.2 0 1 0 -6.4 0M828.7 606.3a3.2 3.2 0 1 0 6.4 0a3.2 3.2 0 1 0 -6.4 0M1137.9 675.5a3.2 3.2 0 1 0 6.4 0a3.2 3.2 0 1 0 -6.4 0M863.0 833.5a3.2 3.2 0 1 0 6.4 0a3.2 3.2 0 1 0 -6.4 0M959.1 531.1a3.2 3.2 0 1 0 6.4 0a3.2 3.2 0 1 0 -6.4 0M1092.6 819.2a3.2 3.2 0 1 0 6.4 0a3.2 3.2 0 1 0 -6.4 0M799.4 696.8a3.2 3.2 0 1 0 6.4 0a3.2 3.2 0 1 0 -6.4 0M1098.4 588.9a3.2 3.2 0 1 0 6.4 0a3.2 3.2 0 1 0 -6.4 0M950.7 870.6a3.2 3.2 0 1 0 6.4 0a3.2 3.2 0 1 0 -6.4 0M869.3 562.9a3.2 3.2 0 1 0 6.4 0a3.2 3.2 0 1 0 -6.4 0M823.3 789.2a3.2 3.2 0 1 0 6.4 0a3.2 3.2 0 1 0 -6.4 0M1018.3 536.9a3.2 3.2 0 1 0 6.4 0a3.2 3.2 0 1 0 -6.4 0M1044.9 854.8a3.2 3.2 0 1 0 6.4 0a3.2 3.2 0 1 0 -6.4 0M810.4 638.3a3.2 3.2 0 1 0 6.4 0a3.2 3.2 0 1 0 -6.4 0M1129.8 639.5a3.2 3.2 0 1 0 6.4 0a3.2 3.2 0 1 0 -6.4 0M893.3 854.5a3.2 3.2 0 1 0 6.4 0a3.2 3.2 0 1 0 -6.4 0M922.5 536.0a3.2 3.2 0 1 0 6.4 0a3.2 3.2 0 1 0 -6.4 0M1116.2 790.7a3.2 3.2 0 1 0 6.4 0a3.2 3.2 0 1 0 -6.4 0M801.1 733.7a3.2 3.2 0 1 0 6.4 0a3.2 3.2 0 1 0 -6.4 0M1072.1 562.8a3.2 3.2 0 1 0 6.4 0a3.2 3.2 0 1 0 -6.4 0M987.7 872.1a3.2 3.2 0 1 0 6.4 0a3.2 3.2 0 1 0 -6.4 0M841.0 586.9a3.2 3.2 0 1 0 6.4 0a3.2 3.2 0 1 0 -6.4 0M844.7 819.5a3.2 3.2 0 1 0 6.4 0a3.2 3.2 0 1 0 -6.4 0M982.0 529.0a3.2 3.2 0 1 0 6.4 0a3.2 3.2 0 1 0 -6.4 0M1077.0 836.2a3.2 3.2 0 1 0 6.4 0a3.2 3.2 0 1 0 -6.4 0M799.3 673.8a3.2 3.2 0 1 0 6.4 0a3.2 3.2 0 1 0 -6.4 0M1114.0 605.9a3.2 3.2 0 1 0 6.4 0a3.2 3.2 0 1 0 -6.4 0M927.7 868.6a3.2 3.2 0 1 0 6.4 0a3.2 3.2 0 1 0 -6.4 0M887.5 548.9a3.2 3.2 0 1 0 6.4 0a3.2 3.2 0 1 0 -6.4 0M810.9 769.7a3.2 3.2 0 1 0 6.4 0a3.2 3.2 0 1 0 -6.4 0M1040.6 542.9a3.2 3.2 0 1 0 6.4 0a3.2 3.2 0 1 0 -6.4 0M1024.4 865.5a3.2 3.2 0 1 0 6.4 0a3.2 3.2 0 1 0 -6.4 0M818.3 616.5a3.2 3.2 0 1 0 6.4 0a3.2 3.2 0 1 0 -6.4 0M1138.7 660.9a3.2 3.2 0 1 0 6.4 0a3.2 3.2 0 1 0 -6.4 0M872.3 844.7a3.2 3.2 0 1 0 6.4 0a3.2 3.2 0 1 0 -6.4 0M944.6 529.1a3.2 3.2 0 1 0 6.4 0a3.2 3.2 0 1 0 -6.4 0M1104.6 810.8a3.2 3.2 0 1 0 6.4 0a3.2 3.2 0 1 0 -6.4 0M796.1 711.1a3.2 3.2 0 1 0 6.4 0a3.2 3.2 0 1 0 -6.4 0M1091.1 576.2a3.2 3.2 0 1 0 6.4 0a3.2 3.2 0 1 0 -6.4 0M964.7 875.1a3.2 3.2 0 1 0 6.4 0a3.2 3.2 0 1 0 -6.4 0M855.9 569.1a3.2 3.2 0 1 0 6.4 0a3.2 3.2 0 1 0 -6.4 0M828.3 803.0a3.2 3.2 0 1 0 6.4 0a3.2 3.2 0 1 0 -6.4 0M1005.3 530.1a3.2 3.2 0 1 0 6.4 0a3.2 3.2 0 1 0 -6.4 0M1059.2 851.1a3.2 3.2 0 1 0 6.4 0a3.2 3.2 0 1 0 -6.4 0M802.4 650.7a3.2 3.2 0 1 0 6.4 0a3.2 3.2 0 1 0 -6.4 0M1127.3 625.0a3.2 3.2 0 1 0 6.4 0a3.2 3.2 0 1 0 -6.4 0M905.0 863.5a3.2 3.2 0 1 0 6.4 0a3.2 3.2 0 1 0 -6.4 0M907.8 537.3a3.2 3.2 0 1 0 6.4 0a3.2 3.2 0 1 0 -6.4 0M801.1 748.5a3.2 3.2 0 1 0 6.4 0a3.2 3.2 0 1 0 -6.4 0M1062.2 551.9a3.2 3.2 0 1 0 6.4 0a3.2 3.2 0 1 0 -6.4 0M1002.4 873.4a3.2 3.2 0 1 0 6.4 0a3.2 3.2 0 1 0 -6.4 0M829.2 595.8a3.2 3.2 0 1 0 6.4 0a3.2 3.2 0 1 0 -6.4 0M1144.6 683.6a3.2 3.2 0 1 0 6.4 0a3.2 3.2 0 1 0 -6.4 0M852.6 832.0a3.2 3.2 0 1 0 6.4 0a3.2 3.2 0 1 0 -6.4 0M967.7 525.1a3.2 3.2 0 1 0 6.4 0a3.2 3.2 0 1 0 -6.4 0M1090.2 829.3a3.2 3.2 0 1 0 6.4 0a3.2 3.2 0 1 0 -6.4 0M794.2 687.7a3.2 3.2 0 1 0 6.4 0a3.2 3.2 0 1 0 -6.4 0M1108.3 592.2a3.2 3.2 0 1 0 6.4 0a3.2 3.2 0 1 0 -6.4 0M941.1 874.9a3.2 3.2 0 1 0 6.4 0a3.2 3.2 0 1 0 -6.4 0M873.4 553.3a3.2 3.2 0 1 0 6.4 0a3.2 3.2 0 1 0 -6.4 0M814.1 784.2a3.2 3.2 0 1 0 6.4 0a3.2 3.2 0 1 0 -6.4 0M1028.4 534.4a3.2 3.2 0 1 0 6.4 0a3.2 3.2 0 1 0 -6.4 0M1039.2 863.6a3.2 3.2 0 1 0 6.4 0a3.2 3.2 0 1 0 -6.4 0M808.7 627.9a3.2 3.2 0 1 0 6.4 0a3.2 3.2 0 1 0 -6.4 0M1138.0 646.1a3.2 3.2 0 1 0 6.4 0a3.2 3.2 0 1 0 -6.4 0M882.8 855.2a3.2 3.2 0 1 0 6.4 0a3.2 3.2 0 1 0 -6.4 0M929.7 528.4a3.2 3.2 0 1 0 6.4 0a3.2 3.2 0 1 0 -6.4 0M1116.0 801.2a3.2 3.2 0 1 0 6.4 0a3.2 3.2 0 1 0 -6.4 0M794.2 725.9a3.2 3.2 0 1 0 6.4 0a3.2 3.2 0 1 0 -6.4 0M1082.6 564.0a3.2 3.2 0 1 0 6.4 0a3.2 3.2 0 1 0 -6.4 0M979.2 878.3a3.2 3.2 0 1 0 6.4 0a3.2 3.2 0 1 0 -6.4 0M843.0 576.6a3.2 3.2 0 1 0 6.4 0a3.2 3.2 0 1 0 -6.4 0M834.6 816.6a3.2 3.2 0 1 0 6.4 0a3.2 3.2 0 1 0 -6.4 0M991.4 524.4a3.2 3.2 0 1 0 6.4 0a3.2 3.2 0 1 0 -6.4 0M1073.2 845.9a3.2 3.2 0 1 0 6.4 0a3.2 3.2 0 1 0 -6.4 0M795.5 664.0a3.2 3.2 0 1 0 6.4 0a3.2 3.2 0 1 0 -6.4 0M1123.4 610.6a3.2 3.2 0 1 0 6.4 0a3.2 3.2 0 1 0 -6.4 0M917.6 871.5a3.2 3.2 0 1 0 6.4 0a3.2 3.2 0 1 0 -6.4 0M893.1 539.9a3.2 3.2 0 1 0 6.4 0a3.2 3.2 0 1 0 -6.4 0M802.4 763.4a3.2 3.2 0 1 0 6.4 0a3.2 3.2 0 1 0 -6.4 0M1051.1 541.8a3.2 3.2 0 1 0 6.4 0a3.2 3.2 0 1 0 -6.4 0M1017.4 873.4a3.2 3.2 0 1 0 6.4 0a3.2 3.2 0 1 0 -6.4 0M818.2 606.0a3.2 3.2 0 1 0 6.4 0a3.2 3.2 0 1 0 -6.4 0M1145.9 668.6a3.2 3.2 0 1 0 6.4 0a3.2 3.2 0 1 0 -6.4 0M861.8 843.9a3.2 3.2 0 1 0 6.4 0a3.2 3.2 0 1 0 -6.4 0M952.9 522.6a3.2 3.2 0 1 0 6.4 0a3.2 3.2 0 1 0 -6.4 0M1102.9 821.2a3.2 3.2 0 1 0 6.4 0a3.2 3.2 0 1 0 -6.4 0M790.4 702.2a3.2 3.2 0 1 0 6.4 0a3.2 3.2 0 1 0 -6.4 0M1101.3 578.8a3.2 3.2 0 1 0 6.4 0a3.2 3.2 0 1 0 -6.4 0M955.3 880.0a3.2 3.2 0 1 0 6.4 0a3.2 3.2 0 1 0 -6.4 0M859.5 559.1a3.2 3.2 0 1 0 6.4 0a3.2 3.2 0 1 0 -6.4 0M818.7 798.6a3.2 3.2 0 1 0 6.4 0a3.2 3.2 0 1 0 -6.4 0M1015.3 526.8a3.2 3.2 0 1 0 6.4 0a3.2 3.2 0 1 0 -6.4 0M1053.9 860.3a3.2 3.2 0 1 0 6.4 0a3.2 3.2 0 1 0 -6.4 0M800.1 640.4a3.2 3.2 0 1 0 6.4 0a3.2 3.2 0 1 0 -6.4 0M1136.0 631.1a3.2 3.2 0 1 0 6.4 0a3.2 3.2 0 1 0 -6.4 0M894.5 864.9a3.2 3.2 0 1 0 6.4 0a3.2 3.2 0 1 0 -6.4 0M914.6 529.1a3.2 3.2 0 1 0 6.4 0a3.2 3.2 0 1 0 -6.4 0M1126.7 790.5a3.2 3.2 0 1 0 6.4 0a3.2 3.2 0 1 0 -6.4 0M793.6 741.0a3.2 3.2 0 1 0 6.4 0a3.2 3.2 0 1 0 -6.4 0M1072.8 552.4a3.2 3.2 0 1 0 6.4 0a3.2 3.2 0 1 0 -6.4 0M994.3 880.2a3.2 3.2 0 1 0 6.4 0a3.2 3.2 0 1 0 -6.4 0M830.6 585.3a3.2 3.2 0 1 0 6.4 0a3.2 3.2 0 1 0 -6.4 0M1150.7 692.3a3.2 3.2 0 1 0 6.4 0a3.2 3.2 0 1 0 -6.4 0M842.3 829.7a3.2 3.2 0 1 0 6.4 0a3.2 3.2 0 1 0 -6.4 0M976.9 519.9a3.2 3.2 0 1 0 6.4 0a3.2 3.2 0 1 0 -6.4 0M1087.0 839.5a3.2 3.2 0 1 0 6.4 0a3.2 3.2 0 1 0 -6.4 0M789.8 678.0a3.2 3.2 0 1 0 6.4 0a3.2 3.2 0 1 0 -6.4 0M1118.1 596.3a3.2 3.2 0 1 0 6.4 0a3.2 3.2 0 1 0 -6.4 0M931.2 878.5a3.2 3.2 0 1 0 6.4 0a3.2 3.2 0 1 0 -6.4 0M878.3 543.9a3.2 3.2 0 1 0 6.4 0a3.2 3.2 0 1 0 -6.4 0M1143.4 755.1a3.2 3.2 0 1 0 6.4 0a3.2 3.2 0 1 0 -6.4 0M805.1 778.5a3.2 3.2 0 1 0 6.4 0a3.2 3.2 0 1 0 -6.4 0M1038.9 532.6a3.2 3.2 0 1 0 6.4 0a3.2 3.2 0 1 0 -6.4 0M1032.6 872.0a3.2 3.2 0 1 0 6.4 0a3.2 3.2 0 1 0 -6.4 0M807.9 617.3a3.2 3.2 0 1 0 6.4 0a3.2 3.2 0 1 0 -6.4 0M1145.8 653.3a3.2 3.2 0 1 0 6.4 0a3.2 3.2 0 1 0 -6.4 0M872.2 855.1a3.2 3.2 0 1 0 6.4 0a3.2 3.2 0 1 0 -6.4 0M937.6 521.3a3.2 3.2 0 1 0 6.4 0a3.2 3.2 0 1 0 -6.4 0M1115.0 811.8a3.2 3.2 0 1 0 6.4 0a3.2 3.2 0 1 0 -6.4 0M787.8 717.3a3.2 3.2 0 1 0 6.4 0a3.2 3.2 0 1 0 -6.4 0M1093.0 565.9a3.2 3.2 0 1 0 6.4 0a3.2 3.2 0 1 0 -6.4 0M970.2 883.9a3.2 3.2 0 1 0 6.4 0a3.2 3.2 0 1 0 -6.4 0M845.9 566.3a3.2 3.2 0 1 0 6.4 0a3.2 3.2 0 1 0 -6.4 0M1152.2 716.6a3.2 3.2 0 1 0 6.4 0a3.2 3.2 0 1 0 -6.4 0M824.6 812.8a3.2 3.2 0 1 0 6.4 0a3.2 3.2 0 1 0 -6.4 0M1001.4 520.4a3.2 3.2 0 1 0 6.4 0a3.2 3.2 0 1 0 -6.4 0M1068.6 855.5a3.2 3.2 0 1 0 6.4 0a3.2 3.2 0 1 0 -6.4 0M792.5 653.7a3.2 3.2 0 1 0 6.4 0a3.2 3.2 0 1 0 -6.4 0M1132.6 616.0a3.2 3.2 0 1 0 6.4 0a3.2 3.2 0 1 0 -6.4 0M907.1 873.7a3.2 3.2 0 1 0 6.4 0a3.2 3.2 0 1 0 -6.4 0M899.3 531.3a3.2 3.2 0 1 0 6.4 0a3.2 3.2 0 1 0 -6.4 0M1136.5 778.6a3.2 3.2 0 1 0 6.4 0a3.2 3.2 0 1 0 -6.4 0M794.4 756.4a3.2 3.2 0 1 0 6.4 0a3.2 3.2 0 1 0 -6.4 0M1061.8 541.5a3.2 3.2 0 1 0 6.4 0a3.2 3.2 0 1 0 -6.4 0M1009.7 880.8a3.2 3.2 0 1 0 6.4 0a3.2 3.2 0 1 0 -6.4 0M818.8 595.3a3.2 3.2 0 1 0 6.4 0a3.2 3.2 0 1 0 -6.4 0M1152.6 676.9a3.2 3.2 0 1 0 6.4 0a3.2 3.2 0 1 0 -6.4 0M851.2 842.3a3.2 3.2 0 1 0 6.4 0a3.2 3.2 0 1 0 -6.4 0M961.8 516.6a3.2 3.2 0 1 0 6.4 0a3.2 3.2 0 1 0 -6.4 0M1100.3 831.6a3.2 3.2 0 1 0 6.4 0a3.2 3.2 0 1 0 -6.4 0M785.2 692.8a3.2 3.2 0 1 0 6.4 0a3.2 3.2 0 1 0 -6.4 0M1111.5 582.3a3.2 3.2 0 1 0 6.4 0a3.2 3.2 0 1 0 -6.4 0M945.5 884.3a3.2 3.2 0 1 0 6.4 0a3.2 3.2 0 1 0 -6.4 0M863.8 549.3a3.2 3.2 0 1 0 6.4 0a3.2 3.2 0 1 0 -6.4 0M1150.5 741.3a3.2 3.2 0 1 0 6.4 0a3.2 3.2 0 1 0 -6.4 0M809.3 793.4a3.2 3.2 0 1 0 6.4 0a3.2 3.2 0 1 0 -6.4 0M1025.8 524.3a3.2 3.2 0 1 0 6.4 0a3.2 3.2 0 1 0 -6.4 0M1047.9 869.2a3.2 3.2 0 1 0 6.4 0a3.2 3.2 0 1 0 -6.4 0M798.5 629.7a3.2 3.2 0 1 0 6.4 0a3.2 3.2 0 1 0 -6.4 0M1144.3 637.8a3.2 3.2 0 1 0 6.4 0a3.2 3.2 0 1 0 -6.4 0M883.7 865.5a3.2 3.2 0 1 0 6.4 0a3.2 3.2 0 1 0 -6.4 0M922.1 521.4a3.2 3.2 0 1 0 6.4 0a3.2 3.2 0 1 0 -6.4 0M1126.4 801.2a3.2 3.2 0 1 0 6.4 0a3.2 3.2 0 1 0 -6.4 0M786.6 732.9a3.2 3.2 0 1 0 6.4 0a3.2 3.2 0 1 0 -6.4 0M1083.4 553.7a3.2 3.2 0 1 0 6.4 0a3.2 3.2 0 1 0 -6.4 0M985.5 886.5a3.2 3.2 0 1 0 6.4 0a3.2 3.2 0 1 0 -6.4 0M832.8 574.8a3.2 3.2 0 1 0 6.4 0a3.2 3.2 0 1 0 -6.4 0M1156.2 701.5a3.2 3.2 0 1 0 6.4 0a3.2 3.2 0 1 0 -6.4 0M832.0 826.6a3.2 3.2 0 1 0 6.4 0a3.2 3.2 0 1 0 -6.4 0M986.6 515.2a3.2 3.2 0 1 0 6.4 0a3.2 3.2 0 1 0 -6.4 0M1082.9 849.4a3.2 3.2 0 1 0 6.4 0a3.2 3.2 0 1 0 -6.4 0M786.0 668.0a3.2 3.2 0 1 0 6.4 0a3.2 3.2 0 1 0 -6.4 0M1127.7 601.2a3.2 3.2 0 1 0 6.4 0a3.2 3.2 0 1 0 -6.4 0M920.8 881.4a3.2 3.2 0 1 0 6.4 0a3.2 3.2 0 1 0 -6.4 0M884.1 534.8a3.2 3.2 0 1 0 6.4 0a3.2 3.2 0 1 0 -6.4 0M1145.4 765.7a3.2 3.2 0 1 0 6.4 0a3.2 3.2 0 1 0 -6.4 0M796.6 771.9a3.2 3.2 0 1 0 6.4 0a3.2 3.2 0 1 0 -6.4 0M1049.7 531.6a3.2 3.2 0 1 0 6.4 0a3.2 3.2 0 1 0 -6.4 0M1025.4 880.0a3.2 3.2 0 1 0 6.4 0a3.2 3.2 0 1 0 -6.4 0M807.9 606.5a3.2 3.2 0 1 0 6.4 0a3.2 3.2 0 1 0 -6.4 0M1153.1 661.2a3.2 3.2 0 1 0 6.4 0a3.2 3.2 0 1 0 -6.4 0M861.4 854.2a3.2 3.2 0 1 0 6.4 0a3.2 3.2 0 1 0 -6.4 0M946.2 514.7a3.2 3.2 0 1 0 6.4 0a3.2 3.2 0 1 0 -6.4 0M1113.1 822.5a3.2 3.2 0 1 0 6.4 0a3.2 3.2 0 1 0 -6.4 0M782.0 708.2a3.2 3.2 0 1 0 6.4 0a3.2 3.2 0 1 0 -6.4 0M1103.5 568.7a3.2 3.2 0 1 0 6.4 0a3.2 3.2 0 1 0 -6.4 0M960.6 888.9a3.2 3.2 0 1 0 6.4 0a3.2 3.2 0 1 0 -6.4 0M849.6 556.1a3.2 3.2 0 1 0 6.4 0a3.2 3.2 0 1 0 -6.4 0M1156.4 726.6a3.2 3.2 0 1 0 6.4 0a3.2 3.2 0 1 0 -6.4 0M814.8 808.2a3.2 3.2 0 1 0 6.4 0a3.2 3.2 0 1 0 -6.4 0M1011.7 517.2a3.2 3.2 0 1 0 6.4 0a3.2 3.2 0 1 0 -6.4 0M1063.1 864.9a3.2 3.2 0 1 0 6.4 0a3.2 3.2 0 1 0 -6.4 0M790.2 643.1a3.2 3.2 0 1 0 6.4 0a3.2 3.2 0 1 0 -6.4 0M1141.4 622.3a3.2 3.2 0 1 0 6.4 0a3.2 3.2 0 1 0 -6.4 0M896.4 875.0a3.2 3.2 0 1 0 6.4 0a3.2 3.2 0 1 0 -6.4 0M906.3 523.0a3.2 3.2 0 1 0 6.4 0a3.2 3.2 0 1 0 -6.4 0M1136.9 789.4a3.2 3.2 0 1 0 6.4 0a3.2 3.2 0 1 0 -6.4 0M786.7 748.7a3.2 3.2 0 1 0 6.4 0a3.2 3.2 0 1 0 -6.4 0M1072.6 542.1a3.2 3.2 0 1 0 6.4 0a3.2 3.2 0 1 0 -6.4 0M1001.3 887.7a3.2 3.2 0 1 0 6.4 0a3.2 3.2 0 1 0 -6.4 0M820.4 584.6a3.2 3.2 0 1 0 6.4 0a3.2 3.2 0 1 0 -6.4 0M1158.7 685.9a3.2 3.2 0 1 0 6.4 0a3.2 3.2 0 1 0 -6.4 0M840.6 839.8a3.2 3.2 0 1 0 6.4 0a3.2 3.2 0 1 0 -6.4 0M971.3 511.3a3.2 3.2 0 1 0 6.4 0a3.2 3.2 0 1 0 -6.4 0M1096.9 842.0a3.2 3.2 0 1 0 6.4 0a3.2 3.2 0 1 0 -6.4 0M780.8 682.9a3.2 3.2 0 1 0 6.4 0a3.2 3.2 0 1 0 -6.4 0M1121.5 586.6a3.2 3.2 0 1 0 6.4 0a3.2 3.2 0 1 0 -6.4 0M935.2 887.9a3.2 3.2 0 1 0 6.4 0a3.2 3.2 0 1 0 -6.4 0M869.0 539.7a3.2 3.2 0 1 0 6.4 0a3.2 3.2 0 1 0 -6.4 0M1153.2 751.8a3.2 3.2 0 1 0 6.4 0a3.2 3.2 0 1 0 -6.4 0M800.2 787.4a3.2 3.2 0 1 0 6.4 0a3.2 3.2 0 1 0 -6.4 0M1036.5 522.6a3.2 3.2 0 1 0 6.4 0a3.2 3.2 0 1 0 -6.4 0M1041.1 877.7a3.2 3.2 0 1 0 6.4 0a3.2 3.2 0 1 0 -6.4 0M797.8 618.9a3.2 3.2 0 1 0 6.4 0a3.2 3.2 0 1 0 -6.4 0M1152.2 645.3a3.2 3.2 0 1 0 6.4 0a3.2 3.2 0 1 0 -6.4 0M872.8 865.4a3.2 3.2 0 1 0 6.4 0a3.2 3.2 0 1 0 -6.4 0M930.2 514.2a3.2 3.2 0 1 0 6.4 0a3.2 3.2 0 1 0 -6.4 0M1125.2 812.1a3.2 3.2 0 1 0 6.4 0a3.2 3.2 0 1 0 -6.4 0M780.1 724.1a3.2 3.2 0 1 0 6.4 0a3.2 3.2 0 1 0 -6.4 0M1094.1 555.8a3.2 3.2 0 1 0 6.4 0a3.2 3.2 0 1 0 -6.4 0M976.2 892.2a3.2 3.2 0 1 0 6.4 0a3.2 3.2 0 1 0 -6.4 0M835.9 564.3a3.2 3.2 0 1 0 6.4 0a3.2 3.2 0 1 0 -6.4 0M1161.0 711.3a3.2 3.2 0 1 0 6.4 0a3.2 3.2 0 1 0 -6.4 0M821.8 822.6a3.2 3.2 0 1 0 6.4 0a3.2 3.2 0 1 0 -6.4 0M996.8 511.3a3.2 3.2 0 1 0 6.4 0a3.2 3.2 0 1 0 -6.4 0M1078.1 859.2a3.2 3.2 0 1 0 6.4 0a3.2 3.2 0 1 0 -6.4 0M783.0 657.4a3.2 3.2 0 1 0 6.4 0a3.2 3.2 0 1 0 -6.4 0M1137.1 606.9a3.2 3.2 0 1 0 6.4 0a3.2 3.2 0 1 0 -6.4 0M910.0 883.5a3.2 3.2 0 1 0 6.4 0a3.2 3.2 0 1 0 -6.4 0M890.6 526.0a3.2 3.2 0 1 0 6.4 0a3.2 3.2 0 1 0 -6.4 0M1146.5 776.6a3.2 3.2 0 1 0 6.4 0a3.2 3.2 0 1 0 -6.4 0M788.3 764.7a3.2 3.2 0 1 0 6.4 0a3.2 3.2 0 1 0 -6.4 0M1060.6 531.4a3.2 3.2 0 1 0 6.4 0a3.2 3.2 0 1 0 -6.4 0M1017.4 887.5a3.2 3.2 0 1 0 6.4 0a3.2 3.2 0 1 0 -6.4 0M808.6 595.6a3.2 3.2 0 1 0 6.4 0a3.2 3.2 0 1 0 -6.4 0M1159.9 669.8a3.2 3.2 0 1 0 6.4 0a3.2 3.2 0 1 0 -6.4 0M850.6 852.5a3.2 3.2 0 1 0 6.4 0a3.2 3.2 0 1 0 -6.4 0M955.4 508.7a3.2 3.2 0 1 0 6.4 0a3.2 3.2 0 1 0 -6.4 0M1110.4 833.1a3.2 3.2 0 1 0 6.4 0a3.2 3.2 0 1 0 -6.4 0M776.8 698.6a3.2 3.2 0 1 0 6.4 0a3.2 3.2 0 1 0 -6.4 0M1113.8 572.4a3.2 3.2 0 1 0 6.4 0a3.2 3.2 0 1 0 -6.4 0M950.5 893.2a3.2 3.2 0 1 0 6.4 0a3.2 3.2 0 1 0 -6.4 0M854.1 546.1a3.2 3.2 0 1 0 6.4 0a3.2 3.2 0 1 0 -6.4 0M1159.8 737.1a3.2 3.2 0 1 0 6.4 0a3.2 3.2 0 1 0 -6.4 0M805.2 802.8a3.2 3.2 0 1 0 6.4 0a3.2 3.2 0 1 0 -6.4 0M1022.4 514.7a3.2 3.2 0 1 0 6.4 0a3.2 3.2 0 1 0 -6.4 0M1056.9 874.0a3.2 3.2 0 1 0 6.4 0a3.2 3.2 0 1 0 -6.4 0M788.6 632.2a3.2 3.2 0 1 0 6.4 0a3.2 3.2 0 1 0 -6.4 0M1149.9 629.3a3.2 3.2 0 1 0 6.4 0a3.2 3.2 0 1 0 -6.4 0M885.4 875.6a3.2 3.2 0 1 0 6.4 0a3.2 3.2 0 1 0 -6.4 0M914.1 515.1a3.2 3.2 0 1 0 6.4 0a3.2 3.2 0 1 0 -6.4 0M1136.5 800.4a3.2 3.2 0 1 0 6.4 0a3.2 3.2 0 1 0 -6.4 0M779.6 740.3a3.2 3.2 0 1 0 6.4 0a3.2 3.2 0 1 0 -6.4 0M1083.5 543.5a3.2 3.2 0 1 0 6.4 0a3.2 3.2 0 1 0 -6.4 0M992.4 894.1a3.2 3.2 0 1 0 6.4 0a3.2 3.2 0 1 0 -6.4 0M822.7 573.8a3.2 3.2 0 1 0 6.4 0a3.2 3.2 0 1 0 -6.4 0M1164.3 695.4a3.2 3.2 0 1 0 6.4 0a3.2 3.2 0 1 0 -6.4 0M830.1 836.6a3.2 3.2 0 1 0 6.4 0a3.2 3.2 0 1 0 -6.4 0M981.2 506.6a3.2 3.2 0 1 0 6.4 0a3.2 3.2 0 1 0 -6.4 0M1092.7 852.2a3.2 3.2 0 1 0 6.4 0a3.2 3.2 0 1 0 -6.4 0M776.9 672.6a3.2 3.2 0 1 0 6.4 0a3.2 3.2 0 1 0 -6.4 0M1131.3 591.6a3.2 3.2 0 1 0 6.4 0a3.2 3.2 0 1 0 -6.4 0M924.6 890.8a3.2 3.2 0 1 0 6.4 0a3.2 3.2 0 1 0 -6.4 0M874.9 530.4a3.2 3.2 0 1 0 6.4 0a3.2 3.2 0 1 0 -6.4 0M1155.1 762.7a3.2 3.2 0 1 0 6.4 0a3.2 3.2 0 1 0 -6.4 0M791.4 780.7a3.2 3.2 0 1 0 6.4 0a3.2 3.2 0 1 0 -6.4 0M1047.5 521.6a3.2 3.2 0 1 0 6.4 0a3.2 3.2 0 1 0 -6.4 0M1033.7 885.8a3.2 3.2 0 1 0 6.4 0a3.2 3.2 0 1 0 -6.4 0M797.8 607.8a3.2 3.2 0 1 0 6.4 0a3.2 3.2 0 1 0 -6.4 0M1159.7 653.5a3.2 3.2 0 1 0 6.4 0a3.2 3.2 0 1 0 -6.4 0M861.8 864.4a3.2 3.2 0 1 0 6.4 0a3.2 3.2 0 1 0 -6.4 0M939.1 507.5a3.2 3.2 0 1 0 6.4 0a3.2 3.2 0 1 0 -6.4 0M1123.3 823.0a3.2 3.2 0 1 0 6.4 0a3.2 3.2 0 1 0 -6.4 0M774.2 714.7a3.2 3.2 0 1 0 6.4 0a3.2 3.2 0 1 0 -6.4 0M1104.8 558.7a3.2 3.2 0 1 0 6.4 0a3.2 3.2 0 1 0 -6.4 0M966.4 897.3a3.2 3.2 0 1 0 6.4 0a3.2 3.2 0 1 0 -6.4 0M839.7 553.9a3.2 3.2 0 1 0 6.4 0a3.2 3.2 0 1 0 -6.4 0M1165.2 721.6a3.2 3.2 0 1 0 6.4 0a3.2 3.2 0 1 0 -6.4 0M811.7 817.8a3.2 3.2 0 1 0 6.4 0a3.2 3.2 0 1 0 -6.4 0M1007.4 508.0a3.2 3.2 0 1 0 6.4 0a3.2 3.2 0 1 0 -6.4 0M1072.5 868.8a3.2 3.2 0 1 0 6.4 0a3.2 3.2 0 1 0 -6.4 0M780.6 646.6a3.2 3.2 0 1 0 6.4 0a3.2 3.2 0 1 0 -6.4 0M1146.1 613.3a3.2 3.2 0 1 0 6.4 0a3.2 3.2 0 1 0 -6.4 0M899.0 884.8a3.2 3.2 0 1 0 6.4 0a3.2 3.2 0 1 0 -6.4 0M897.8 517.5a3.2 3.2 0 1 0 6.4 0a3.2 3.2 0 1 0 -6.4 0M1146.9 787.7a3.2 3.2 0 1 0 6.4 0a3.2 3.2 0 1 0 -6.4 0M780.6 756.7a3.2 3.2 0 1 0 6.4 0a3.2 3.2 0 1 0 -6.4 0M1071.7 532.0a3.2 3.2 0 1 0 6.4 0a3.2 3.2 0 1 0 -6.4 0M1008.8 894.6a3.2 3.2 0 1 0 6.4 0a3.2 3.2 0 1 0 -6.4 0M810.2 584.6a3.2 3.2 0 1 0 6.4 0a3.2 3.2 0 1 0 -6.4 0M1166.2 679.0a3.2 3.2 0 1 0 6.4 0a3.2 3.2 0 1 0 -6.4 0M839.8 849.9a3.2 3.2 0 1 0 6.4 0a3.2 3.2 0 1 0 -6.4 0M965.1 503.3a3.2 3.2 0 1 0 6.4 0a3.2 3.2 0 1 0 -6.4 0M1106.9 843.7a3.2 3.2 0 1 0 6.4 0a3.2 3.2 0 1 0 -6.4 0M772.2 688.4a3.2 3.2 0 1 0 6.4 0a3.2 3.2 0 1 0 -6.4 0M1124.1 576.8a3.2 3.2 0 1 0 6.4 0a3.2 3.2 0 1 0 -6.4 0M939.9 896.9a3.2 3.2 0 1 0 6.4 0a3.2 3.2 0 1 0 -6.4 0M859.4 536.3a3.2 3.2 0 1 0 6.4 0a3.2 3.2 0 1 0 -6.4 0M1162.5 747.9a3.2 3.2 0 1 0 6.4 0a3.2 3.2 0 1 0 -6.4 0M795.9 796.6a3.2 3.2 0 1 0 6.4 0a3.2 3.2 0 1 0 -6.4 0M1033.4 513.0a3.2 3.2 0 1 0 6.4 0a3.2 3.2 0 1 0 -6.4 0M1049.9 882.7a3.2 3.2 0 1 0 6.4 0a3.2 3.2 0 1 0 -6.4 0M787.9 621.1a3.2 3.2 0 1 0 6.4 0a3.2 3.2 0 1 0 -6.4 0M1158.0 637.0a3.2 3.2 0 1 0 6.4 0a3.2 3.2 0 1 0 -6.4 0M874.2 875.4a3.2 3.2 0 1 0 6.4 0a3.2 3.2 0 1 0 -6.4 0M922.5 507.8a3.2 3.2 0 1 0 6.4 0a3.2 3.2 0 1 0 -6.4 0M1135.3 811.6a3.2 3.2 0 1 0 6.4 0a3.2 3.2 0 1 0 -6.4 0M773.0 731.3a3.2 3.2 0 1 0 6.4 0a3.2 3.2 0 1 0 -6.4 0M1094.5 545.6a3.2 3.2 0 1 0 6.4 0a3.2 3.2 0 1 0 -6.4 0M982.8 899.9a3.2 3.2 0 1 0 6.4 0a3.2 3.2 0 1 0 -6.4 0M825.8 563.1a3.2 3.2 0 1 0 6.4 0a3.2 3.2 0 1 0 -6.4 0M1169.2 705.5a3.2 3.2 0 1 0 6.4 0a3.2 3.2 0 1 0 -6.4 0M819.7 832.5a3.2 3.2 0 1 0 6.4 0a3.2 3.2 0 1 0 -6.4 0M991.7 502.5a3.2 3.2 0 1 0 6.4 0a3.2 3.2 0 1 0 -6.4 0M1087.8 862.2a3.2 3.2 0 1 0 6.4 0a3.2 3.2 0 1 0 -6.4 0M773.8 661.8a3.2 3.2 0 1 0 6.4 0a3.2 3.2 0 1 0 -6.4 0M1140.8 597.5a3.2 3.2 0 1 0 6.4 0a3.2 3.2 0 1 0 -6.4 0M913.6 892.9a3.2 3.2 0 1 0 6.4 0a3.2 3.2 0 1 0 -6.4 0M881.6 521.4a3.2 3.2 0 1 0 6.4 0a3.2 3.2 0 1 0 -6.4 0M1156.3 773.9a3.2 3.2 0 1 0 6.4 0a3.2 3.2 0 1 0 -6.4 0M783.0 773.3a3.2 3.2 0 1 0 6.4 0a3.2 3.2 0 1 0 -6.4 0M1058.8 521.5a3.2 3.2 0 1 0 6.4 0a3.2 3.2 0 1 0 -6.4 0M1025.5 893.6a3.2 3.2 0 1 0 6.4 0a3.2 3.2 0 1 0 -6.4 0M798.6 596.6a3.2 3.2 0 1 0 6.4 0a3.2 3.2 0 1 0 -6.4 0M1166.7 662.3a3.2 3.2 0 1 0 6.4 0a3.2 3.2 0 1 0 -6.4 0M850.7 862.6a3.2 3.2 0 1 0 6.4 0a3.2 3.2 0 1 0 -6.4 0M948.5 501.3a3.2 3.2 0 1 0 6.4 0a3.2 3.2 0 1 0 -6.4 0M1120.5 833.9a3.2 3.2 0 1 0 6.4 0a3.2 3.2 0 1 0 -6.4 0M768.9 704.8a3.2 3.2 0 1 0 6.4 0a3.2 3.2 0 1 0 -6.4 0M1115.5 562.4a3.2 3.2 0 1 0 6.4 0a3.2 3.2 0 1 0 -6.4 0M956.0 901.7a3.2 3.2 0 1 0 6.4 0a3.2 3.2 0 1 0 -6.4 0M844.3 543.6a3.2 3.2 0 1 0 6.4 0a3.2 3.2 0 1 0 -6.4 0M1168.7 732.3a3.2 3.2 0 1 0 6.4 0a3.2 3.2 0 1 0 -6.4 0M801.9 812.3a3.2 3.2 0 1 0 6.4 0a3.2 3.2 0 1 0 -6.4 0M1018.4 505.4a3.2 3.2 0 1 0 6.4 0a3.2 3.2 0 1 0 -6.4 0M1066.1 878.1a3.2 3.2 0 1 0 6.4 0a3.2 3.2 0 1 0 -6.4 0M779.1 635.4a3.2 3.2 0 1 0 6.4 0a3.2 3.2 0 1 0 -6.4 0M1154.8 620.5a3.2 3.2 0 1 0 6.4 0a3.2 3.2 0 1 0 -6.4 0M887.7 885.4a3.2 3.2 0 1 0 6.4 0a3.2 3.2 0 1 0 -6.4 0M905.7 509.5a3.2 3.2 0 1 0 6.4 0a3.2 3.2 0 1 0 -6.4 0M1146.5 799.0a3.2 3.2 0 1 0 6.4 0a3.2 3.2 0 1 0 -6.4 0M773.3 748.1a3.2 3.2 0 1 0 6.4 0a3.2 3.2 0 1 0 -6.4 0M1082.9 533.4a3.2 3.2 0 1 0 6.4 0a3.2 3.2 0 1 0 -6.4 0M999.6 901.1a3.2 3.2 0 1 0 6.4 0a3.2 3.2 0 1 0 -6.4 0M812.6 573.5a3.2 3.2 0 1 0 6.4 0a3.2 3.2 0 1 0 -6.4 0M1171.9 688.8a3.2 3.2 0 1 0 6.4 0a3.2 3.2 0 1 0 -6.4 0M829.0 846.6a3.2 3.2 0 1 0 6.4 0a3.2 3.2 0 1 0 -6.4 0M975.3 498.4a3.2 3.2 0 1 0 6.4 0a3.2 3.2 0 1 0 -6.4 0M1102.6 854.2a3.2 3.2 0 1 0 6.4 0a3.2 3.2 0 1 0 -6.4 0M768.3 677.8a3.2 3.2 0 1 0 6.4 0a3.2 3.2 0 1 0 -6.4 0M1134.1 582.0a3.2 3.2 0 1 0 6.4 0a3.2 3.2 0 1 0 -6.4 0M929.0 899.8a3.2 3.2 0 1 0 6.4 0a3.2 3.2 0 1 0 -6.4 0M865.5 526.8a3.2 3.2 0 1 0 6.4 0a3.2 3.2 0 1 0 -6.4 0M1164.5 759.1a3.2 3.2 0 1 0 6.4 0a3.2 3.2 0 1 0 -6.4 0M786.9 789.7a3.2 3.2 0 1 0 6.4 0a3.2 3.2 0 1 0 -6.4 0M1044.7 512.0a3.2 3.2 0 1 0 6.4 0a3.2 3.2 0 1 0 -6.4 0M1042.3 891.1a3.2 3.2 0 1 0 6.4 0a3.2 3.2 0 1 0 -6.4 0M787.9 609.8a3.2 3.2 0 1 0 6.4 0a3.2 3.2 0 1 0 -6.4 0M1165.6 645.4a3.2 3.2 0 1 0 6.4 0a3.2 3.2 0 1 0 -6.4 0M862.9 874.4a3.2 3.2 0 1 0 6.4 0a3.2 3.2 0 1 0 -6.4 0M931.5 500.9a3.2 3.2 0 1 0 6.4 0a3.2 3.2 0 1 0 -6.4 0M1133.3 822.7a3.2 3.2 0 1 0 6.4 0a3.2 3.2 0 1 0 -6.4 0M766.9 721.7a3.2 3.2 0 1 0 6.4 0a3.2 3.2 0 1 0 -6.4 0M1105.5 548.6a3.2 3.2 0 1 0 6.4 0a3.2 3.2 0 1 0 -6.4 0M972.7 905.1a3.2 3.2 0 1 0 6.4 0a3.2 3.2 0 1 0 -6.4 0M829.8 552.4a3.2 3.2 0 1 0 6.4 0a3.2 3.2 0 1 0 -6.4 0M1173.5 716.0a3.2 3.2 0 1 0 6.4 0a3.2 3.2 0 1 0 -6.4 0M809.4 827.6a3.2 3.2 0 1 0 6.4 0a3.2 3.2 0 1 0 -6.4 0M1002.6 499.2a3.2 3.2 0 1 0 6.4 0a3.2 3.2 0 1 0 -6.4 0M1082.0 872.0a3.2 3.2 0 1 0 6.4 0a3.2 3.2 0 1 0 -6.4 0M771.5 650.7a3.2 3.2 0 1 0 6.4 0a3.2 3.2 0 1 0 -6.4 0M1150.1 604.1a3.2 3.2 0 1 0 6.4 0a3.2 3.2 0 1 0 -6.4 0M902.3 894.3a3.2 3.2 0 1 0 6.4 0a3.2 3.2 0 1 0 -6.4 0M889.0 512.7a3.2 3.2 0 1 0 6.4 0a3.2 3.2 0 1 0 -6.4 0M1156.7 785.3a3.2 3.2 0 1 0 6.4 0a3.2 3.2 0 1 0 -6.4 0M775.0 765.1a3.2 3.2 0 1 0 6.4 0a3.2 3.2 0 1 0 -6.4 0M1070.1 522.1a3.2 3.2 0 1 0 6.4 0a3.2 3.2 0 1 0 -6.4 0M1016.7 900.8a3.2 3.2 0 1 0 6.4 0a3.2 3.2 0 1 0 -6.4 0M800.2 585.3a3.2 3.2 0 1 0 6.4 0a3.2 3.2 0 1 0 -6.4 0M1173.1 671.7a3.2 3.2 0 1 0 6.4 0a3.2 3.2 0 1 0 -6.4 0M839.6 860.0a3.2 3.2 0 1 0 6.4 0a3.2 3.2 0 1 0 -6.4 0M958.4 495.7a3.2 3.2 0 1 0 6.4 0a3.2 3.2 0 1 0 -6.4 0M1116.9 844.7a3.2 3.2 0 1 0 6.4 0a3.2 3.2 0 1 0 -6.4 0M764.2 694.4a3.2 3.2 0 1 0 6.4 0a3.2 3.2 0 1 0 -6.4 0M1126.0 566.9a3.2 3.2 0 1 0 6.4 0a3.2 3.2 0 1 0 -6.4 0M945.2 905.4a3.2 3.2 0 1 0 6.4 0a3.2 3.2 0 1 0 -6.4 0M849.8 533.6a3.2 3.2 0 1 0 6.4 0a3.2 3.2 0 1 0 -6.4 0M1171.5 743.4a3.2 3.2 0 1 0 6.4 0a3.2 3.2 0 1 0 -6.4 0M792.4 806.0a3.2 3.2 0 1 0 6.4 0a3.2 3.2 0 1 0 -6.4 0M1029.7 503.6a3.2 3.2 0 1 0 6.4 0a3.2 3.2 0 1 0 -6.4 0M1059.0 887.1a3.2 3.2 0 1 0 6.4 0a3.2 3.2 0 1 0 -6.4 0M778.3 624.0a3.2 3.2 0 1 0 6.4 0a3.2 3.2 0 1 0 -6.4 0M1163.1 628.4a3.2 3.2 0 1 0 6.4 0a3.2 3.2 0 1 0 -6.4 0M876.3 885.2a3.2 3.2 0 1 0 6.4 0a3.2 3.2 0 1 0 -6.4 0M914.3 501.9a3.2 3.2 0 1 0 6.4 0a3.2 3.2 0 1 0 -6.4 0M1145.3 810.4a3.2 3.2 0 1 0 6.4 0a3.2 3.2 0 1 0 -6.4 0M766.5 738.9a3.2 3.2 0 1 0 6.4 0a3.2 3.2 0 1 0 -6.4 0M1094.2 535.6a3.2 3.2 0 1 0 6.4 0a3.2 3.2 0 1 0 -6.4 0M989.8 907.0a3.2 3.2 0 1 0 6.4 0a3.2 3.2 0 1 0 -6.4 0M815.8 562.5a3.2 3.2 0 1 0 6.4 0a3.2 3.2 0 1 0 -6.4 0M1177.0 699.1a3.2 3.2 0 1 0 6.4 0a3.2 3.2 0 1 0 -6.4 0M818.3 842.4a3.2 3.2 0 1 0 6.4 0a3.2 3.2 0 1 0 -6.4 0M986.0 494.3a3.2 3.2 0 1 0 6.4 0a3.2 3.2 0 1 0 -6.4 0M1097.5 864.5a3.2 3.2 0 1 0 6.4 0a3.2 3.2 0 1 0 -6.4 0M765.1 666.7a3.2 3.2 0 1 0 6.4 0a3.2 3.2 0 1 0 -6.4 0M1143.9 588.0a3.2 3.2 0 1 0 6.4 0a3.2 3.2 0 1 0 -6.4 0M917.7 902.1a3.2 3.2 0 1 0 6.4 0a3.2 3.2 0 1 0 -6.4 0M872.3 517.5a3.2 3.2 0 1 0 6.4 0a3.2 3.2 0 1 0 -6.4 0M1165.7 770.5a3.2 3.2 0 1 0 6.4 0a3.2 3.2 0 1 0 -6.4 0M778.3 782.1a3.2 3.2 0 1 0 6.4 0a3.2 3.2 0 1 0 -6.4 0M1056.2 511.8a3.2 3.2 0 1 0 6.4 0a3.2 3.2 0 1 0 -6.4 0M1033.9 899.0a3.2 3.2 0 1 0 6.4 0a3.2 3.2 0 1 0 -6.4 0M788.7 598.3a3.2 3.2 0 1 0 6.4 0a3.2 3.2 0 1 0 -6.4 0M1172.8 654.4a3.2 3.2 0 1 0 6.4 0a3.2 3.2 0 1 0 -6.4 0M851.5 872.6a3.2 3.2 0 1 0 6.4 0a3.2 3.2 0 1 0 -6.4 0M941.1 494.5a3.2 3.2 0 1 0 6.4 0a3.2 3.2 0 1 0 -6.4 0M1130.5 833.9a3.2 3.2 0 1 0 6.4 0a3.2 3.2 0 1 0 -6.4 0M761.4 711.5a3.2 3.2 0 1 0 6.4 0a3.2 3.2 0 1 0 -6.4 0M1116.4 552.4a3.2 3.2 0 1 0 6.4 0a3.2 3.2 0 1 0 -6.4 0M962.1 909.7a3.2 3.2 0 1 0 6.4 0a3.2 3.2 0 1 0 -6.4 0M834.5 541.9a3.2 3.2 0 1 0 6.4 0a3.2 3.2 0 1 0 -6.4 0M1177.1 727.0a3.2 3.2 0 1 0 6.4 0a3.2 3.2 0 1 0 -6.4 0M799.3 822.0a3.2 3.2 0 1 0 6.4 0a3.2 3.2 0 1 0 -6.4 0M1013.8 496.6a3.2 3.2 0 1 0 6.4 0a3.2 3.2 0 1 0 -6.4 0M1075.5 881.6a3.2 3.2 0 1 0 6.4 0a3.2 3.2 0 1 0 -6.4 0M769.8 639.2a3.2 3.2 0 1 0 6.4 0a3.2 3.2 0 1 0 -6.4 0M1159.1 611.4a3.2 3.2 0 1 0 6.4 0a3.2 3.2 0 1 0 -6.4 0M890.7 895.0a3.2 3.2 0 1 0 6.4 0a3.2 3.2 0 1 0 -6.4 0M897.1 504.5a3.2 3.2 0 1 0 6.4 0a3.2 3.2 0 1 0 -6.4 0M1156.3 796.8a3.2 3.2 0 1 0 6.4 0a3.2 3.2 0 1 0 -6.4 0M767.5 756.3a3.2 3.2 0 1 0 6.4 0a3.2 3.2 0 1 0 -6.4 0M1081.6 523.5a3.2 3.2 0 1 0 6.4 0a3.2 3.2 0 1 0 -6.4 0M1007.3 907.5a3.2 3.2 0 1 0 6.4 0a3.2 3.2 0 1 0 -6.4 0M802.6 574.0a3.2 3.2 0 1 0 6.4 0a3.2 3.2 0 1 0 -6.4 0M1179.0 681.7a3.2 3.2 0 1 0 6.4 0a3.2 3.2 0 1 0 -6.4 0M828.5 856.6a3.2 3.2 0 1 0 6.4 0a3.2 3.2 0 1 0 -6.4 0M968.9 490.8a3.2 3.2 0 1 0 6.4 0a3.2 3.2 0 1 0 -6.4 0M1112.5 855.5a3.2 3.2 0 1 0 6.4 0a3.2 3.2 0 1 0 -6.4 0M760.1 683.5a3.2 3.2 0 1 0 6.4 0a3.2 3.2 0 1 0 -6.4 0M1136.3 572.2a3.2 3.2 0 1 0 6.4 0a3.2 3.2 0 1 0 -6.4 0M934.0 908.5a3.2 3.2 0 1 0 6.4 0a3.2 3.2 0 1 0 -6.4 0M856.0 523.8a3.2 3.2 0 1 0 6.4 0a3.2 3.2 0 1 0 -6.4 0M1173.5 754.8a3.2 3.2 0 1 0 6.4 0a3.2 3.2 0 1 0 -6.4 0M783.1 799.0a3.2 3.2 0 1 0 6.4 0a3.2 3.2 0 1 0 -6.4 0M1041.3 502.6a3.2 3.2 0 1 0 6.4 0a3.2 3.2 0 1 0 -6.4 0M1051.1 895.7a3.2 3.2 0 1 0 6.4 0a3.2 3.2 0 1 0 -6.4 0M778.3 612.4a3.2 3.2 0 1 0 6.4 0a3.2 3.2 0 1 0 -6.4 0M1171.0 636.9a3.2 3.2 0 1 0 6.4 0a3.2 3.2 0 1 0 -6.4 0M864.7 884.2a3.2 3.2 0 1 0 6.4 0a3.2 3.2 0 1 0 -6.4 0M923.5 494.8a3.2 3.2 0 1 0 6.4 0a3.2 3.2 0 1 0 -6.4 0M1143.3 821.8a3.2 3.2 0 1 0 6.4 0a3.2 3.2 0 1 0 -6.4 0M760.2 729.1a3.2 3.2 0 1 0 6.4 0a3.2 3.2 0 1 0 -6.4 0M1105.4 538.6a3.2 3.2 0 1 0 6.4 0a3.2 3.2 0 1 0 -6.4 0M979.5 912.4a3.2 3.2 0 1 0 6.4 0a3.2 3.2 0 1 0 -6.4 0M819.8 551.6a3.2 3.2 0 1 0 6.4 0a3.2 3.2 0 1 0 -6.4 0M1181.4 709.9a3.2 3.2 0 1 0 6.4 0a3.2 3.2 0 1 0 -6.4 0M807.7 837.5a3.2 3.2 0 1 0 6.4 0a3.2 3.2 0 1 0 -6.4 0M997.2 490.8a3.2 3.2 0 1 0 6.4 0a3.2 3.2 0 1 0 -6.4 0M1091.7 874.5a3.2 3.2 0 1 0 6.4 0a3.2 3.2 0 1 0 -6.4 0M762.6 655.3a3.2 3.2 0 1 0 6.4 0a3.2 3.2 0 1 0 -6.4 0M1153.5 594.7a3.2 3.2 0 1 0 6.4 0a3.2 3.2 0 1 0 -6.4 0M906.2 903.5a3.2 3.2 0 1 0 6.4 0a3.2 3.2 0 1 0 -6.4 0M879.9 508.6a3.2 3.2 0 1 0 6.4 0a3.2 3.2 0 1 0 -6.4 0M1166.2 782.2a3.2 3.2 0 1 0 6.4 0a3.2 3.2 0 1 0 -6.4 0M770.1 773.8a3.2 3.2 0 1 0 6.4 0a3.2 3.2 0 1 0 -6.4 0M1067.9 512.4a3.2 3.2 0 1 0 6.4 0a3.2 3.2 0 1 0 -6.4 0M1024.9 906.5a3.2 3.2 0 1 0 6.4 0a3.2 3.2 0 1 0 -6.4 0M790.3 586.7a3.2 3.2 0 1 0 6.4 0a3.2 3.2 0 1 0 -6.4 0M1179.4 664.0a3.2 3.2 0 1 0 6.4 0a3.2 3.2 0 1 0 -6.4 0M840.1 869.9a3.2 3.2 0 1 0 6.4 0a3.2 3.2 0 1 0 -6.4 0M951.3 488.8a3.2 3.2 0 1 0 6.4 0a3.2 3.2 0 1 0 -6.4 0M1126.9 845.1a3.2 3.2 0 1 0 6.4 0a3.2 3.2 0 1 0 -6.4 0M756.6 700.9a3.2 3.2 0 1 0 6.4 0a3.2 3.2 0 1 0 -6.4 0M1127.2 557.0a3.2 3.2 0 1 0 6.4 0a3.2 3.2 0 1 0 -6.4 0M951.0 913.6a3.2 3.2 0 1 0 6.4 0a3.2 3.2 0 1 0 -6.4 0M840.0 531.5a3.2 3.2 0 1 0 6.4 0a3.2 3.2 0 1 0 -6.4 0M1180.1 738.3a3.2 3.2 0 1 0 6.4 0a3.2 3.2 0 1 0 -6.4 0M789.5 815.6a3.2 3.2 0 1 0 6.4 0a3.2 3.2 0 1 0 -6.4 0M1025.4 494.6a3.2 3.2 0 1 0 6.4 0a3.2 3.2 0 1 0 -6.4 0M1068.2 890.8a3.2 3.2 0 1 0 6.4 0a3.2 3.2 0 1 0 -6.4 0M768.9 627.5a3.2 3.2 0 1 0 6.4 0a3.2 3.2 0 1 0 -6.4 0M1167.6 619.5a3.2 3.2 0 1 0 6.4 0a3.2 3.2 0 1 0 -6.4 0M879.0 894.8a3.2 3.2 0 1 0 6.4 0a3.2 3.2 0 1 0 -6.4 0M905.8 496.7a3.2 3.2 0 1 0 6.4 0a3.2 3.2 0 1 0 -6.4 0M1155.1 808.5a3.2 3.2 0 1 0 6.4 0a3.2 3.2 0 1 0 -6.4 0M760.5 746.9a3.2 3.2 0 1 0 6.4 0a3.2 3.2 0 1 0 -6.4 0M1093.2 525.7a3.2 3.2 0 1 0 6.4 0a3.2 3.2 0 1 0 -6.4 0M997.2 913.7a3.2 3.2 0 1 0 6.4 0a3.2 3.2 0 1 0 -6.4 0M805.8 562.7a3.2 3.2 0 1 0 6.4 0a3.2 3.2 0 1 0 -6.4 0M1184.2 692.2a3.2 3.2 0 1 0 6.4 0a3.2 3.2 0 1 0 -6.4 0M817.5 852.4a3.2 3.2 0 1 0 6.4 0a3.2 3.2 0 1 0 -6.4 0M979.8 486.5a3.2 3.2 0 1 0 6.4 0a3.2 3.2 0 1 0 -6.4 0M1107.4 866.0a3.2 3.2 0 1 0 6.4 0a3.2 3.2 0 1 0 -6.4 0M756.8 672.2a3.2 3.2 0 1 0 6.4 0a3.2 3.2 0 1 0 -6.4 0M1146.4 578.3a3.2 3.2 0 1 0 6.4 0a3.2 3.2 0 1 0 -6.4 0M922.5 910.8a3.2 3.2 0 1 0 6.4 0a3.2 3.2 0 1 0 -6.4 0M862.9 514.2a3.2 3.2 0 1 0 6.4 0a3.2 3.2 0 1 0 -6.4 0M1174.8 766.5a3.2 3.2 0 1 0 6.4 0a3.2 3.2 0 1 0 -6.4 0M774.3 791.2a3.2 3.2 0 1 0 6.4 0a3.2 3.2 0 1 0 -6.4 0M1053.1 502.3a3.2 3.2 0 1 0 6.4 0a3.2 3.2 0 1 0 -6.4 0M1042.6 903.8a3.2 3.2 0 1 0 6.4 0a3.2 3.2 0 1 0 -6.4 0M779.0 600.6a3.2 3.2 0 1 0 6.4 0a3.2 3.2 0 1 0 -6.4 0M1178.4 646.1a3.2 3.2 0 1 0 6.4 0a3.2 3.2 0 1 0 -6.4 0M853.0 882.4a3.2 3.2 0 1 0 6.4 0a3.2 3.2 0 1 0 -6.4 0M933.4 488.3a3.2 3.2 0 1 0 6.4 0a3.2 3.2 0 1 0 -6.4 0M1140.4 833.3a3.2 3.2 0 1 0 6.4 0a3.2 3.2 0 1 0 -6.4 0M754.5 718.7a3.2 3.2 0 1 0 6.4 0a3.2 3.2 0 1 0 -6.4 0M1116.6 542.5a3.2 3.2 0 1 0 6.4 0a3.2 3.2 0 1 0 -6.4 0M968.6 917.2a3.2 3.2 0 1 0 6.4 0a3.2 3.2 0 1 0 -6.4 0M824.6 540.8a3.2 3.2 0 1 0 6.4 0a3.2 3.2 0 1 0 -6.4 0M1185.2 721.1a3.2 3.2 0 1 0 6.4 0a3.2 3.2 0 1 0 -6.4 0M797.3 831.7a3.2 3.2 0 1 0 6.4 0a3.2 3.2 0 1 0 -6.4 0M1008.7 488.0a3.2 3.2 0 1 0 6.4 0a3.2 3.2 0 1 0 -6.4 0M1085.0 884.4a3.2 3.2 0 1 0 6.4 0a3.2 3.2 0 1 0 -6.4 0M760.9 643.6a3.2 3.2 0 1 0 6.4 0a3.2 3.2 0 1 0 -6.4 0M1162.7 602.2a3.2 3.2 0 1 0 6.4 0a3.2 3.2 0 1 0 -6.4 0M894.3 904.3a3.2 3.2 0 1 0 6.4 0a3.2 3.2 0 1 0 -6.4 0M888.1 500.1a3.2 3.2 0 1 0 6.4 0a3.2 3.2 0 1 0 -6.4 0M1165.8 794.0a3.2 3.2 0 1 0 6.4 0a3.2 3.2 0 1 0 -6.4 0M762.3 764.8a3.2 3.2 0 1 0 6.4 0a3.2 3.2 0 1 0 -6.4 0M1079.7 513.7a3.2 3.2 0 1 0 6.4 0a3.2 3.2 0 1 0 -6.4 0M1015.3 913.4a3.2 3.2 0 1 0 6.4 0a3.2 3.2 0 1 0 -6.4 0M792.7 575.1a3.2 3.2 0 1 0 6.4 0a3.2 3.2 0 1 0 -6.4 0M1185.5 674.2a3.2 3.2 0 1 0 6.4 0a3.2 3.2 0 1 0 -6.4 0M828.8 866.5a3.2 3.2 0 1 0 6.4 0a3.2 3.2 0 1 0 -6.4 0M962.0 483.6a3.2 3.2 0 1 0 6.4 0a3.2 3.2 0 1 0 -6.4 0M1122.5 856.1a3.2 3.2 0 1 0 6.4 0a3.2 3.2 0 1 0 -6.4 0M752.4 689.8a3.2 3.2 0 1 0 6.4 0a3.2 3.2 0 1 0 -6.4 0M1137.8 562.4a3.2 3.2 0 1 0 6.4 0a3.2 3.2 0 1 0 -6.4 0M939.6 916.8a3.2 3.2 0 1 0 6.4 0a3.2 3.2 0 1 0 -6.4 0M846.3 521.4a3.2 3.2 0 1 0 6.4 0a3.2 3.2 0 1 0 -6.4 0M1182.2 750.0a3.2 3.2 0 1 0 6.4 0a3.2 3.2 0 1 0 -6.4 0M780.0 808.4a3.2 3.2 0 1 0 6.4 0a3.2 3.2 0 1 0 -6.4 0M1037.2 493.5a3.2 3.2 0 1 0 6.4 0a3.2 3.2 0 1 0 -6.4 0M1060.3 899.6a3.2 3.2 0 1 0 6.4 0a3.2 3.2 0 1 0 -6.4 0M768.8 615.6a3.2 3.2 0 1 0 6.4 0a3.2 3.2 0 1 0 -6.4 0M1175.7 628.2a3.2 3.2 0 1 0 6.4 0a3.2 3.2 0 1 0 -6.4 0M867.1 893.9a3.2 3.2 0 1 0 6.4 0a3.2 3.2 0 1 0 -6.4 0M915.2 489.3a3.2 3.2 0 1 0 6.4 0a3.2 3.2 0 1 0 -6.4 0M1153.1 820.3a3.2 3.2 0 1 0 6.4 0a3.2 3.2 0 1 0 -6.4 0M754.0 736.9a3.2 3.2 0 1 0 6.4 0a3.2 3.2 0 1 0 -6.4 0M1104.7 528.7a3.2 3.2 0 1 0 6.4 0a3.2 3.2 0 1 0 -6.4 0M986.7 919.3a3.2 3.2 0 1 0 6.4 0a3.2 3.2 0 1 0 -6.4 0M809.9 551.4a3.2 3.2 0 1 0 6.4 0a3.2 3.2 0 1 0 -6.4 0M1188.9 703.3a3.2 3.2 0 1 0 6.4 0a3.2 3.2 0 1 0 -6.4 0M806.7 847.4a3.2 3.2 0 1 0 6.4 0a3.2 3.2 0 1 0 -6.4 0M991.2 482.8a3.2 3.2 0 1 0 6.4 0a3.2 3.2 0 1 0 -6.4 0M1101.4 876.4a3.2 3.2 0 1 0 6.4 0a3.2 3.2 0 1 0 -6.4 0M754.2 660.6a3.2 3.2 0 1 0 6.4 0a3.2 3.2 0 1 0 -6.4 0M1156.2 585.1a3.2 3.2 0 1 0 6.4 0a3.2 3.2 0 1 0 -6.4 0M910.6 912.4a3.2 3.2 0 1 0 6.4 0a3.2 3.2 0 1 0 -6.4 0M870.6 505.1a3.2 3.2 0 1 0 6.4 0a3.2 3.2 0 1 0 -6.4 0M1175.4 778.5a3.2 3.2 0 1 0 6.4 0a3.2 3.2 0 1 0 -6.4 0M765.8 782.8a3.2 3.2 0 1 0 6.4 0a3.2 3.2 0 1 0 -6.4 0M1065.0 502.8a3.2 3.2 0 1 0 6.4 0a3.2 3.2 0 1 0 -6.4 0M1033.5 911.5a3.2 3.2 0 1 0 6.4 0a3.2 3.2 0 1 0 -6.4 0M780.6 588.7a3.2 3.2 0 1 0 6.4 0a3.2 3.2 0 1 0 -6.4 0M1185.3 656.0a3.2 3.2 0 1 0 6.4 0a3.2 3.2 0 1 0 -6.4 0M841.3 879.8a3.2 3.2 0 1 0 6.4 0a3.2 3.2 0 1 0 -6.4 0M943.7 482.3a3.2 3.2 0 1 0 6.4 0a3.2 3.2 0 1 0 -6.4 0M1136.8 844.7a3.2 3.2 0 1 0 6.4 0a3.2 3.2 0 1 0 -6.4 0M749.5 707.8a3.2 3.2 0 1 0 6.4 0a3.2 3.2 0 1 0 -6.4 0M1127.7 547.1a3.2 3.2 0 1 0 6.4 0a3.2 3.2 0 1 0 -6.4 0M957.3 921.2a3.2 3.2 0 1 0 6.4 0a3.2 3.2 0 1 0 -6.4 0M830.2 530.1a3.2 3.2 0 1 0 6.4 0a3.2 3.2 0 1 0 -6.4 0M1188.3 732.7a3.2 3.2 0 1 0 6.4 0a3.2 3.2 0 1 0 -6.4 0M787.2 825.3a3.2 3.2 0 1 0 6.4 0a3.2 3.2 0 1 0 -6.4 0M1020.5 486.0a3.2 3.2 0 1 0 6.4 0a3.2 3.2 0 1 0 -6.4 0M1077.7 893.9a3.2 3.2 0 1 0 6.4 0a3.2 3.2 0 1 0 -6.4 0M759.9 631.6a3.2 3.2 0 1 0 6.4 0a3.2 3.2 0 1 0 -6.4 0M1171.5 610.3a3.2 3.2 0 1 0 6.4 0a3.2 3.2 0 1 0 -6.4 0M882.3 904.2a3.2 3.2 0 1 0 6.4 0a3.2 3.2 0 1 0 -6.4 0M897.0 492.0a3.2 3.2 0 1 0 6.4 0a3.2 3.2 0 1 0 -6.4 0M1164.7 806.0a3.2 3.2 0 1 0 6.4 0a3.2 3.2 0 1 0 -6.4 0M755.1 755.2a3.2 3.2 0 1 0 6.4 0a3.2 3.2 0 1 0 -6.4 0M1091.5 515.9a3.2 3.2 0 1 0 6.4 0a3.2 3.2 0 1 0 -6.4 0M1005.1 919.8a3.2 3.2 0 1 0 6.4 0a3.2 3.2 0 1 0 -6.4 0M795.9 563.4a3.2 3.2 0 1 0 6.4 0a3.2 3.2 0 1 0 -6.4 0M1191.0 685.0a3.2 3.2 0 1 0 6.4 0a3.2 3.2 0 1 0 -6.4 0M817.5 862.3a3.2 3.2 0 1 0 6.4 0a3.2 3.2 0 1 0 -6.4 0M973.2 479.1a3.2 3.2 0 1 0 6.4 0a3.2 3.2 0 1 0 -6.4 0M1117.3 867.0a3.2 3.2 0 1 0 6.4 0a3.2 3.2 0 1 0 -6.4 0M748.9 678.2a3.2 3.2 0 1 0 6.4 0a3.2 3.2 0 1 0 -6.4 0M1148.2 568.5a3.2 3.2 0 1 0 6.4 0a3.2 3.2 0 1 0 -6.4 0M927.8 919.3a3.2 3.2 0 1 0 6.4 0a3.2 3.2 0 1 0 -6.4 0M853.3 511.6a3.2 3.2 0 1 0 6.4 0a3.2 3.2 0 1 0 -6.4 0M1183.7 762.0a3.2 3.2 0 1 0 6.4 0a3.2 3.2 0 1 0 -6.4 0M770.8 800.5a3.2 3.2 0 1 0 6.4 0a3.2 3.2 0 1 0 -6.4 0M1049.3 493.1a3.2 3.2 0 1 0 6.4 0a3.2 3.2 0 1 0 -6.4 0M1051.6 908.1a3.2 3.2 0 1 0 6.4 0a3.2 3.2 0 1 0 -6.4 0M769.5 603.5a3.2 3.2 0 1 0 6.4 0a3.2 3.2 0 1 0 -6.4 0M1183.4 637.5a3.2 3.2 0 1 0 6.4 0a3.2 3.2 0 1 0 -6.4 0M855.1 892.1a3.2 3.2 0 1 0 6.4 0a3.2 3.2 0 1 0 -6.4 0M925.2 482.5a3.2 3.2 0 1 0 6.4 0a3.2 3.2 0 1 0 -6.4 0M1150.3 832.0a3.2 3.2 0 1 0 6.4 0a3.2 3.2 0 1 0 -6.4 0M748.1 726.3a3.2 3.2 0 1 0 6.4 0a3.2 3.2 0 1 0 -6.4 0M1116.2 532.5a3.2 3.2 0 1 0 6.4 0a3.2 3.2 0 1 0 -6.4 0M975.6 924.2a3.2 3.2 0 1 0 6.4 0a3.2 3.2 0 1 0 -6.4 0M814.7 540.3a3.2 3.2 0 1 0 6.4 0a3.2 3.2 0 1 0 -6.4 0M1192.8 714.7a3.2 3.2 0 1 0 6.4 0a3.2 3.2 0 1 0 -6.4 0M796.0 841.6a3.2 3.2 0 1 0 6.4 0a3.2 3.2 0 1 0 -6.4 0M1003.0 479.9a3.2 3.2 0 1 0 6.4 0a3.2 3.2 0 1 0 -6.4 0M1094.8 886.5a3.2 3.2 0 1 0 6.4 0a3.2 3.2 0 1 0 -6.4 0M752.3 648.6a3.2 3.2 0 1 0 6.4 0a3.2 3.2 0 1 0 -6.4 0M1165.7 592.7a3.2 3.2 0 1 0 6.4 0a3.2 3.2 0 1 0 -6.4 0M898.5 913.3a3.2 3.2 0 1 0 6.4 0a3.2 3.2 0 1 0 -6.4 0M878.9 496.3a3.2 3.2 0 1 0 6.4 0a3.2 3.2 0 1 0 -6.4 0M1175.2 790.6a3.2 3.2 0 1 0 6.4 0a3.2 3.2 0 1 0 -6.4 0M757.7 773.7a3.2 3.2 0 1 0 6.4 0a3.2 3.2 0 1 0 -6.4 0M1077.1 504.1a3.2 3.2 0 1 0 6.4 0a3.2 3.2 0 1 0 -6.4 0M1023.7 918.7a3.2 3.2 0 1 0 6.4 0a3.2 3.2 0 1 0 -6.4 0M782.9 576.8a3.2 3.2 0 1 0 6.4 0a3.2 3.2 0 1 0 -6.4 0M1191.6 666.3a3.2 3.2 0 1 0 6.4 0a3.2 3.2 0 1 0 -6.4 0M829.6 876.4a3.2 3.2 0 1 0 6.4 0a3.2 3.2 0 1 0 -6.4 0M954.7 476.9a3.2 3.2 0 1 0 6.4 0a3.2 3.2 0 1 0 -6.4 0M1132.4 856.1a3.2 3.2 0 1 0 6.4 0a3.2 3.2 0 1 0 -6.4 0M745.1 696.5a3.2 3.2 0 1 0 6.4 0a3.2 3.2 0 1 0 -6.4 0M1138.6 552.5a3.2 3.2 0 1 0 6.4 0a3.2 3.2 0 1 0 -6.4 0M945.6 924.6a3.2 3.2 0 1 0 6.4 0a3.2 3.2 0 1 0 -6.4 0M836.5 519.7a3.2 3.2 0 1 0 6.4 0a3.2 3.2 0 1 0 -6.4 0M1190.6 744.6a3.2 3.2 0 1 0 6.4 0a3.2 3.2 0 1 0 -6.4 0M777.4 818.0a3.2 3.2 0 1 0 6.4 0a3.2 3.2 0 1 0 -6.4 0M1032.6 484.7a3.2 3.2 0 1 0 6.4 0a3.2 3.2 0 1 0 -6.4 0M1069.6 903.0a3.2 3.2 0 1 0 6.4 0a3.2 3.2 0 1 0 -6.4 0M759.7 619.4a3.2 3.2 0 1 0 6.4 0a3.2 3.2 0 1 0 -6.4 0M1179.9 619.2a3.2 3.2 0 1 0 6.4 0a3.2 3.2 0 1 0 -6.4 0M870.1 903.3a3.2 3.2 0 1 0 6.4 0a3.2 3.2 0 1 0 -6.4 0M906.6 484.4a3.2 3.2 0 1 0 6.4 0a3.2 3.2 0 1 0 -6.4 0M1162.8 818.1a3.2 3.2 0 1 0 6.4 0a3.2 3.2 0 1 0 -6.4 0M748.3 745.1a3.2 3.2 0 1 0 6.4 0a3.2 3.2 0 1 0 -6.4 0M1103.4 518.9a3.2 3.2 0 1 0 6.4 0a3.2 3.2 0 1 0 -6.4 0M994.3 925.6a3.2 3.2 0 1 0 6.4 0a3.2 3.2 0 1 0 -6.4 0M799.9 551.9a3.2 3.2 0 1 0 6.4 0a3.2 3.2 0 1 0 -6.4 0M1195.9 696.2a3.2 3.2 0 1 0 6.4 0a3.2 3.2 0 1 0 -6.4 0M806.3 857.3a3.2 3.2 0 1 0 6.4 0a3.2 3.2 0 1 0 -6.4 0M984.8 475.2a3.2 3.2 0 1 0 6.4 0a3.2 3.2 0 1 0 -6.4 0M1111.3 877.7a3.2 3.2 0 1 0 6.4 0a3.2 3.2 0 1 0 -6.4 0M746.1 666.3a3.2 3.2 0 1 0 6.4 0a3.2 3.2 0 1 0 -6.4 0M1158.3 575.4a3.2 3.2 0 1 0 6.4 0a3.2 3.2 0 1 0 -6.4 0M915.6 921.0a3.2 3.2 0 1 0 6.4 0a3.2 3.2 0 1 0 -6.4 0M861.1 502.1a3.2 3.2 0 1 0 6.4 0a3.2 3.2 0 1 0 -6.4 0M1184.4 774.2a3.2 3.2 0 1 0 6.4 0a3.2 3.2 0 1 0 -6.4 0M762.0 792.0a3.2 3.2 0 1 0 6.4 0a3.2 3.2 0 1 0 -6.4 0M1061.6 493.5a3.2 3.2 0 1 0 6.4 0a3.2 3.2 0 1 0 -6.4 0M1042.3 916.1a3.2 3.2 0 1 0 6.4 0a3.2 3.2 0 1 0 -6.4 0M771.0 591.4a3.2 3.2 0 1 0 6.4 0a3.2 3.2 0 1 0 -6.4 0M1190.5 647.5a3.2 3.2 0 1 0 6.4 0a3.2 3.2 0 1 0 -6.4 0M843.1 889.6a3.2 3.2 0 1 0 6.4 0a3.2 3.2 0 1 0 -6.4 0M935.8 476.3a3.2 3.2 0 1 0 6.4 0a3.2 3.2 0 1 0 -6.4 0M1146.7 843.8a3.2 3.2 0 1 0 6.4 0a3.2 3.2 0 1 0 -6.4 0M742.8 715.2a3.2 3.2 0 1 0 6.4 0a3.2 3.2 0 1 0 -6.4 0M1127.6 537.1a3.2 3.2 0 1 0 6.4 0a3.2 3.2 0 1 0 -6.4 0M964.1 928.5a3.2 3.2 0 1 0 6.4 0a3.2 3.2 0 1 0 -6.4 0M820.3 529.3a3.2 3.2 0 1 0 6.4 0a3.2 3.2 0 1 0 -6.4 0M1196.1 726.6a3.2 3.2 0 1 0 6.4 0a3.2 3.2 0 1 0 -6.4 0M785.6 835.1a3.2 3.2 0 1 0 6.4 0a3.2 3.2 0 1 0 -6.4 0M1015.1 477.7a3.2 3.2 0 1 0 6.4 0a3.2 3.2 0 1 0 -6.4 0M1087.3 896.3a3.2 3.2 0 1 0 6.4 0a3.2 3.2 0 1 0 -6.4 0M751.1 636.3a3.2 3.2 0 1 0 6.4 0a3.2 3.2 0 1 0 -6.4 0M1174.8 600.9a3.2 3.2 0 1 0 6.4 0a3.2 3.2 0 1 0 -6.4 0M886.2 913.3a3.2 3.2 0 1 0 6.4 0a3.2 3.2 0 1 0 -6.4 0M888.0 487.9a3.2 3.2 0 1 0 6.4 0a3.2 3.2 0 1 0 -6.4 0M1174.2 802.9a3.2 3.2 0 1 0 6.4 0a3.2 3.2 0 1 0 -6.4 0M750.2 763.9a3.2 3.2 0 1 0 6.4 0a3.2 3.2 0 1 0 -6.4 0M1089.3 506.2a3.2 3.2 0 1 0 6.4 0a3.2 3.2 0 1 0 -6.4 0M1013.3 925.4a3.2 3.2 0 1 0 6.4 0a3.2 3.2 0 1 0 -6.4 0M786.1 564.9a3.2 3.2 0 1 0 6.4 0a3.2 3.2 0 1 0 -6.4 0M1197.3 677.3a3.2 3.2 0 1 0 6.4 0a3.2 3.2 0 1 0 -6.4 0M818.0 872.2a3.2 3.2 0 1 0 6.4 0a3.2 3.2 0 1 0 -6.4 0M966.0 472.1a3.2 3.2 0 1 0 6.4 0a3.2 3.2 0 1 0 -6.4 0M1127.2 867.3a3.2 3.2 0 1 0 6.4 0a3.2 3.2 0 1 0 -6.4 0M741.3 684.7a3.2 3.2 0 1 0 6.4 0a3.2 3.2 0 1 0 -6.4 0M1149.3 558.6a3.2 3.2 0 1 0 6.4 0a3.2 3.2 0 1 0 -6.4 0M933.6 927.3a3.2 3.2 0 1 0 6.4 0a3.2 3.2 0 1 0 -6.4 0M843.6 509.6a3.2 3.2 0 1 0 6.4 0a3.2 3.2 0 1 0 -6.4 0M1192.2 756.9a3.2 3.2 0 1 0 6.4 0a3.2 3.2 0 1 0 -6.4 0M768.0 810.1a3.2 3.2 0 1 0 6.4 0a3.2 3.2 0 1 0 -6.4 0M1045.0 484.2a3.2 3.2 0 1 0 6.4 0a3.2 3.2 0 1 0 -6.4 0M1060.9 911.7a3.2 3.2 0 1 0 6.4 0a3.2 3.2 0 1 0 -6.4 0M760.2 607.1a3.2 3.2 0 1 0 6.4 0a3.2 3.2 0 1 0 -6.4 0M1187.8 628.7a3.2 3.2 0 1 0 6.4 0a3.2 3.2 0 1 0 -6.4 0M857.8 901.7a3.2 3.2 0 1 0 6.4 0a3.2 3.2 0 1 0 -6.4 0M916.8 477.3a3.2 3.2 0 1 0 6.4 0a3.2 3.2 0 1 0 -6.4 0M1160.1 830.2a3.2 3.2 0 1 0 6.4 0a3.2 3.2 0 1 0 -6.4 0" fill="#f0f0f0" stroke="#5c5c60" stroke-width="1.7"/>
<circle cx="985" cy="721" r="37.5" fill="#f5c40f" stroke="#3a2e00" stroke-width="2.5"/>
<path d="M1717.0 192.0L1702.0 162.0L1732.0 162.0Z" fill="#4a4a50"/>
<circle cx="1717" cy="196" r="3.5" fill="#3e3e44"/>
<path d="M2304.0 269.0L2275.5 282.0L2276.5 254.0Z" fill="#e8e8e8"/>
<circle cx="2307.0" cy="269.0" r="3.2" fill="#f2f2f2" stroke="#6a6a70" stroke-width="1.6"/>
<path d="M3140.8 300.0L3110.2 282.8L3108.3 317.9Z" fill="#e8e8e8"/>
<path d="M3147.2 299.7L3122.3 282.8L3119.1 318.5Z" fill="#e8e8e8"/>
<circle cx="3137.6" cy="299.7" r="3.2" fill="#f2f2f2" stroke="#6a6a70" stroke-width="1.6"/>
<circle cx="3149.0" cy="299.7" r="3.2" fill="#f2f2f2" stroke="#6a6a70" stroke-width="1.6"/>
<circle cx="3139.0" cy="310.5" r="3.2" fill="#f2f2f2" stroke="#6a6a70" stroke-width="1.6"/>
<circle cx="3150.3" cy="311.0" r="3.2" fill="#f2f2f2" stroke="#6a6a70" stroke-width="1.6"/>
<path d="M3116.6 380.1L3094.9 363.5L3089.1 388.0Z" fill="#e8e8e8"/>
<circle cx="3120.0" cy="381.5" r="3.2" fill="#f2f2f2" stroke="#6a6a70" stroke-width="1.6"/>
<path d="M1773.7 725.0L1742.4 694.3L1729.5 727.0Z" fill="#e8e8e8"/>
<path d="M1777.0 738.0L1752.0 696.0L1731.7 737.0Z" fill="#e8e8e8"/>
<circle cx="1765.0" cy="715.0" r="3.2" fill="#f2f2f2" stroke="#6a6a70" stroke-width="1.6"/>
<circle cx="1776.0" cy="717.8" r="3.2" fill="#f2f2f2" stroke="#6a6a70" stroke-width="1.6"/>
<circle cx="1761.0" cy="725.0" r="3.2" fill="#f2f2f2" stroke="#6a6a70" stroke-width="1.6"/>
<circle cx="1778.0" cy="728.0" r="3.2" fill="#f2f2f2" stroke="#6a6a70" stroke-width="1.6"/>
<circle cx="1763.0" cy="735.0" r="3.2" fill="#f2f2f2" stroke="#6a6a70" stroke-width="1.6"/>
<circle cx="1773.0" cy="737.0" r="3.2" fill="#f2f2f2" stroke="#6a6a70" stroke-width="1.6"/>
<path d="M1895.0 947.0L1861.5 947.9L1874.2 920.7Z" fill="#e8e8e8"/>
<path d="M1897.0 945.0L1879.0 909.0L1915.0 909.0Z" fill="#4a4a50"/>
<circle cx="1895.0" cy="947.0" r="3.2" fill="#f2f2f2" stroke="#6a6a70" stroke-width="1.6"/>
<path d="M1987.0 1068.0L1955.7 1067.2L1968.9 1042.5Z" fill="#e8e8e8"/>
<circle cx="1987.0" cy="1068.0" r="3.2" fill="#f2f2f2" stroke="#6a6a70" stroke-width="1.6"/>
<path d="M1880.0 1126.0L1842.1 1123.7L1859.1 1094.3Z" fill="#e8e8e8"/>
<path d="M1886.0 1118.0L1852.1 1106.7L1874.7 1084.1Z" fill="#e8e8e8"/>
<path d="M1878.0 1134.0L1845.1 1140.7L1852.9 1111.7Z" fill="#e8e8e8"/>
<circle cx="1875.0" cy="1120.0" r="3.2" fill="#f2f2f2" stroke="#6a6a70" stroke-width="1.6"/>
<circle cx="1885.0" cy="1117.0" r="3.2" fill="#f2f2f2" stroke="#6a6a70" stroke-width="1.6"/>
<circle cx="1888.0" cy="1128.0" r="3.2" fill="#f2f2f2" stroke="#6a6a70" stroke-width="1.6"/>
<circle cx="1878.0" cy="1132.0" r="3.2" fill="#f2f2f2" stroke="#6a6a70" stroke-width="1.6"/>
<path d="M2032.0 1324.0L2000.8 1321.0L2015.7 1297.3Z" fill="#e8e8e8"/>
<circle cx="2032.0" cy="1324.0" r="3.2" fill="#f2f2f2" stroke="#6a6a70" stroke-width="1.6"/>
<path d="M2385.0 1441.0L2354.0 1436.4L2370.1 1413.5Z" fill="#e8e8e8"/>
<circle cx="2386.0" cy="1442.0" r="3.2" fill="#f2f2f2" stroke="#6a6a70" stroke-width="1.6"/>
<path d="M2561.0 1055.0L2529.8 1053.1L2543.8 1028.9Z" fill="#e8e8e8"/>
<circle cx="2562.0" cy="1056.0" r="3.2" fill="#f2f2f2" stroke="#6a6a70" stroke-width="1.6"/>
<path d="M2600.0 1108.0L2566.8 1103.1L2584.0 1078.5Z" fill="#e8e8e8"/>
<path d="M2593.0 1114.0L2561.8 1112.1L2575.8 1087.9Z" fill="#e8e8e8"/>
<circle cx="2603.0" cy="1107.0" r="3.2" fill="#f2f2f2" stroke="#6a6a70" stroke-width="1.6"/>
<circle cx="2595.0" cy="1115.0" r="3.2" fill="#f2f2f2" stroke="#6a6a70" stroke-width="1.6"/>
<path d="M2568.0 1152.0L2534.6 1148.8L2550.5 1123.4Z" fill="#e8e8e8"/>
<path d="M2574.0 1161.0L2542.7 1161.9L2554.5 1136.5Z" fill="#e8e8e8"/>
<circle cx="2568.0" cy="1153.0" r="3.2" fill="#f2f2f2" stroke="#6a6a70" stroke-width="1.6"/>
<circle cx="2575.0" cy="1161.0" r="3.2" fill="#f2f2f2" stroke="#6a6a70" stroke-width="1.6"/>
<path d="M2627.0 1152.0L2593.8 1147.1L2611.0 1122.5Z" fill="#e8e8e8"/>
<circle cx="2628.0" cy="1153.0" r="3.2" fill="#f2f2f2" stroke="#6a6a70" stroke-width="1.6"/>
<path d="M2903.0 1135.0L2871.8 1133.1L2885.8 1108.9Z" fill="#e8e8e8"/>
<circle cx="2904.0" cy="1136.0" r="3.2" fill="#f2f2f2" stroke="#6a6a70" stroke-width="1.6"/>
<path d="M3003.0 1232.0L2971.8 1229.0L2986.7 1205.3Z" fill="#e8e8e8"/>
<circle cx="3004.0" cy="1233.0" r="3.2" fill="#f2f2f2" stroke="#6a6a70" stroke-width="1.6"/>
<path d="M3503.0 701.5L3475.6 704.4L3480.0 678.0Z" fill="#d6d6d6"/>
<circle cx="3506.0" cy="703.0" r="3.2" fill="#f2f2f2" stroke="#6a6a70" stroke-width="1.6"/>
<circle cx="3466.5" cy="1032" r="4" fill="#45454b"/>
<circle cx="1293.0" cy="952.0" r="2.6" fill="#f2f2f2" stroke="#6a6a70" stroke-width="1.6"/>
<path d="M2607 1112l37 0l-16 41z" fill="#4a4a50" fill-opacity=".85"/>
<circle cx="2629" cy="1118" r="3" fill="#4e4e54" stroke="#3c3c42" stroke-width="1"/>
<circle cx="2646" cy="1119" r="3" fill="#4e4e54" stroke="#3c3c42" stroke-width="1"/>
<circle cx="2637" cy="1124" r="3" fill="#4e4e54" stroke="#3c3c42" stroke-width="1"/>
<circle cx="2616" cy="1128" r="3" fill="#4e4e54" stroke="#3c3c42" stroke-width="1"/>
<circle cx="2626" cy="1129" r="3" fill="#4e4e54" stroke="#3c3c42" stroke-width="1"/>
<circle cx="2648" cy="1129" r="3" fill="#4e4e54" stroke="#3c3c42" stroke-width="1"/>
<circle cx="2633" cy="1137" r="3" fill="#4e4e54" stroke="#3c3c42" stroke-width="1"/>
<circle cx="2643" cy="1140" r="3" fill="#4e4e54" stroke="#3c3c42" stroke-width="1"/>
<circle cx="2653" cy="1137" r="3" fill="#4e4e54" stroke="#3c3c42" stroke-width="1"/>
<circle cx="1385" cy="1034" r="3.5" fill="#3b3b41"/>
<circle cx="1397" cy="1036" r="3.5" fill="#3b3b41"/>
<circle cx="1382" cy="1046" r="3.5" fill="#3b3b41"/>
<circle cx="1393" cy="1048" r="3.5" fill="#3b3b41"/>
<circle cx="3090" cy="92" r="3.5" fill="#3b3b41"/>
<circle cx="3098" cy="92" r="3.5" fill="#3b3b41"/>
<circle cx="3105" cy="90" r="3.5" fill="#3b3b41"/>
<circle cx="3167" cy="1257" r="3.5" fill="#3b3b41"/>
<circle cx="2954" cy="1478" r="3.5" fill="#3b3b41"/>
</svg>
<div class="b" style="left:0px;top:0px;width:3822px;height:80px;background:#fff;border-bottom:2px solid #c6c6c6;border-radius:0 0 0 8px"></div>
<div class="t" style="left:21.0px;top:26.0px;font:400 22.5px/1 'Liberation Sans',sans-serif;color:#1d1d21;transform:scaleX(0.9948);transform-origin:0 0;-webkit-text-stroke:0.5px #1d1d21;">GRAPH</div>
<svg class="b" style="left:130.0px;top:25.8px;" width="24" height="24" viewBox="0 0 24 24"><circle cx="12" cy="12" r="12" fill="#666"/><path d="M8.6 5.8 L18.6 12 L8.6 18.2Z" fill="#fff"/></svg>
<svg class="b" style="left:206.0px;top:24.0px;" width="28" height="28" viewBox="-0.5 0 28.5 28"><path fill="#666" d="M26.3 0.3C27.6 0.3 28.3 1.8 27.8 3.2C26 8 22.5 14 20.3 16.8C18.8 18.6 16.6 19 14.8 17.600L13 15.400C11.800 13.800 12 11.600 13.400 10.400C17 7.400 22 3 24.600 0.900C25.100 0.500 25.700 0.300 26.300 0.300Z"/>
<path fill="#666" d="M11.2 16.4L14.6 20C15.6 23.6 12.4 27.8 7.6 27.8C3.2 27.8 0.2 24.2 -0.2 19.4C0.8 20.6 2 21.2 3 20.6C4 20 4 17.8 6.4 16.6C8 15.8 9.8 15.6 11.2 16.4Z"/></svg>
<div class="t" style="left:285.0px;top:20.5px;font:700 35px/1 'Liberation Serif',serif;color:#666;">A</div>
<svg class="b" style="left:360.5px;top:24.4px;" width="31" height="27.125" viewBox="0 0 32 28"><path fill="#666" fill-rule="evenodd" d="M21.41 13.01 L21.41 16.99 L18.61 17.11 L17.88 18.89 L19.77 20.96 L16.96 23.77 L14.89 21.88 L13.11 22.61 L12.99 25.41 L9.01 25.41 L8.89 22.61 L7.11 21.88 L5.04 23.77 L2.23 20.96 L4.12 18.89 L3.39 17.11 L0.59 16.99 L0.59 13.01 L3.39 12.89 L4.12 11.11 L2.23 9.04 L5.04 6.23 L7.11 8.12 L8.89 7.39 L9.01 4.59 L12.99 4.59 L13.11 7.39 L14.89 8.12 L16.96 6.23 L19.77 9.04 L17.88 11.11 L18.61 12.89Z M15.40 15.00 A4.4 4.4 0 1 0 6.60 15.00 A4.4 4.4 0 1 0 15.40 15.00Z M31.30 5.39 L31.30 7.61 L29.35 7.57 L28.98 8.47 L30.38 9.82 L28.82 11.38 L27.47 9.98 L26.57 10.35 L26.61 12.30 L24.39 12.30 L24.43 10.35 L23.53 9.98 L22.18 11.38 L20.62 9.82 L22.02 8.47 L21.65 7.57 L19.70 7.61 L19.70 5.39 L21.65 5.43 L22.02 4.53 L20.62 3.18 L22.18 1.62 L23.53 3.02 L24.43 2.65 L24.39 0.70 L26.61 0.70 L26.57 2.65 L27.47 3.02 L28.82 1.62 L30.38 3.18 L28.98 4.53 L29.35 5.43Z M27.70 6.50 A2.2 2.2 0 1 0 23.30 6.50 A2.2 2.2 0 1 0 27.70 6.50Z M31.30 21.39 L31.30 23.61 L29.35 23.57 L28.98 24.47 L30.38 25.82 L28.82 27.38 L27.47 25.98 L26.57 26.35 L26.61 28.30 L24.39 28.30 L24.43 26.35 L23.53 25.98 L22.18 27.38 L20.62 25.82 L22.02 24.47 L21.65 23.57 L19.70 23.61 L19.70 21.39 L21.65 21.43 L22.02 20.53 L20.62 19.18 L22.18 17.62 L23.53 19.02 L24.43 18.65 L24.39 16.70 L26.61 16.70 L26.57 18.65 L27.47 19.02 L28.82 17.62 L30.38 19.18 L28.98 20.53 L29.35 21.43Z M27.70 22.50 A2.2 2.2 0 1 0 23.30 22.50 A2.2 2.2 0 1 0 27.70 22.50Z"/></svg>
<div class="b" style="left:416px;top:0px;width:2px;height:78px;background:#ccc"></div>
<div class="t" style="left:953.0px;top:26.0px;font:400 22.5px/1 'Liberation Sans',sans-serif;color:#1d1d21;letter-spacing:0.07px;-webkit-text-stroke:0.5px #1d1d21;">INTERACT</div>
<svg class="b" style="left:1093.2px;top:22.1px;" width="26.571428571428573" height="31" viewBox="0 0 24 28"><path fill="#666" d="M5 2 L5 23 L10.2 18.3 L14 27 L17.6 25.400000000000002 L13.8 16.8 L20.6 16.6Z"/></svg>
<svg class="b" style="left:1173.8px;top:25.8px;" width="22.5" height="22.5" viewBox="0 0 24 24"><rect x="1.5" y="1.5" width="21" height="21" rx="4" fill="none" stroke="#666" stroke-width="2.2"/></svg>
<div class="b" style="left:1225px;top:0px;width:2px;height:78px;background:#ccc"></div>
<div class="t" style="left:1763.0px;top:26.0px;font:400 22.5px/1 'Liberation Sans',sans-serif;color:#1d1d21;transform:scaleX(0.9824);transform-origin:0 0;-webkit-text-stroke:0.5px #1d1d21;">FILTER</div>
<svg class="b" style="left:1867.0px;top:28.0px;" width="22" height="22" viewBox="0 0 24 24"><path fill="#666" d="M1.2 1 H22.8 c.8 0 1.2.9.6 1.5 L15 11.2 V23 l-6 -4.6 V11.2 L.6 2.5 C0 1.9.4 1 1.2 1Z"/></svg>
<div class="t" style="left:1889.5px;top:11.1px;font:700 23.5px/1 'Liberation Sans',sans-serif;color:#2a2a2a;">1</div>
<svg class="b" style="left:1944.0px;top:26.0px;" width="24" height="24" viewBox="0 0 24 24"><circle cx="12" cy="12" r="10.4" fill="none" stroke="#666" stroke-width="3.2"/><path d="M4.6 19.4 L19.4 4.6" stroke="#666" stroke-width="3.2"/></svg>
<div class="b" style="left:1996px;top:0px;width:2px;height:78px;background:#ccc"></div>
<div class="t" style="left:2533.0px;top:26.0px;font:400 22.5px/1 'Liberation Sans',sans-serif;color:#1d1d21;letter-spacing:0.08px;-webkit-text-stroke:0.5px #1d1d21;">INSPECT</div>
<div class="b" style="left:2632px;top:0px;width:237px;height:78px;background:#fff;box-shadow:inset 0 8px 12px -6px rgba(0,0,0,.22),inset 8px 0 10px -8px rgba(0,0,0,.12),inset -8px 0 10px -8px rgba(0,0,0,.12)"></div>
<div class="b" style="left:2704px;top:0px;width:92px;height:78px;background:#fff;border-left:5.5px solid #8fc1f5;border-right:5.5px solid #8fc1f5"></div>
<div class="b" style="left:2704px;top:78px;width:92px;height:6px;background:#2a619f"></div>
<svg class="b" style="left:2656.2px;top:25.0px;" width="32" height="25.0" viewBox="0 0 32 25"><path fill="#333" d="M0 0h2.6v22.4H32V25H0z M5.4 13.5h3.8v7H5.4z M11.4 6.5h3.8v14h-3.8z M17.4 10.5h3.8v10h-3.8z M23.4 3h3.8v17.5h-3.8z"/></svg>
<svg class="b" style="left:2736.9px;top:26.6px;" width="26.5" height="20.821428571428573" viewBox="0 0 28 22"><path fill="#333" fill-rule="evenodd" d="M2.5 0h23A2.5 2.5 0 0 1 28 2.5v17A2.5 2.5 0 0 1 25.5 22h-23A2.5 2.5 0 0 1 0 19.5v-17A2.5 2.5 0 0 1 2.500 0z M2 4.400v3.8h6.600v-3.800z M10.600 4.400v3.800h6.800v-3.800z M19.400 4.400v3.800H26v-3.800z M2 10.200v3.800h6.600v-3.800z M10.600 10.200v3.800h6.800v-3.800z M19.400 10.200v3.800H26v-3.800z M2 16v3.800h6.600V16z M10.600 16v3.800h6.800V16z M19.400 16v3.800H26V16z"/></svg>
<svg class="b" style="left:2814.0px;top:23.5px;" width="28" height="28" viewBox="0 0 28 28"><circle cx="14" cy="14" r="14" fill="#2b2b2b"/><path d="M11.500 9.800 H22 L16.500 18.200 H6Z" fill="#fff"/></svg>
<div class="b" style="left:2868px;top:0px;width:2px;height:78px;background:#ccc"></div>
<div class="t" style="left:3405.0px;top:26.0px;font:400 22.5px/1 'Liberation Sans',sans-serif;color:#1d1d21;letter-spacing:0.57px;-webkit-text-stroke:0.5px #1d1d21;">WORKBOOK</div>
<svg class="b" style="left:3569.0px;top:23.0px;" width="29" height="26.0" viewBox="0 0 29 26"><path fill="none" stroke="#6b6b6b" stroke-width="2.200" stroke-linecap="round" stroke-linejoin="round" d="M20.500 15.500v6a3 3 0 0 1-3 3h-13a3 3 0 0 1-3-3v-13a3 3 0 0 1 3-3h7.500"/>
<path fill="#6b6b6b" d="M17.500 1h9.500a1 1 0 0 1 1 1v9.500c0 .9-1 1.300-1.700.700l-3-3-8.800 8.800a1 1 0 0 1-1.400 0l-2-2a1 1 0 0 1 0-1.400l8.800-8.800-3-3C16.200 2 16.600 1 17.500 1z"/></svg>
<svg class="b" style="left:3649.8px;top:25.8px;" width="24.5" height="24.5" viewBox="0 0 24 24"><path fill="#6b6b6b" d="M14 0h10v10l-3.600-3.600-5 5-2.800-2.800 5-5z M10 24H0V14l3.600 3.600 5-5 2.800 2.800-5 5z"/></svg>
<div class="b" style="left:3712px;top:11px;width:130px;height:60.5px;background:#3ba4c9;border-radius:10px"></div>
<div class="t" style="left:3722.0px;top:24.2px;font:700 31.2px/1 'Liberation Sans',sans-serif;color:#fff;transform:scaleX(0.8790);transform-origin:0 0;-webkit-text-stroke:0.5px #fff;">SHARE</div>
<svg class="b" style="left:26.8px;top:111.5px;" width="26" height="26" viewBox="0 0 26 26"><circle cx="10.2" cy="10.2" r="8.200" fill="none" stroke="#a3a3a3" stroke-width="4"/><path d="M17 17 L24 24" stroke="#a3a3a3" stroke-width="4.600" stroke-linecap="round"/><path d="M5.600 10.200 H14.800" stroke="#a3a3a3" stroke-width="2.800"/><path d="M10.200 5.600 V14.800" stroke="#a3a3a3" stroke-width="2.800"/></svg>
<svg class="b" style="left:26.8px;top:161.8px;" width="26" height="26" viewBox="0 0 26 26"><circle cx="10.2" cy="10.2" r="8.200" fill="none" stroke="#a3a3a3" stroke-width="4"/><path d="M17 17 L24 24" stroke="#a3a3a3" stroke-width="4.600" stroke-linecap="round"/><path d="M5.600 10.200 H14.800" stroke="#a3a3a3" stroke-width="2.800"/></svg>
<svg class="b" style="left:27.3px;top:211.1px;" width="25" height="25" viewBox="0 0 24 24"><circle cx="12" cy="12" r="7" fill="none" stroke="#a3a3a3" stroke-width="3.400"/><path d="M12 1.800V5.500 M12 18.500V22.200 M1.800 12H5.500 M18.500 12H22.200" stroke="#a3a3a3" stroke-width="4.400" stroke-linecap="round"/></svg>
<div class="t" style="left:35.0px;top:1322.0px;font:700 30.5px/1 'Liberation Sans',sans-serif;color:#b4b4ad;letter-spacing:0.38px;">NODES</div>
<div class="t" style="left:159.0px;top:1318.1px;font:400 39px/1 'Liberation Mono',monospace;color:#adadb1;transform:scaleX(0.8972);transform-origin:0 0;">8527</div>
<div class="t" style="left:41.0px;top:1375.2px;font:700 30.5px/1 'Liberation Sans',sans-serif;color:#b4b4ad;transform:scaleX(0.9739);transform-origin:0 0;">EDGES</div>
<div class="t" style="left:183.0px;top:1371.1px;font:400 39px/1 'Liberation Mono',monospace;color:#adadb1;transform:scaleX(0.8545);transform-origin:0 0;">158</div>
<div class="b" style="left:33px;top:1427px;width:25px;height:25px;background:#b4b4ad;border:2px solid #4a4a46;border-radius:4px"></div>
<div class="b" style="left:33px;top:1475px;width:25px;height:25px;background:#b4b4ad;border:2px solid #4a4a46;border-radius:4px"></div>
<div class="t" style="left:69.0px;top:1429.2px;font:400 26px/1 'Liberation Sans',sans-serif;color:#b4b4ad;letter-spacing:0.13px;-webkit-text-stroke:0.3px #b4b4ad;">HIDE STANDALONE NODES</div>
<div class="t" style="left:69.0px;top:1477.5px;font:400 26px/1 'Liberation Sans',sans-serif;color:#b4b4ad;transform:scaleX(0.9834);transform-origin:0 0;-webkit-text-stroke:0.3px #b4b4ad;">SHOW PROPERTIES</div>
<div class="b" style="left:938.5px;top:762px;width:92px;height:60px;background:rgba(60,60,61,.95);border-radius:7px"></div>
<svg class="b" style="left:969px;top:753px" width="16" height="9" viewBox="0 0 16 9"><path d="M0 9L8 0L16 9Z" fill="#3c3c3d"/></svg>
<div class="t" style="left:956.0px;top:777.0px;font:700 29px/1 'Liberation Sans',sans-serif;color:#dadada;transform:scaleX(0.9998);transform-origin:0 0;text-decoration:underline;text-decoration-thickness:1.6px;text-underline-offset:4px;">Arts</div>
<div class="b" style="left:835px;top:890px;width:222px;height:56px;background:rgba(41,40,46,.45)"></div>
<div class="t" style="left:849.0px;top:903.3px;font:700 28px/1 'Liberation Sans',sans-serif;color:#f4f4f4;letter-spacing:0.87px;text-shadow:0 0 3px #29282e,0 0 3px #29282e;">desege.trip...</div>
<div class="t" style="left:2480.0px;top:812.7px;font:700 27.5px/1 'Liberation Sans',sans-serif;color:#ececec;letter-spacing:0.14px;">Kids</div>
<div class="b" style="left:3310px;top:98px;width:509px;height:208px;background:#fff;border-radius:7px 7px 5px 5px;overflow:hidden;box-shadow:0 2px 10px rgba(0,0,0,.35)"></div>
<div class="b" style="left:3310px;top:305px;width:509px;height:387px;background:#fff;border-radius:3px 3px 7px 7px;box-shadow:0 2px 10px rgba(0,0,0,.35)"></div>
<div class="b" style="left:3310px;top:98px;width:509px;height:92px;background:#f9f9f9;border-radius:7px 7px 0 0"></div>
<div class="b" style="left:3310px;top:190px;width:509px;height:50px;background:#eeeeee"></div>
<div class="b" style="left:3479px;top:190px;width:2px;height:50px;background:#ececec"></div>
<div class="b" style="left:3649px;top:190px;width:2px;height:50px;background:#ececec"></div>
<div class="b" style="left:3342px;top:115.5px;width:57px;height:57px;background:#c1c1c1;border:2px solid #333;border-radius:50%"></div>
<div class="t" style="left:3420.0px;top:129.6px;font:700 31px/1 'Liberation Sans',sans-serif;color:#111;transform:scaleX(0.8888);transform-origin:0 0;">Society</div>
<svg class="b" style="left:3384.2px;top:206.6px;" width="19.5" height="19.5" viewBox="0 0 24 24"><path fill="#666" d="M1.2 1 H22.8 c.8 0 1.2.9.6 1.5 L15 11.2 V23 l-6 -4.6 V11.2 L.6 2.5 C0 1.9.4 1 1.2 1Z"/></svg>
<svg class="b" style="left:3553.2px;top:205.1px;" width="20.5" height="20.5" viewBox="0 0 24 24"><circle cx="12" cy="12" r="10.25" fill="none" stroke="#666" stroke-width="3.5"/><path d="M4.6 19.4 L19.4 4.6" stroke="#666" stroke-width="3.5"/></svg>
<svg class="b" style="left:3719.5px;top:201.0px;" width="29" height="29" viewBox="0 0 24 24"><g transform="rotate(-45 12 12)"><path fill="none" stroke="#666" stroke-width="1.700" stroke-linecap="round" d="M8.500 6 V18.500 a3.500 3.500 0 0 0 7 0 V5.500 a2.500 2.500 0 0 0 -5 0 V17.500 a1 1 0 0 0 2.500 0 V8"/></g></svg>
<div class="t" style="left:3325.0px;top:251.8px;font:400 24.5px/1 'Liberation Sans',sans-serif;color:#2a2a2a;letter-spacing:0.57px;-webkit-text-stroke:0.25px #2a2a2a;">type</div>
<div class="dash" style="left:3310px;top:286px;width:509px"></div>
<div class="t" style="left:3341.0px;top:334.3px;font:700 25px/1 'Liberation Sans',sans-serif;color:#111;letter-spacing:1.33px;">ALL PROPERTIES</div>
<div class="t" style="left:3325.0px;top:395.3px;font:400 24.5px/1 'Liberation Sans',sans-serif;color:#2a2a2a;letter-spacing:0.34px;-webkit-text-stroke:0.25px #2a2a2a;">degree</div>
<div class="t" style="left:3791.4px;top:395.3px;font:400 24.5px/1 'Liberation Sans',sans-serif;color:#2a2a2a;-webkit-text-stroke:0.25px #2a2a2a;">2</div>
<div class="dash" style="left:3310px;top:429px;width:509px"></div>
<div class="t" style="left:3325.0px;top:443.3px;font:400 24.5px/1 'Liberation Sans',sans-serif;color:#2a2a2a;letter-spacing:0.25px;-webkit-text-stroke:0.25px #2a2a2a;">degree_in</div>
<div class="t" style="left:3791.4px;top:443.3px;font:400 24.5px/1 'Liberation Sans',sans-serif;color:#2a2a2a;-webkit-text-stroke:0.25px #2a2a2a;">1</div>
<div class="dash" style="left:3310px;top:477px;width:509px"></div>
<div class="t" style="left:3325.0px;top:491.3px;font:400 24.5px/1 'Liberation Sans',sans-serif;color:#2a2a2a;letter-spacing:0.45px;-webkit-text-stroke:0.25px #2a2a2a;">degree_out</div>
<div class="t" style="left:3791.4px;top:491.3px;font:400 24.5px/1 'Liberation Sans',sans-serif;color:#2a2a2a;-webkit-text-stroke:0.25px #2a2a2a;">1</div>
<div class="dash" style="left:3310px;top:525px;width:509px"></div>
<div class="t" style="left:3325.0px;top:539.3px;font:400 24.5px/1 'Liberation Sans',sans-serif;color:#2a2a2a;transform:scaleX(0.9964);transform-origin:0 0;-webkit-text-stroke:0.25px #2a2a2a;">id</div>
<div class="t" style="left:3777.0px;top:539.3px;font:400 24.5px/1 'Liberation Sans',sans-serif;color:#2a2a2a;letter-spacing:0.75px;-webkit-text-stroke:0.25px #2a2a2a;">26</div>
<div class="dash" style="left:3310px;top:573px;width:509px"></div>
<div class="t" style="left:3325.0px;top:587.3px;font:400 24.5px/1 'Liberation Sans',sans-serif;color:#2a2a2a;letter-spacing:0.17px;-webkit-text-stroke:0.25px #2a2a2a;">node</div>
<div class="t" style="left:3722.0px;top:587.3px;font:400 24.5px/1 'Liberation Sans',sans-serif;color:#2a2a2a;letter-spacing:0.44px;-webkit-text-stroke:0.25px #2a2a2a;">Society</div>
<div class="dash" style="left:3310px;top:621px;width:509px"></div>
<div class="t" style="left:3325.0px;top:635.3px;font:400 24.5px/1 'Liberation Sans',sans-serif;color:#2a2a2a;letter-spacing:0.57px;-webkit-text-stroke:0.25px #2a2a2a;">type</div>
<div class="dash" style="left:3310px;top:669px;width:509px"></div>
<div class="b" style="left:3310px;top:1095.5px;width:509px;height:75px;background:#fff;border:2px solid #ccc;border-radius:8px"></div>
<div class="t" style="left:3332.5px;top:1122.1px;font:400 24.5px/1 'Liberation Sans',sans-serif;color:#808080;letter-spacing:0.50px;">Add histogram for...</div>
<div class="b" style="left:3744px;top:1113px;width:2px;height:39px;background:#ccc"></div>
<svg class="b" style="left:3767.5px;top:1119.5px;" width="27" height="27" viewBox="0 0 24 24"><path d="M3 7.500 L12 16 L21 7.500" fill="none" stroke="#ccc" stroke-width="3.400" stroke-linecap="round" stroke-linejoin="round"/></svg>
<div class="b" style="left:3310px;top:1191px;width:509px;height:320px;background:#fafafa;border-radius:7px;box-shadow:0 2px 8px rgba(0,0,0,.3)"></div>
<div class="b" style="left:3310px;top:1247px;width:509px;height:2px;background:#dee2e6"></div>
<div class="b" style="left:3472px;top:1192.5px;width:124px;height:57px;background:#fff;border:2px solid #dee2e6;border-bottom:0;border-radius:7px 7px 0 0"></div>
<div class="t" style="left:3343.0px;top:1211.1px;font:400 23.5px/1 'Liberation Sans',sans-serif;color:#4f5b66;transform:scaleX(0.9830);transform-origin:0 0;">LEGEND</div>
<div class="t" style="left:3504.0px;top:1211.1px;font:400 23.5px/1 'Liberation Sans',sans-serif;color:#3c4650;transform:scaleX(0.9775);transform-origin:0 0;">TYPE</div>
<div class="b" style="left:3311px;top:1253px;width:105px;height:49px;background:repeating-linear-gradient(-135deg,#e9e9e9 0,#e9e9e9 17px,#f5f5f5 17px,#f5f5f5 34px);"></div>
<div class="b" style="left:3609px;top:1253px;width:106px;height:49px;background:repeating-linear-gradient(-135deg,#e9e9e9 0,#e9e9e9 17px,#f5f5f5 17px,#f5f5f5 34px);"></div>
<div class="t" style="left:3328.5px;top:1261.3px;font:700 24.5px/1 'Liberation Sans',sans-serif;color:#b0b0b0;letter-spacing:1.26px;">Color</div>
<div class="t" style="left:3483.5px;top:1261.3px;font:700 24.5px/1 'Liberation Sans',sans-serif;color:#4a4a4a;letter-spacing:2.21px;">type</div>
<div class="t" style="left:3635.0px;top:1261.3px;font:700 24.5px/1 'Liberation Sans',sans-serif;color:#b0b0b0;letter-spacing:1.21px;">Icon</div>
<div class="t" style="left:3728.5px;top:1261.3px;font:700 24.5px/1 'Liberation Sans',sans-serif;color:#4a4a4a;letter-spacing:1.56px;">Count</div>
<div class="b" style="left:3330px;top:1314px;width:81px;height:39px;background:repeating-linear-gradient(-135deg,#e9e9e9 0,#e9e9e9 17px,#f5f5f5 17px,#f5f5f5 34px);"></div>
<div class="b" style="left:3619px;top:1314px;width:81px;height:39px;background:repeating-linear-gradient(-135deg,#e9e9e9 0,#e9e9e9 17px,#f5f5f5 17px,#f5f5f5 34px);"></div>
<div class="b" style="left:3649px;top:1333px;width:21px;height:2px;background:#aaa"></div>
<div class="b" style="left:3330px;top:1370px;width:81px;height:39px;background:repeating-linear-gradient(-135deg,#e9e9e9 0,#e9e9e9 17px,#f5f5f5 17px,#f5f5f5 34px);"></div>
<div class="b" style="left:3619px;top:1370px;width:81px;height:39px;background:repeating-linear-gradient(-135deg,#e9e9e9 0,#e9e9e9 17px,#f5f5f5 17px,#f5f5f5 34px);"></div>
<div class="b" style="left:3649px;top:1389px;width:21px;height:2px;background:#aaa"></div>
<div class="t" style="left:3489.0px;top:1321.8px;font:400 24.5px/1 'Liberation Sans',sans-serif;color:#555;letter-spacing:1.90px;">host</div>
<div class="t" style="left:3743.5px;top:1321.8px;font:400 24.5px/1 'Liberation Sans',sans-serif;color:#555;letter-spacing:1.11px;">8511</div>
<div class="t" style="left:3772.5px;top:1377.8px;font:400 24.5px/1 'Liberation Sans',sans-serif;color:#555;transform:scaleX(0.9909);transform-origin:0 0;">15</div>
<div class="t" style="left:3317.0px;top:1428.4px;font:400 25.5px/1 'Liberation Sans',sans-serif;color:#111;letter-spacing:0.66px;">Colors</div>
<div class="dash" style="left:3407px;top:1448px;width:311px;border-color:#bbb"></div>
<div class="t" style="left:3732.0px;top:1428.4px;font:italic 400 25.5px/1 'Liberation Sans',sans-serif;color:#111;letter-spacing:0.98px;">cluster</div>
<div class="t" style="left:3317.0px;top:1475.4px;font:400 25.5px/1 'Liberation Sans',sans-serif;color:#111;transform:scaleX(0.9943);transform-origin:0 0;">Sizes</div>
<div class="dash" style="left:3393px;top:1495px;width:323px;border-color:#bbb"></div>
<div class="t" style="left:3730.0px;top:1475.4px;font:400 25.5px/1 'Liberation Sans',sans-serif;color:#111;letter-spacing:0.72px;">degree</div>
<div class="b" style="left:20px;top:1529px;width:3799px;height:570px;background:#f9f9f9;border-radius:7px 7px 0 0"></div>
<div class="b" style="left:20px;top:1590.5px;width:3799px;height:1.5px;background:#e0e4e9"></div>
<div class="b" style="left:20px;top:1531px;width:166px;height:61px;background:#fff;border:2px solid #dee2e6;border-bottom:0;border-radius:7px 7px 0 0"></div>
<div class="t" style="left:54.5px;top:1551.3px;font:400 25px/1 'Liberation Sans',sans-serif;color:#3c4650;letter-spacing:0.69px;-webkit-text-stroke:0.4px #3c4650;">POINTS</div>
<div class="t" style="left:220.0px;top:1551.3px;font:400 25px/1 'Liberation Sans',sans-serif;color:#1479f0;transform:scaleX(0.9940);transform-origin:0 0;-webkit-text-stroke:0.4px #1479f0;">EDGES</div>
<div class="b" style="left:35px;top:1603.5px;width:69px;height:49.5px;background:#fafafa;border:2px solid #ccc;border-radius:8px"></div>
<svg class="b" style="left:51.5px;top:1618.2px;" width="36" height="31.5" viewBox="0 0 32 28"><path fill="#333" fill-rule="evenodd" d="M21.41 13.01 L21.41 16.99 L18.61 17.11 L17.88 18.89 L19.77 20.96 L16.96 23.77 L14.89 21.88 L13.11 22.61 L12.99 25.41 L9.01 25.41 L8.89 22.61 L7.11 21.88 L5.04 23.77 L2.23 20.96 L4.12 18.89 L3.39 17.11 L0.59 16.99 L0.59 13.01 L3.39 12.89 L4.12 11.11 L2.23 9.04 L5.04 6.23 L7.11 8.12 L8.89 7.39 L9.01 4.59 L12.99 4.59 L13.11 7.39 L14.89 8.12 L16.96 6.23 L19.77 9.04 L17.88 11.11 L18.61 12.89Z M15.40 15.00 A4.4 4.4 0 1 0 6.60 15.00 A4.4 4.4 0 1 0 15.40 15.00Z M31.30 5.39 L31.30 7.61 L29.35 7.57 L28.98 8.47 L30.38 9.82 L28.82 11.38 L27.47 9.98 L26.57 10.35 L26.61 12.30 L24.39 12.30 L24.43 10.35 L23.53 9.98 L22.18 11.38 L20.62 9.82 L22.02 8.47 L21.65 7.57 L19.70 7.61 L19.70 5.39 L21.65 5.43 L22.02 4.53 L20.62 3.18 L22.18 1.62 L23.53 3.02 L24.43 2.65 L24.39 0.70 L26.61 0.70 L26.57 2.65 L27.47 3.02 L28.82 1.62 L30.38 3.18 L28.98 4.53 L29.35 5.43Z M27.70 6.50 A2.2 2.2 0 1 0 23.30 6.50 A2.2 2.2 0 1 0 27.70 6.50Z M31.30 21.39 L31.30 23.61 L29.35 23.57 L28.98 24.47 L30.38 25.82 L28.82 27.38 L27.47 25.98 L26.57 26.35 L26.61 28.30 L24.39 28.30 L24.43 26.35 L23.53 25.98 L22.18 27.38 L20.62 25.82 L22.02 24.47 L21.65 23.57 L19.70 23.61 L19.70 21.39 L21.65 21.43 L22.02 20.53 L20.62 19.18 L22.18 17.62 L23.53 19.02 L24.43 18.65 L24.39 16.70 L26.61 16.70 L26.57 18.65 L27.47 19.02 L28.82 17.62 L30.38 19.18 L28.98 20.53 L29.35 21.43Z M27.70 22.50 A2.2 2.2 0 1 0 23.30 22.50 A2.2 2.2 0 1 0 27.70 22.50Z"/></svg>
<div class="b" style="left:119px;top:1601.5px;width:1167px;height:49px;background:#fff;border:2px solid #c8cfd8;border-radius:2px 7px 7px 2px"></div>
<div class="t" style="left:145.0px;top:1612.1px;font:400 30px/1 'Liberation Sans',sans-serif;color:#68727c;letter-spacing:0.99px;-webkit-text-stroke:0.3px #68727c;">Search</div>
<div class="b" style="left:1408px;top:1601px;width:92px;height:49.5px;background:#337ab7"></div>
<div class="t" style="left:1358.2px;top:1601.9px;font:400 35px/1 'Liberation Sans',sans-serif;color:#2a2a2a;">‹</div>
<div class="t" style="left:1447.5px;top:1610.6px;font:400 23.5px/1 'Liberation Sans',sans-serif;color:#fff;-webkit-text-stroke:0.4px #fff;">1</div>
<div class="t" style="left:1539.5px;top:1610.6px;font:400 23.5px/1 'Liberation Sans',sans-serif;color:#2a2a2a;-webkit-text-stroke:0.3px #2a2a2a;">2</div>
<div class="t" style="left:1631.1px;top:1610.6px;font:400 23.5px/1 'Liberation Sans',sans-serif;color:#2a2a2a;-webkit-text-stroke:0.3px #2a2a2a;">3</div>
<div class="t" style="left:1722.7px;top:1610.6px;font:400 23.5px/1 'Liberation Sans',sans-serif;color:#2a2a2a;-webkit-text-stroke:0.3px #2a2a2a;">4</div>
<div class="t" style="left:1814.3px;top:1610.6px;font:400 23.5px/1 'Liberation Sans',sans-serif;color:#2a2a2a;-webkit-text-stroke:0.3px #2a2a2a;">5</div>
<div class="t" style="left:1905.9px;top:1610.6px;font:400 23.5px/1 'Liberation Sans',sans-serif;color:#2a2a2a;-webkit-text-stroke:0.3px #2a2a2a;">6</div>
<div class="t" style="left:1997.5px;top:1610.6px;font:400 23.5px/1 'Liberation Sans',sans-serif;color:#2a2a2a;-webkit-text-stroke:0.3px #2a2a2a;">7</div>
<div class="t" style="left:2089.1px;top:1610.6px;font:400 23.5px/1 'Liberation Sans',sans-serif;color:#2a2a2a;-webkit-text-stroke:0.3px #2a2a2a;">8</div>
<div class="t" style="left:2180.7px;top:1610.6px;font:400 23.5px/1 'Liberation Sans',sans-serif;color:#2a2a2a;-webkit-text-stroke:0.3px #2a2a2a;">9</div>
<div class="t" style="left:2265.7px;top:1610.6px;font:400 23.5px/1 'Liberation Sans',sans-serif;color:#2a2a2a;-webkit-text-stroke:0.3px #2a2a2a;">10</div>
<div class="t" style="left:2358.2px;top:1610.6px;font:400 23.5px/1 'Liberation Sans',sans-serif;color:#2a2a2a;-webkit-text-stroke:0.3px #2a2a2a;">11</div>
<div class="t" style="left:2448.9px;top:1610.6px;font:400 23.5px/1 'Liberation Sans',sans-serif;color:#2a2a2a;-webkit-text-stroke:0.3px #2a2a2a;">12</div>
<div class="t" style="left:2540.5px;top:1610.6px;font:400 23.5px/1 'Liberation Sans',sans-serif;color:#2a2a2a;-webkit-text-stroke:0.3px #2a2a2a;">13</div>
<div class="t" style="left:2632.1px;top:1610.6px;font:400 23.5px/1 'Liberation Sans',sans-serif;color:#2a2a2a;-webkit-text-stroke:0.3px #2a2a2a;">14</div>
<div class="t" style="left:2723.7px;top:1610.6px;font:400 23.5px/1 'Liberation Sans',sans-serif;color:#2a2a2a;-webkit-text-stroke:0.3px #2a2a2a;">15</div>
<div class="t" style="left:2815.3px;top:1610.6px;font:400 23.5px/1 'Liberation Sans',sans-serif;color:#2a2a2a;-webkit-text-stroke:0.3px #2a2a2a;">16</div>
<div class="t" style="left:2906.9px;top:1610.6px;font:400 23.5px/1 'Liberation Sans',sans-serif;color:#2a2a2a;-webkit-text-stroke:0.3px #2a2a2a;">17</div>
<div class="t" style="left:2998.5px;top:1610.6px;font:400 23.5px/1 'Liberation Sans',sans-serif;color:#2a2a2a;-webkit-text-stroke:0.3px #2a2a2a;">18</div>
<div class="t" style="left:3090.1px;top:1610.6px;font:400 23.5px/1 'Liberation Sans',sans-serif;color:#2a2a2a;-webkit-text-stroke:0.3px #2a2a2a;">19</div>
<div class="t" style="left:3181.7px;top:1610.6px;font:400 23.5px/1 'Liberation Sans',sans-serif;color:#2a2a2a;-webkit-text-stroke:0.3px #2a2a2a;">20</div>
<div class="t" style="left:3273.3px;top:1610.6px;font:400 23.5px/1 'Liberation Sans',sans-serif;color:#2a2a2a;-webkit-text-stroke:0.3px #2a2a2a;">21</div>
<div class="t" style="left:3364.9px;top:1610.6px;font:400 23.5px/1 'Liberation Sans',sans-serif;color:#2a2a2a;-webkit-text-stroke:0.3px #2a2a2a;">22</div>
<div class="t" style="left:3456.5px;top:1610.6px;font:400 23.5px/1 'Liberation Sans',sans-serif;color:#2a2a2a;-webkit-text-stroke:0.3px #2a2a2a;">23</div>
<div class="t" style="left:3554.4px;top:1617.0px;font:400 13px/1 'Liberation Sans',sans-serif;color:#333;">•••</div>
<div class="t" style="left:3626.7px;top:1610.6px;font:400 23.5px/1 'Liberation Sans',sans-serif;color:#2a2a2a;-webkit-text-stroke:0.3px #2a2a2a;">1219</div>
<div class="t" style="left:3738.6px;top:1601.9px;font:400 35px/1 'Liberation Sans',sans-serif;color:#2a2a2a;">›</div>
<div class="b" style="left:20px;top:1725.0px;width:3770px;height:60.2px;background:#f9f9f9;border-bottom:2px solid #cfcfcf"></div>
<div class="b" style="left:20px;top:1785.2px;width:3770px;height:60.2px;background:#eeeeee;border-bottom:2px solid #cfcfcf"></div>
<div class="b" style="left:20px;top:1845.4px;width:3770px;height:60.2px;background:#f9f9f9;border-bottom:2px solid #cfcfcf"></div>
<div class="b" style="left:20px;top:1905.6px;width:3770px;height:60.2px;background:#eeeeee;border-bottom:2px solid #cfcfcf"></div>
<div class="b" style="left:20px;top:1965.8px;width:3770px;height:60.2px;background:#f9f9f9;border-bottom:2px solid #cfcfcf"></div>
<div class="b" style="left:20px;top:2026.0px;width:3770px;height:60.2px;background:#eeeeee;border-bottom:2px solid #cfcfcf"></div>
<div class="b" style="left:20px;top:2086.2px;width:3770px;height:60.2px;background:#f9f9f9;border-bottom:2px solid #cfcfcf"></div>
<div class="b" style="left:20px;top:1721px;width:92px;height:4px;background:#c8c8c8"></div>
<div class="b" style="left:112px;top:1661px;width:4px;height:440px;background:#cfcfcf"></div>
<div class="b" style="left:122.5px;top:1723px;width:297px;height:4px;background:#c8c8c8"></div>
<div class="b" style="left:426.5px;top:1723px;width:297px;height:4px;background:#c8c8c8"></div>
<div class="b" style="left:419.5px;top:1661px;width:2px;height:62px;background:#cfcfcf"></div>
<div class="b" style="left:422.5px;top:1727px;width:2px;height:380px;background:#cfcfcf"></div>
<div class="b" style="left:730.5px;top:1723px;width:297px;height:4px;background:#c8c8c8"></div>
<div class="b" style="left:723.5px;top:1661px;width:2px;height:62px;background:#cfcfcf"></div>
<div class="b" style="left:726.5px;top:1727px;width:2px;height:380px;background:#cfcfcf"></div>
<div class="b" style="left:1034.5px;top:1723px;width:297px;height:4px;background:#c8c8c8"></div>
<div class="b" style="left:1027.5px;top:1661px;width:2px;height:62px;background:#cfcfcf"></div>
<div class="b" style="left:1030.5px;top:1727px;width:2px;height:380px;background:#cfcfcf"></div>
<div class="b" style="left:1338.5px;top:1723px;width:297px;height:4px;background:#c8c8c8"></div>
<div class="b" style="left:1331.5px;top:1661px;width:2px;height:62px;background:#cfcfcf"></div>
<div class="b" style="left:1334.5px;top:1727px;width:2px;height:380px;background:#cfcfcf"></div>
<div class="b" style="left:1642.5px;top:1723px;width:297px;height:4px;background:#c8c8c8"></div>
<div class="b" style="left:1635.5px;top:1661px;width:2px;height:62px;background:#cfcfcf"></div>
<div class="b" style="left:1638.5px;top:1727px;width:2px;height:380px;background:#cfcfcf"></div>
<div class="b" style="left:1946.5px;top:1723px;width:297px;height:4px;background:#c8c8c8"></div>
<div class="b" style="left:1939.5px;top:1661px;width:2px;height:62px;background:#cfcfcf"></div>
<div class="b" style="left:1942.5px;top:1727px;width:2px;height:380px;background:#cfcfcf"></div>
<div class="b" style="left:2250.5px;top:1723px;width:297px;height:4px;background:#c8c8c8"></div>
<div class="b" style="left:2243.5px;top:1661px;width:2px;height:62px;background:#cfcfcf"></div>
<div class="b" style="left:2246.5px;top:1727px;width:2px;height:380px;background:#cfcfcf"></div>
<div class="b" style="left:2554.5px;top:1723px;width:297px;height:4px;background:#c8c8c8"></div>
<div class="b" style="left:2547.5px;top:1661px;width:2px;height:62px;background:#cfcfcf"></div>
<div class="b" style="left:2550.5px;top:1727px;width:2px;height:380px;background:#cfcfcf"></div>
<div class="b" style="left:2858.5px;top:1723px;width:297px;height:4px;background:#c8c8c8"></div>
<div class="b" style="left:2851.5px;top:1661px;width:2px;height:62px;background:#cfcfcf"></div>
<div class="b" style="left:2854.5px;top:1727px;width:2px;height:380px;background:#cfcfcf"></div>
<div class="b" style="left:3162.5px;top:1723px;width:297px;height:4px;background:#c8c8c8"></div>
<div class="b" style="left:3155.5px;top:1661px;width:2px;height:62px;background:#cfcfcf"></div>
<div class="b" style="left:3158.5px;top:1727px;width:2px;height:380px;background:#cfcfcf"></div>
<div class="b" style="left:3466.5px;top:1723px;width:297px;height:4px;background:#c8c8c8"></div>
<div class="b" style="left:3459.5px;top:1661px;width:2px;height:62px;background:#cfcfcf"></div>
<div class="b" style="left:3462.5px;top:1727px;width:2px;height:380px;background:#cfcfcf"></div>
<div class="b" style="left:3763.5px;top:1661px;width:2px;height:62px;background:#cfcfcf"></div>
<div class="b" style="left:3766.5px;top:1727px;width:2px;height:380px;background:#cfcfcf"></div>
<div class="b" style="left:3770.5px;top:1723px;width:19.5px;height:4px;background:#c8c8c8"></div>
<div class="t" style="left:213.5px;top:1685.5px;font:700 23px/1 'Liberation Sans',sans-serif;color:#333;letter-spacing:0.17px;-webkit-text-stroke:0.4px #333;">DEGREE</div>
<svg class="b" style="left:393.5px;top:1683.0px;" width="16" height="22" viewBox="0 0 16 22"><path d="M8 0 L16 9 H0Z M8 22 L16 13 H0Z" fill="#b5b5b5"/></svg>
<div class="t" style="left:495.5px;top:1685.5px;font:700 23px/1 'Liberation Sans',sans-serif;color:#333;letter-spacing:1.13px;-webkit-text-stroke:0.4px #333;">DEGREE_IN</div>
<svg class="b" style="left:697.5px;top:1683.0px;" width="16" height="22" viewBox="0 0 16 22"><path d="M8 0 L16 9 H0Z M8 22 L16 13 H0Z" fill="#b5b5b5"/></svg>
<div class="t" style="left:786.0px;top:1685.5px;font:700 23px/1 'Liberation Sans',sans-serif;color:#333;letter-spacing:1.17px;-webkit-text-stroke:0.4px #333;">DEGREE_OUT</div>
<svg class="b" style="left:1001.5px;top:1683.0px;" width="16" height="22" viewBox="0 0 16 22"><path d="M8 0 L16 9 H0Z M8 22 L16 13 H0Z" fill="#b5b5b5"/></svg>
<div class="t" style="left:1162.0px;top:1685.5px;font:700 23px/1 'Liberation Sans',sans-serif;color:#333;letter-spacing:2.00px;-webkit-text-stroke:0.4px #333;">ID</div>
<svg class="b" style="left:1305.5px;top:1683.0px;" width="16" height="22" viewBox="0 0 16 22"><path d="M8 0 L16 9 H0Z M8 22 L16 13 H0Z" fill="#b5b5b5"/></svg>
<div class="t" style="left:1443.5px;top:1685.5px;font:700 23px/1 'Liberation Sans',sans-serif;color:#333;letter-spacing:1.18px;-webkit-text-stroke:0.4px #333;">NODE</div>
<svg class="b" style="left:1609.5px;top:1683.0px;" width="16" height="22" viewBox="0 0 16 22"><path d="M8 0 L16 9 H0Z M8 22 L16 13 H0Z" fill="#b5b5b5"/></svg>
<div class="t" style="left:1751.0px;top:1685.5px;font:700 23px/1 'Liberation Sans',sans-serif;color:#333;letter-spacing:0.98px;-webkit-text-stroke:0.4px #333;">TYPE</div>
<svg class="b" style="left:1913.5px;top:1683.0px;" width="16" height="22" viewBox="0 0 16 22"><path d="M8 0 L16 9 H0Z M8 22 L16 13 H0Z" fill="#b5b5b5"/></svg>
<div class="b" style="left:1945.5px;top:1661px;width:299px;height:63px;background:#0562cf"></div>
<div class="t" style="left:2049.0px;top:1680.5px;font:700 29px/1 'Liberation Sans',sans-serif;color:#fff;-webkit-text-stroke:0.4px #fff;">N</div>
<div class="t" style="left:2071.0px;top:1685.5px;font:700 23px/1 'Liberation Sans',sans-serif;color:#fff;letter-spacing:0.58px;-webkit-text-stroke:0.4px #fff;">ODE</div>
<svg class="b" style="left:2217px;top:1682px" width="18" height="9" viewBox="0 0 18 9"><path d="M0 9L9 0L18 9Z" fill="#fff"/></svg>
<div class="t" style="left:56.9px;top:1740.8px;font:400 31px/1 'Liberation Sans',sans-serif;color:#0c0c0c;-webkit-text-stroke:0.4px #0c0c0c;">1</div>
<div class="t" style="left:128.5px;top:1741.9px;font:400 28.5px/1 'Liberation Sans',sans-serif;color:#0c0c0c;-webkit-text-stroke:0.4px #0c0c0c;">1</div>
<div class="t" style="left:432.5px;top:1741.9px;font:400 28.5px/1 'Liberation Sans',sans-serif;color:#0c0c0c;-webkit-text-stroke:0.4px #0c0c0c;">1</div>
<div class="t" style="left:736.5px;top:1741.9px;font:400 28.5px/1 'Liberation Sans',sans-serif;color:#0c0c0c;-webkit-text-stroke:0.4px #0c0c0c;">0</div>
<div class="t" style="left:1040.5px;top:1741.9px;font:400 28.5px/1 'Liberation Sans',sans-serif;color:#0c0c0c;-webkit-text-stroke:0.4px #0c0c0c;">0</div>
<div class="t" style="left:1344.5px;top:1741.9px;font:400 28.5px/1 'Liberation Sans',sans-serif;color:#0c0c0c;letter-spacing:0.77px;-webkit-text-stroke:0.4px #0c0c0c;">02b03d7.netsolstor...</div>
<div class="t" style="left:1648.5px;top:1741.9px;font:400 28.5px/1 'Liberation Sans',sans-serif;color:#0c0c0c;letter-spacing:1.04px;-webkit-text-stroke:0.4px #0c0c0c;">host</div>
<div class="t" style="left:1952.5px;top:1741.9px;font:400 28.5px/1 'Liberation Sans',sans-serif;color:#0c0c0c;letter-spacing:0.77px;-webkit-text-stroke:0.4px #0c0c0c;">02b03d7.netsolstor...</div>
<div class="t" style="left:56.9px;top:1801.0px;font:400 31px/1 'Liberation Sans',sans-serif;color:#0c0c0c;-webkit-text-stroke:0.4px #0c0c0c;">2</div>
<div class="t" style="left:128.5px;top:1802.1px;font:400 28.5px/1 'Liberation Sans',sans-serif;color:#0c0c0c;-webkit-text-stroke:0.4px #0c0c0c;">3</div>
<div class="t" style="left:432.5px;top:1802.1px;font:400 28.5px/1 'Liberation Sans',sans-serif;color:#0c0c0c;-webkit-text-stroke:0.4px #0c0c0c;">0</div>
<div class="t" style="left:736.5px;top:1802.1px;font:400 28.5px/1 'Liberation Sans',sans-serif;color:#0c0c0c;-webkit-text-stroke:0.4px #0c0c0c;">3</div>
<div class="t" style="left:1040.5px;top:1802.1px;font:400 28.5px/1 'Liberation Sans',sans-serif;color:#0c0c0c;-webkit-text-stroke:0.4px #0c0c0c;">1</div>
<div class="t" style="left:1344.5px;top:1802.1px;font:400 28.5px/1 'Liberation Sans',sans-serif;color:#0c0c0c;letter-spacing:0.32px;-webkit-text-stroke:0.4px #0c0c0c;">101fetishes.com</div>
<div class="t" style="left:1648.5px;top:1802.1px;font:400 28.5px/1 'Liberation Sans',sans-serif;color:#0c0c0c;letter-spacing:1.04px;-webkit-text-stroke:0.4px #0c0c0c;">host</div>
<div class="t" style="left:1952.5px;top:1802.1px;font:400 28.5px/1 'Liberation Sans',sans-serif;color:#0c0c0c;letter-spacing:0.32px;-webkit-text-stroke:0.4px #0c0c0c;">101fetishes.com</div>
<div class="t" style="left:56.9px;top:1861.2px;font:400 31px/1 'Liberation Sans',sans-serif;color:#0c0c0c;-webkit-text-stroke:0.4px #0c0c0c;">3</div>
<div class="t" style="left:128.5px;top:1862.3px;font:400 28.5px/1 'Liberation Sans',sans-serif;color:#0c0c0c;-webkit-text-stroke:0.4px #0c0c0c;">1</div>
<div class="t" style="left:432.5px;top:1862.3px;font:400 28.5px/1 'Liberation Sans',sans-serif;color:#0c0c0c;-webkit-text-stroke:0.4px #0c0c0c;">1</div>
<div class="t" style="left:736.5px;top:1862.3px;font:400 28.5px/1 'Liberation Sans',sans-serif;color:#0c0c0c;-webkit-text-stroke:0.4px #0c0c0c;">0</div>
<div class="t" style="left:1040.5px;top:1862.3px;font:400 28.5px/1 'Liberation Sans',sans-serif;color:#0c0c0c;-webkit-text-stroke:0.4px #0c0c0c;">2</div>
<div class="t" style="left:1344.5px;top:1862.3px;font:400 28.5px/1 'Liberation Sans',sans-serif;color:#0c0c0c;transform:scaleX(0.9945);transform-origin:0 0;-webkit-text-stroke:0.4px #0c0c0c;">135.196.23.137</div>
<div class="t" style="left:1648.5px;top:1862.3px;font:400 28.5px/1 'Liberation Sans',sans-serif;color:#0c0c0c;letter-spacing:1.04px;-webkit-text-stroke:0.4px #0c0c0c;">host</div>
<div class="t" style="left:1952.5px;top:1862.3px;font:400 28.5px/1 'Liberation Sans',sans-serif;color:#0c0c0c;transform:scaleX(0.9945);transform-origin:0 0;-webkit-text-stroke:0.4px #0c0c0c;">135.196.23.137</div>
<div class="t" style="left:56.9px;top:1921.4px;font:400 31px/1 'Liberation Sans',sans-serif;color:#0c0c0c;-webkit-text-stroke:0.4px #0c0c0c;">4</div>
<div class="t" style="left:128.5px;top:1922.5px;font:400 28.5px/1 'Liberation Sans',sans-serif;color:#0c0c0c;-webkit-text-stroke:0.4px #0c0c0c;">1</div>
<div class="t" style="left:432.5px;top:1922.5px;font:400 28.5px/1 'Liberation Sans',sans-serif;color:#0c0c0c;-webkit-text-stroke:0.4px #0c0c0c;">1</div>
<div class="t" style="left:736.5px;top:1922.5px;font:400 28.5px/1 'Liberation Sans',sans-serif;color:#0c0c0c;-webkit-text-stroke:0.4px #0c0c0c;">0</div>
<div class="t" style="left:1040.5px;top:1922.5px;font:400 28.5px/1 'Liberation Sans',sans-serif;color:#0c0c0c;-webkit-text-stroke:0.4px #0c0c0c;">3</div>
<div class="t" style="left:1344.5px;top:1922.5px;font:400 28.5px/1 'Liberation Sans',sans-serif;color:#0c0c0c;letter-spacing:0.54px;-webkit-text-stroke:0.4px #0c0c0c;">1stopfoodstorage.c...</div>
<div class="t" style="left:1648.5px;top:1922.5px;font:400 28.5px/1 'Liberation Sans',sans-serif;color:#0c0c0c;letter-spacing:1.04px;-webkit-text-stroke:0.4px #0c0c0c;">host</div>
<div class="t" style="left:1952.5px;top:1922.5px;font:400 28.5px/1 'Liberation Sans',sans-serif;color:#0c0c0c;letter-spacing:0.54px;-webkit-text-stroke:0.4px #0c0c0c;">1stopfoodstorage.c...</div>
<div class="t" style="left:56.9px;top:1981.6px;font:400 31px/1 'Liberation Sans',sans-serif;color:#0c0c0c;-webkit-text-stroke:0.4px #0c0c0c;">5</div>
<div class="t" style="left:128.5px;top:1982.7px;font:400 28.5px/1 'Liberation Sans',sans-serif;color:#0c0c0c;-webkit-text-stroke:0.4px #0c0c0c;">1</div>
<div class="t" style="left:432.5px;top:1982.7px;font:400 28.5px/1 'Liberation Sans',sans-serif;color:#0c0c0c;-webkit-text-stroke:0.4px #0c0c0c;">1</div>
<div class="t" style="left:736.5px;top:1982.7px;font:400 28.5px/1 'Liberation Sans',sans-serif;color:#0c0c0c;-webkit-text-stroke:0.4px #0c0c0c;">0</div>
<div class="t" style="left:1040.5px;top:1982.7px;font:400 28.5px/1 'Liberation Sans',sans-serif;color:#0c0c0c;-webkit-text-stroke:0.4px #0c0c0c;">4</div>
<div class="t" style="left:1344.5px;top:1982.7px;font:400 28.5px/1 'Liberation Sans',sans-serif;color:#0c0c0c;letter-spacing:0.88px;-webkit-text-stroke:0.4px #0c0c0c;">2004.dsn.org</div>
<div class="t" style="left:1648.5px;top:1982.7px;font:400 28.5px/1 'Liberation Sans',sans-serif;color:#0c0c0c;letter-spacing:1.04px;-webkit-text-stroke:0.4px #0c0c0c;">host</div>
<div class="t" style="left:1952.5px;top:1982.7px;font:400 28.5px/1 'Liberation Sans',sans-serif;color:#0c0c0c;letter-spacing:0.88px;-webkit-text-stroke:0.4px #0c0c0c;">2004.dsn.org</div>
<div class="t" style="left:56.9px;top:2041.8px;font:400 31px/1 'Liberation Sans',sans-serif;color:#0c0c0c;-webkit-text-stroke:0.4px #0c0c0c;">6</div>
<div class="t" style="left:128.5px;top:2042.9px;font:400 28.5px/1 'Liberation Sans',sans-serif;color:#0c0c0c;-webkit-text-stroke:0.4px #0c0c0c;">1</div>
<div class="t" style="left:432.5px;top:2042.9px;font:400 28.5px/1 'Liberation Sans',sans-serif;color:#0c0c0c;-webkit-text-stroke:0.4px #0c0c0c;">0</div>
<div class="t" style="left:736.5px;top:2042.9px;font:400 28.5px/1 'Liberation Sans',sans-serif;color:#0c0c0c;-webkit-text-stroke:0.4px #0c0c0c;">1</div>
<div class="t" style="left:1040.5px;top:2042.9px;font:400 28.5px/1 'Liberation Sans',sans-serif;color:#0c0c0c;-webkit-text-stroke:0.4px #0c0c0c;">5</div>
<div class="t" style="left:1344.5px;top:2042.9px;font:400 28.5px/1 'Liberation Sans',sans-serif;color:#0c0c0c;letter-spacing:0.72px;-webkit-text-stroke:0.4px #0c0c0c;">2012.netfirms.com</div>
<div class="t" style="left:1648.5px;top:2042.9px;font:400 28.5px/1 'Liberation Sans',sans-serif;color:#0c0c0c;letter-spacing:1.04px;-webkit-text-stroke:0.4px #0c0c0c;">host</div>
<div class="t" style="left:1952.5px;top:2042.9px;font:400 28.5px/1 'Liberation Sans',sans-serif;color:#0c0c0c;letter-spacing:0.72px;-webkit-text-stroke:0.4px #0c0c0c;">2012.netfirms.com</div>
<div class="t" style="left:3603.0px;top:2037.9px;font:400 28.5px/1 'Liberation Sans',sans-serif;color:#6a3fd0;font-family:'Liberation Sans','Noto Sans CJK SC',sans-serif;">来源@梦家博客</div>
</div></body></html>
